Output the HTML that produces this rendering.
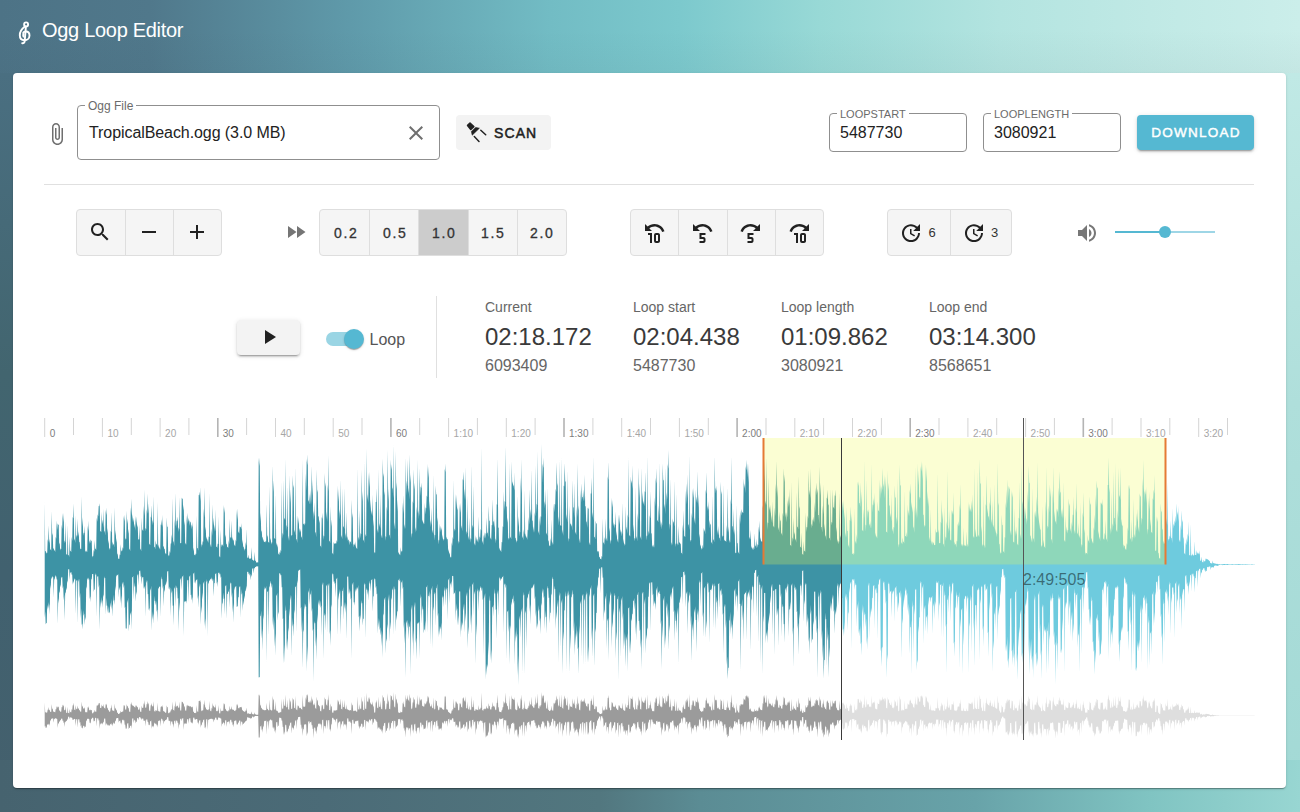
<!DOCTYPE html>
<html><head><meta charset="utf-8">
<style>
*{box-sizing:border-box;margin:0;padding:0}
html,body{width:1300px;height:812px;overflow:hidden}
body{position:relative;font-family:"Liberation Sans",sans-serif;background:#7cc9cd}
.bgt{position:absolute;left:0;top:0;width:1300px;height:90px;
 background:linear-gradient(180deg,rgba(40,60,70,0) 30px,rgba(40,60,70,0.06) 90px),
 linear-gradient(90deg,#4d7386 0,#50788b 150px,#5f9aaa 350px,#72bcc4 550px,#7cc9cd 680px,#98d9d6 820px,#b3e4e0 1000px,#c0e9e5 1150px,#cbeeea 1300px)}
.bgl{position:absolute;left:0;top:73px;width:40px;height:739px;background:linear-gradient(180deg,#4a6f81 0,#42656f 300px,#41616f 500px,#44606d 739px)}
.bgr{position:absolute;left:1260px;top:73px;width:40px;height:739px;background:linear-gradient(180deg,#c0e9e5 0,#afdfdb 330px,#a2d9d5 739px)}
.bgb{position:absolute;left:0;top:760px;width:1300px;height:52px;background:linear-gradient(90deg,#46636f 0,#4b6b77 325px,#52777f 600px,#5b8c94 700px,#68a3a9 975px,#80c4c2 1150px,#98d6d2 1300px)}
.abs{position:absolute}
.card{position:absolute;left:13px;top:73px;width:1273px;height:715px;background:#fff;border-radius:4px;
 box-shadow:0 2px 1px -1px rgba(0,0,0,.2),0 1px 1px 0 rgba(0,0,0,.14),0 1px 3px 0 rgba(0,0,0,.12)}
.title{position:absolute;left:42px;top:19px;font-size:20px;color:#fff;letter-spacing:-0.3px}
.field{position:absolute;border:1px solid #8f8f8f;border-radius:4px}
.flabel{position:absolute;background:#fff;color:#6b6b6b;font-size:12px;padding:0 3px;line-height:12px}
.ftext{position:absolute;color:#222;font-size:16px;line-height:16px}
.btn{position:absolute;background:#f3f3f3;border-radius:4px}
.grp{position:absolute;top:209px;height:47px;background:#f5f5f5;border:1px solid #dedede;border-radius:4px;overflow:hidden}
.grp .sep{position:absolute;top:0;bottom:0;width:1px;background:#dedede}
.spd{position:absolute;top:16px;font-size:14px;line-height:14px;color:#333;letter-spacing:1.6px;-webkit-text-stroke:0.3px #333}
.stat{position:absolute;color:#333}
.lab{font-size:14px;color:#666;line-height:14px}
.big{font-size:24px;color:#3a3a3a;line-height:24px}
.small{font-size:16px;color:#666;line-height:16px}
</style></head><body>
<div class="bgt"></div><div class="bgl"></div><div class="bgr"></div><div class="bgb"></div>
<!-- header -->
<svg class="abs" style="left:0;top:0" width="40" height="50" viewBox="0 0 40 50">
<g fill="none" stroke="#fff" stroke-width="1.9" stroke-linecap="round" stroke-linejoin="round">
<circle cx="26.1" cy="24.4" r="2"/>
<path d="M24.9 26.6 C21.3 29.3 19.8 32 19.8 35.2 C19.8 38.4 21.9 40.2 24.5 40.2 C27.4 40.2 29.5 38.1 29.5 35.4 C29.5 32.9 27.8 31.5 25.9 31.5 C24.2 31.5 23 32.4 23.3 33.6 C23.6 34.6 22.6 35.4 23.6 36.6"/>
<path d="M25.9 26.6 L24.7 41.2 C24.6 42.6 23.7 43.4 22.2 43.2"/>
</g></svg>
<div class="title">Ogg Loop Editor</div>

<div class="card"></div>

<!-- file row -->
<svg class="abs" style="left:45px;top:122px" width="24" height="24" viewBox="0 0 24 24"><path fill="#6f6f6f" d="M16.5 6v11.5c0 2.21-1.79 4-4 4s-4-1.79-4-4V5c0-1.38 1.12-2.5 2.5-2.5s2.5 1.12 2.5 2.5v10.5c0 .55-.45 1-1 1s-1-.45-1-1V6H10v9.5c0 1.38 1.12 2.5 2.5 2.5s2.5-1.12 2.5-2.5V5c0-2.21-1.79-4-4-4S7 2.79 7 5v12.5c0 3.04 2.46 5.5 5.5 5.5s5.5-2.46 5.5-5.5V6h-1.5z"/></svg>
<div class="field" style="left:77px;top:105px;width:363px;height:55px"></div>
<div class="flabel" style="left:85px;top:100px">Ogg File</div>
<div class="ftext" style="left:89px;top:124.5px;letter-spacing:-0.08px">TropicalBeach.ogg (3.0 MB)</div>
<svg class="abs" style="left:404px;top:121px" width="24" height="24" viewBox="0 0 24 24"><path fill="#6f6f6f" d="M19 6.41L17.59 5 12 10.59 6.41 5 5 6.41 10.59 12 5 17.59 6.41 19 12 13.41 17.59 19 19 17.59 13.41 12z"/></svg>

<div class="btn" style="left:456px;top:115px;width:95px;height:35px"></div>
<svg class="abs" style="left:462px;top:118px" width="30" height="28" viewBox="0 0 30 28">
<path d="M5.6 7.4 L8 5.2 L11.8 8.7 L8.8 11.4 Z" fill="#212121" stroke="#212121" stroke-width="1.6" stroke-linejoin="round"/>
<path d="M9.4 13.4 L13.6 9.4 L17.4 10.2 L10.2 17.2 Z" fill="#212121" stroke="#212121" stroke-width="0.6" stroke-linejoin="round"/>
<path d="M18.8 12.3 L23.7 16.8 M12.3 18.6 L17 23.5" stroke="#212121" stroke-width="1.5" stroke-linecap="round"/>
</svg>
<div class="abs" style="left:494px;top:126px;font-size:14px;line-height:14px;color:#212121;letter-spacing:1.1px;-webkit-text-stroke:0.5px #212121">SCAN</div>

<div class="field" style="left:829px;top:113px;width:138px;height:39px"></div>
<div class="flabel" style="left:837px;top:108px;font-size:11px;line-height:12px">LOOPSTART</div>
<div class="ftext" style="left:840px;top:125px">5487730</div>
<div class="field" style="left:983px;top:113px;width:138px;height:39px"></div>
<div class="flabel" style="left:991px;top:108px;font-size:11px;line-height:12px">LOOPLENGTH</div>
<div class="ftext" style="left:994px;top:125px">3080921</div>

<div class="abs" style="left:1137px;top:115px;width:117px;height:35px;background:#55b8d2;border-radius:4px;box-shadow:0 3px 1px -2px rgba(0,0,0,.2),0 2px 2px 0 rgba(0,0,0,.14),0 1px 5px 0 rgba(0,0,0,.12);color:#fff;font-size:13.5px;letter-spacing:1.25px;line-height:35px;text-align:center;padding-left:1px;-webkit-text-stroke:0.45px #fff">DOWNLOAD</div>

<div class="abs" style="left:44px;top:184px;width:1210px;height:1px;background:#e0e0e0"></div>

<!-- toolbar -->
<div class="grp" style="left:76px;width:146px">
 <div class="sep" style="left:48px"></div><div class="sep" style="left:96px"></div>
</div>
<svg class="abs" style="left:88px;top:220px" width="24" height="24" viewBox="0 0 24 24"><path fill="#212121" d="M15.5 14h-.79l-.28-.27C15.41 12.59 16 11.11 16 9.5 16 5.91 13.09 3 9.5 3S3 5.91 3 9.5 5.91 16 9.5 16c1.61 0 3.09-.59 4.23-1.57l.27.28v.79l5 4.99L20.49 19l-4.99-5zm-6 0C7.01 14 5 11.99 5 9.5S7.01 5 9.5 5 14 7.01 14 9.5 11.99 14 9.5 14z"/></svg>
<svg class="abs" style="left:137px;top:220px" width="24" height="24" viewBox="0 0 24 24"><path fill="#212121" d="M19 13H5v-2h14v2z"/></svg>
<svg class="abs" style="left:185px;top:220px" width="24" height="24" viewBox="0 0 24 24"><path fill="#212121" d="M19 13h-6v6h-2v-6H5v-2h6V5h2v6h6v2z"/></svg>

<svg class="abs" style="left:284px;top:220px" width="24" height="24" viewBox="0 0 24 24"><path fill="#757575" d="M4 18l8.5-6L4 6v12zm9-12v12l8.5-6L13 6z"/></svg>

<div class="grp" style="left:319px;width:248px">
 <div class="abs" style="left:99px;top:0;width:49px;height:45px;background:#cccccc"></div>
 <div class="sep" style="left:49px"></div><div class="sep" style="left:98px"></div><div class="sep" style="left:148px"></div><div class="sep" style="left:197px"></div>
 <div class="spd" style="left:14px">0.2</div>
 <div class="spd" style="left:63px">0.5</div>
 <div class="spd" style="left:112px">1.0</div>
 <div class="spd" style="left:161px">1.5</div>
 <div class="spd" style="left:210px">2.0</div>
</div>

<div class="grp" style="left:630px;width:194px">
 <div class="sep" style="left:47px"></div><div class="sep" style="left:96px"></div><div class="sep" style="left:144px"></div>
</div>
<svg class="abs" style="left:642px;top:220.5px" width="24" height="24" viewBox="0 0 24 24"><path fill="#212121" d="M12.5 3C17.15 3 21.08 6.03 22.47 10.22L20.1 11C19.05 7.81 16.04 5.5 12.5 5.5C10.54 5.5 8.77 6.22 7.38 7.38L10 10H3V3L5.6 5.6C7.45 4 9.85 3 12.5 3M10 12V22H8V14H6V12H10M18 14V20C18 21.11 17.11 22 16 22H14A2 2 0 0 1 12 20V14A2 2 0 0 1 14 12H16C17.11 12 18 12.89 18 14M14 14V20H16V14H14Z"/></svg>
<svg class="abs" style="left:690px;top:220.5px" width="24" height="24" viewBox="0 0 24 24"><path fill="#212121" d="M12.5 3C17.15 3 21.08 6.03 22.47 10.22L20.1 11C19.05 7.81 16.04 5.5 12.5 5.5C10.54 5.5 8.77 6.22 7.38 7.38L10 10H3V3L5.6 5.6C7.45 4 9.85 3 12.5 3M9.5 12H15.5V14H11.5V16H13.5C14.61 16 15.5 16.9 15.5 18V20C15.5 21.11 14.61 22 13.5 22H9.5V20H13.5V18H9.5V12Z"/></svg>
<svg class="abs" style="left:739px;top:220.5px" width="24" height="24" viewBox="0 0 24 24"><path fill="#212121" d="M11.5 3C14.15 3 16.55 4 18.4 5.6L21 3V10H14L16.62 7.38C15.23 6.22 13.46 5.5 11.5 5.5C7.96 5.5 4.95 7.81 3.9 11L1.53 10.22C2.92 6.03 6.85 3 11.5 3M8.5 12H14.5V14H10.5V16H12.5C13.61 16 14.5 16.9 14.5 18V20C14.5 21.11 13.61 22 12.5 22H8.5V20H12.5V18H8.5V12Z"/></svg>
<svg class="abs" style="left:787.5px;top:220.5px" width="24" height="24" viewBox="0 0 24 24"><path fill="#212121" d="M10 12V22H8V14H6V12H10M18 14V20C18 21.11 17.11 22 16 22H14A2 2 0 0 1 12 20V14A2 2 0 0 1 14 12H16C17.11 12 18 12.89 18 14M14 14V20H16V14H14M11.5 3C14.15 3 16.55 4 18.4 5.6L21 3V10H14L16.62 7.38C15.23 6.22 13.46 5.5 11.5 5.5C7.96 5.5 4.95 7.81 3.9 11L1.53 10.22C2.92 6.03 6.85 3 11.5 3Z"/></svg>


<div class="grp" style="left:887px;width:125px">
 <div class="sep" style="left:62px"></div>
</div>
<svg class="abs" style="left:899.2px;top:220.5px" width="24" height="24" viewBox="0 0 24 24"><path fill="#212121" d="M21 10.12h-6.78l2.74-2.82c-2.73-2.7-7.15-2.8-9.88-.1-2.73 2.71-2.73 7.08 0 9.79s7.15 2.71 9.88 0C18.32 15.65 19 14.08 19 12.1h2c0 1.98-.88 4.55-2.64 6.29-3.51 3.48-9.21 3.48-12.72 0-3.5-3.47-3.53-9.11-.02-12.58s9.14-3.47 12.65 0L21 3v7.12zM12.5 8v4.25l3.5 2.08-.72 1.21L11 13V8h1.5z"/></svg>
<div class="abs" style="left:928.5px;top:226px;font-size:13px;line-height:13px;color:#333">6</div>
<svg class="abs" style="left:962px;top:220.5px" width="24" height="24" viewBox="0 0 24 24"><path fill="#212121" d="M21 10.12h-6.78l2.74-2.82c-2.73-2.7-7.15-2.8-9.88-.1-2.73 2.71-2.73 7.08 0 9.79s7.15 2.71 9.88 0C18.32 15.65 19 14.08 19 12.1h2c0 1.98-.88 4.55-2.64 6.29-3.51 3.48-9.21 3.48-12.72 0-3.5-3.47-3.53-9.11-.02-12.58s9.14-3.47 12.65 0L21 3v7.12zM12.5 8v4.25l3.5 2.08-.72 1.21L11 13V8h1.5z"/></svg>
<div class="abs" style="left:991px;top:226px;font-size:13px;line-height:13px;color:#333">3</div>


<svg class="abs" style="left:1075px;top:220.5px" width="24" height="24" viewBox="0 0 24 24"><path fill="#777" d="M3 9v6h4l5 5V4L7 9H3zm13.5 3c0-1.77-1.02-3.29-2.5-4.03v8.05c1.48-.73 2.5-2.25 2.5-4.02zM14 3.23v2.06c2.89.86 5 3.54 5 6.71s-2.11 5.85-5 6.71v2.06c4.01-.91 7-4.49 7-8.77s-2.99-7.86-7-8.77z"/></svg>
<div class="abs" style="left:1115px;top:231px;width:100px;height:2px;background:#9ed6e6"></div>
<div class="abs" style="left:1115px;top:231px;width:50px;height:2px;background:#55b8d2"></div>
<div class="abs" style="left:1159px;top:226px;width:12px;height:12px;border-radius:50%;background:#55b8d2"></div>

<!-- play row -->
<div class="btn" style="left:237px;top:320px;width:63px;height:35px;box-shadow:0 3px 1px -2px rgba(0,0,0,.2),0 2px 2px 0 rgba(0,0,0,.14),0 1px 5px 0 rgba(0,0,0,.12)"></div>
<svg class="abs" style="left:257px;top:325px" width="24" height="24" viewBox="0 0 24 24"><path fill="#212121" d="M8 5v14l11-7z"/></svg>
<div class="abs" style="left:326px;top:332px;width:36px;height:14px;border-radius:7px;background:#9ad5e4"></div>
<div class="abs" style="left:344px;top:329px;width:20px;height:20px;border-radius:50%;background:#55b8d2;box-shadow:0 2px 1px -1px rgba(0,0,0,.2),0 1px 1px 0 rgba(0,0,0,.14),0 1px 3px 0 rgba(0,0,0,.12)"></div>
<div class="abs" style="left:369.5px;top:331.5px;font-size:16px;line-height:16px;color:#555">Loop</div>
<div class="abs" style="left:436px;top:296px;width:1px;height:82px;background:#e0e0e0"></div>

<div class="stat" style="left:485px;top:300px"><div class="lab">Current</div></div>
<div class="stat" style="left:485px;top:325px"><div class="big">02:18.172</div></div>
<div class="stat" style="left:485px;top:357.5px"><div class="small">6093409</div></div>
<div class="stat" style="left:633px;top:300px"><div class="lab">Loop start</div></div>
<div class="stat" style="left:633px;top:325px"><div class="big">02:04.438</div></div>
<div class="stat" style="left:633px;top:357.5px"><div class="small">5487730</div></div>
<div class="stat" style="left:781px;top:300px"><div class="lab">Loop length</div></div>
<div class="stat" style="left:781px;top:325px"><div class="big">01:09.862</div></div>
<div class="stat" style="left:781px;top:357.5px"><div class="small">3080921</div></div>
<div class="stat" style="left:929px;top:300px"><div class="lab">Loop end</div></div>
<div class="stat" style="left:929px;top:325px"><div class="big">03:14.300</div></div>
<div class="stat" style="left:929px;top:357.5px"><div class="small">8568651</div></div>

<svg class="abs" style="left:0;top:0" width="1300" height="812" viewBox="0 0 1300 812">
<defs><path id="wm" d="M44.7 564.5L44.7 501.5L45.2 551.1L45.7 551.1L46.2 553.7L46.7 552.3L47.2 552.9L47.7 539.0L48.2 542.0L48.7 525.2L49.2 543.2L49.7 538.8L50.2 550.2L50.7 549.1L51.2 550.7L51.7 511.1L52.2 535.5L52.7 533.0L53.2 549.1L53.7 548.0L54.2 551.2L54.7 549.4L55.2 552.2L55.7 536.7L56.2 538.8L56.7 520.3L57.2 530.3L57.7 523.2L58.2 525.0L58.7 524.3L59.2 544.4L59.7 542.4L60.2 550.6L60.7 548.4L61.2 549.3L61.7 524.4L62.2 528.9L62.7 513.0L63.2 522.1L63.7 512.7L64.2 543.6L64.7 540.2L65.2 542.5L65.7 521.3L66.2 555.1L66.7 554.1L67.2 554.8L67.7 524.5L68.2 555.1L68.7 555.1L69.2 557.0L69.7 536.4L70.2 551.4L70.7 550.5L71.2 552.2L71.7 536.7L72.2 540.9L72.7 517.0L73.2 518.3L73.7 503.5L74.2 540.6L74.7 538.4L75.2 542.9L75.7 515.2L76.2 537.9L76.7 535.2L77.2 535.7L77.7 518.5L78.2 536.1L78.7 531.2L79.2 542.5L79.7 541.6L80.2 549.4L80.7 548.4L81.2 549.3L81.7 496.3L82.2 526.3L82.7 517.8L83.2 535.8L83.7 532.7L84.2 532.9L84.7 525.7L85.2 552.6L85.7 550.4L86.2 552.2L86.7 550.3L87.2 552.3L87.7 525.6L88.2 531.0L88.7 520.4L89.2 544.1L89.7 540.2L90.2 543.2L90.7 539.2L91.2 541.2L91.7 540.2L92.2 557.5L92.7 556.1L93.2 556.2L93.7 549.7L94.2 551.7L94.7 540.1L95.2 549.5L95.7 548.3L96.2 550.3L96.7 517.4L97.2 521.7L97.7 514.3L98.2 516.4L98.7 506.0L99.2 506.2L99.7 503.3L100.2 531.5L100.7 530.9L101.2 532.3L101.7 511.7L102.2 524.0L102.7 519.5L103.2 527.9L103.7 508.8L104.2 531.9L104.7 530.5L105.2 535.6L105.7 509.8L106.2 515.0L106.7 507.6L107.2 533.1L107.7 528.1L108.2 543.7L108.7 540.1L109.2 549.9L109.7 548.1L110.2 548.7L110.7 530.4L111.2 532.6L111.7 512.0L112.2 545.9L112.7 541.6L113.2 545.0L113.7 543.5L114.2 547.5L114.7 507.3L115.2 535.5L115.7 529.9L116.2 542.8L116.7 538.0L117.2 554.8L117.7 553.2L118.2 559.0L118.7 558.6L119.2 559.2L119.7 554.3L120.2 555.2L120.7 544.1L121.2 551.7L121.7 550.6L122.2 550.8L122.7 547.1L123.2 548.7L123.7 515.7L124.2 521.1L124.7 514.4L125.2 540.1L125.7 538.3L126.2 539.1L126.7 510.5L127.2 523.7L127.7 518.7L128.2 533.7L128.7 529.1L129.2 550.0L129.7 548.4L130.2 551.4L130.7 507.1L131.2 514.9L131.7 498.5L132.2 521.9L132.7 514.6L133.2 522.2L133.7 517.5L134.2 527.9L134.7 523.4L135.2 530.8L135.7 515.6L136.2 525.1L136.7 516.2L137.2 527.6L137.7 524.9L138.2 539.7L138.7 539.3L139.2 539.5L139.7 524.4L140.2 549.9L140.7 548.6L141.2 551.5L141.7 517.5L142.2 531.1L142.7 529.3L143.2 531.2L143.7 505.8L144.2 516.0L144.7 489.6L145.2 531.4L145.7 527.8L146.2 529.6L146.7 508.9L147.2 513.8L147.7 493.6L148.2 513.4L148.7 503.1L149.2 545.1L149.7 543.5L150.2 545.2L150.7 516.6L151.2 517.9L151.7 505.0L152.2 525.3L152.7 519.7L153.2 523.3L153.7 496.2L154.2 546.9L154.7 546.7L155.2 549.3L155.7 540.1L156.2 544.7L156.7 543.5L157.2 546.1L157.7 501.7L158.2 547.7L158.7 544.3L159.2 549.6L159.7 546.9L160.2 550.1L160.7 524.3L161.2 525.4L161.7 519.3L162.2 526.9L162.7 514.8L163.2 546.8L163.7 546.1L164.2 549.3L164.7 548.6L165.2 554.6L165.7 552.8L166.2 554.2L166.7 517.2L167.2 527.3L167.7 526.2L168.2 556.6L168.7 555.1L169.2 555.7L169.7 550.8L170.2 552.9L170.7 543.4L171.2 543.6L171.7 534.3L172.2 538.8L172.7 497.4L173.2 541.6L173.7 541.5L174.2 546.1L174.7 519.0L175.2 526.8L175.7 492.7L176.2 528.3L176.7 520.7L177.2 520.8L177.7 516.5L178.2 532.0L178.7 527.3L179.2 529.6L179.7 496.5L180.2 543.4L180.7 543.0L181.2 543.1L181.7 497.4L182.2 499.3L182.7 498.0L183.2 510.6L183.7 504.8L184.2 525.3L184.7 520.8L185.2 544.7L185.7 542.8L186.2 544.8L186.7 515.3L187.2 523.9L187.7 512.8L188.2 521.5L188.7 517.8L189.2 525.9L189.7 520.0L190.2 522.8L190.7 521.2L191.2 529.3L191.7 524.3L192.2 527.1L192.7 522.1L193.2 550.9L193.7 547.6L194.2 555.5L194.7 554.4L195.2 555.6L195.7 553.6L196.2 553.9L196.7 515.2L197.2 548.0L197.7 547.9L198.2 550.7L198.7 495.1L199.2 495.2L199.7 491.5L200.2 501.1L200.7 486.7L201.2 547.4L201.7 544.0L202.2 545.6L202.7 541.2L203.2 541.8L203.7 508.2L204.2 517.5L204.7 487.3L205.2 530.2L205.7 526.6L206.2 539.3L206.7 536.5L207.2 541.9L207.7 538.5L208.2 543.3L208.7 536.3L209.2 537.2L209.7 492.8L210.2 547.4L210.7 543.8L211.2 547.6L211.7 528.5L212.2 535.7L212.7 504.1L213.2 525.2L213.7 517.4L214.2 531.7L214.7 524.7L215.2 531.5L215.7 509.3L216.2 547.1L216.7 546.4L217.2 547.9L217.7 543.5L218.2 544.3L218.7 516.0L219.2 557.5L219.7 555.9L220.2 557.4L220.7 529.6L221.2 547.6L221.7 544.3L222.2 545.7L222.7 544.0L223.2 546.8L223.7 504.8L224.2 513.0L224.7 506.7L225.2 537.2L225.7 534.5L226.2 544.4L226.7 543.4L227.2 547.2L227.7 547.0L228.2 547.9L228.7 539.9L229.2 544.2L229.7 518.5L230.2 538.6L230.7 537.0L231.2 537.7L231.7 520.3L232.2 540.7L232.7 537.0L233.2 540.9L233.7 539.2L234.2 546.2L234.7 544.2L235.2 546.6L235.7 539.6L236.2 541.4L236.7 509.7L237.2 520.0L237.7 507.9L238.2 533.2L238.7 531.3L239.2 533.8L239.7 526.3L240.2 527.3L240.7 526.4L241.2 529.2L241.7 523.1L242.2 544.3L242.7 539.4L243.2 547.0L243.7 546.4L244.2 551.0L244.7 548.5L245.2 549.0L245.7 541.9L246.2 545.8L246.7 528.7L247.2 558.4L247.7 557.2L248.2 558.3L248.7 554.6L249.2 559.1L249.7 558.4L250.2 559.1L250.7 558.2L251.2 558.3L251.7 547.0L252.2 560.0L252.7 559.4L253.2 561.1L253.7 560.3L254.2 560.3L254.7 551.8L255.2 561.0L255.7 560.5L256.2 562.5L256.7 562.4L257.2 562.6L257.7 562.3L258.2 562.5L258.7 457.5L259.2 466.0L259.7 457.5L260.2 521.2L260.7 512.7L261.2 531.9L261.7 530.2L262.2 537.8L262.7 537.0L263.2 541.9L263.7 538.7L264.2 542.0L264.7 541.9L265.2 542.6L265.7 541.1L266.2 541.5L266.7 503.5L267.2 537.0L267.7 535.1L268.2 542.5L268.7 542.0L269.2 542.7L269.7 485.2L270.2 540.5L270.7 538.1L271.2 544.4L271.7 542.2L272.2 542.5L272.7 465.3L273.2 491.8L273.7 480.1L274.2 538.8L274.7 538.0L275.2 539.2L275.7 494.0L276.2 545.5L276.7 542.6L277.2 547.5L277.7 543.8L278.2 554.8L278.7 553.2L279.2 555.3L279.7 551.4L280.2 553.4L280.7 549.6L281.2 551.6L281.7 481.6L282.2 538.7L282.7 532.5L283.2 534.9L283.7 479.5L284.2 520.1L284.7 517.7L285.2 520.1L285.7 458.7L286.2 531.1L286.7 524.7L287.2 527.4L287.7 485.7L288.2 540.8L288.7 535.4L289.2 540.9L289.7 474.4L290.2 503.2L290.7 488.8L291.2 536.4L291.7 534.9L292.2 535.0L292.7 475.2L293.2 488.0L293.7 484.8L294.2 532.3L294.7 529.8L295.2 535.8L295.7 465.9L296.2 539.4L296.7 539.0L297.2 543.1L297.7 515.3L298.2 524.0L298.7 516.9L299.2 533.1L299.7 528.1L300.2 532.1L300.7 528.7L301.2 537.5L301.7 536.3L302.2 540.2L302.7 459.4L303.2 524.2L303.7 523.4L304.2 525.4L304.7 523.3L305.2 523.7L305.7 473.0L306.2 490.7L306.7 458.9L307.2 465.3L307.7 454.2L308.2 501.3L308.7 499.9L309.2 504.6L309.7 493.7L310.2 504.8L310.7 489.7L311.2 504.5L311.7 465.4L312.2 495.2L312.7 479.4L313.2 519.9L313.7 510.6L314.2 516.5L314.7 501.9L315.2 532.7L315.7 532.1L316.2 537.3L316.7 469.3L317.2 492.5L317.7 489.4L318.2 516.7L318.7 516.1L319.2 522.9L319.7 519.5L320.2 546.5L320.7 545.5L321.2 547.7L321.7 517.1L322.2 518.7L322.7 512.8L323.2 540.0L323.7 535.2L324.2 536.5L324.7 473.0L325.2 487.0L325.7 482.3L326.2 519.7L326.7 511.6L327.2 522.1L327.7 484.5L328.2 490.9L328.7 455.2L329.2 541.6L329.7 540.6L330.2 543.3L330.7 506.3L331.2 526.5L331.7 519.5L332.2 554.1L332.7 552.7L333.2 554.8L333.7 541.8L334.2 544.0L334.7 543.3L335.2 543.9L335.7 542.8L336.2 543.8L336.7 539.9L337.2 541.9L337.7 485.2L338.2 501.4L338.7 488.7L339.2 519.5L339.7 509.4L340.2 516.1L340.7 479.1L341.2 537.7L341.7 535.1L342.2 539.4L342.7 487.8L343.2 527.2L343.7 526.0L344.2 529.1L344.7 487.3L345.2 538.7L345.7 532.8L346.2 537.9L346.7 511.8L347.2 541.5L347.7 536.0L348.2 540.3L348.7 539.6L349.2 545.2L349.7 540.8L350.2 541.9L350.7 541.3L351.2 544.3L351.7 499.4L352.2 518.0L352.7 513.1L353.2 547.5L353.7 544.1L354.2 545.2L354.7 543.0L355.2 547.2L355.7 540.9L356.2 549.1L356.7 547.5L357.2 549.3L357.7 467.3L358.2 540.7L358.7 536.6L359.2 539.9L359.7 510.1L360.2 538.5L360.7 533.1L361.2 534.3L361.7 469.5L362.2 501.3L362.7 491.8L363.2 540.7L363.7 539.6L364.2 543.1L364.7 460.9L365.2 537.4L365.7 534.1L366.2 536.4L366.7 448.5L367.2 500.8L367.7 494.0L368.2 503.1L368.7 472.4L369.2 487.6L369.7 471.6L370.2 511.3L370.7 499.6L371.2 515.3L371.7 510.5L372.2 516.4L372.7 494.6L373.2 526.4L373.7 519.4L374.2 553.5L374.7 552.0L375.2 552.7L375.7 502.0L376.2 502.1L376.7 488.0L377.2 532.9L377.7 528.8L378.2 532.9L378.7 468.9L379.2 527.2L379.7 522.9L380.2 529.0L380.7 493.5L381.2 538.4L381.7 534.4L382.2 538.6L382.7 458.6L383.2 476.9L383.7 472.9L384.2 495.3L384.7 491.0L385.2 540.7L385.7 536.0L386.2 537.0L386.7 506.2L387.2 511.0L387.7 450.0L388.2 501.0L388.7 488.4L389.2 535.4L389.7 534.5L390.2 539.0L390.7 459.5L391.2 469.9L391.7 463.9L392.2 489.2L392.7 487.2L393.2 498.4L393.7 444.4L394.2 529.7L394.7 522.3L395.2 529.9L395.7 451.1L396.2 489.1L396.7 482.1L397.2 511.3L397.7 498.9L398.2 553.6L398.7 551.7L399.2 555.3L399.7 553.5L400.2 555.4L400.7 547.0L401.2 552.6L401.7 550.6L402.2 551.4L402.7 502.1L403.2 512.9L403.7 494.7L404.2 528.9L404.7 524.0L405.2 529.1L405.7 457.1L406.2 495.2L406.7 480.5L407.2 486.6L407.7 459.6L408.2 493.0L408.7 487.4L409.2 499.8L409.7 454.2L410.2 482.5L410.7 474.0L411.2 538.0L411.7 533.4L412.2 533.5L412.7 501.0L413.2 503.5L413.7 469.1L414.2 489.6L414.7 483.0L415.2 532.8L415.7 527.0L416.2 531.6L416.7 506.4L417.2 513.3L417.7 459.4L418.2 519.3L418.7 510.1L419.2 516.2L419.7 468.1L420.2 495.9L420.7 486.4L421.2 488.1L421.7 482.6L422.2 521.9L422.7 519.4L423.2 524.5L423.7 522.0L424.2 524.2L424.7 502.6L425.2 514.6L425.7 507.2L426.2 508.5L426.7 495.6L427.2 497.1L427.7 463.7L428.2 477.7L428.7 466.2L429.2 510.9L429.7 500.8L430.2 527.3L430.7 519.9L431.2 525.1L431.7 507.7L432.2 533.4L432.7 529.6L433.2 534.2L433.7 474.2L434.2 540.4L434.7 534.7L435.2 535.3L435.7 485.5L436.2 494.7L436.7 493.9L437.2 522.1L437.7 517.3L438.2 544.4L438.7 539.7L439.2 540.5L439.7 523.2L440.2 532.3L440.7 525.6L441.2 530.4L441.7 526.9L442.2 539.5L442.7 534.2L443.2 541.1L443.7 538.9L444.2 539.4L444.7 468.8L445.2 472.0L445.7 463.4L446.2 539.8L446.7 536.5L447.2 539.6L447.7 538.7L448.2 552.0L448.7 549.1L449.2 554.3L449.7 552.2L450.2 558.0L450.7 556.5L451.2 557.4L451.7 542.1L452.2 546.0L452.7 536.7L453.2 539.2L453.7 479.3L454.2 531.7L454.7 528.4L455.2 530.6L455.7 493.4L456.2 507.8L456.7 494.5L457.2 510.2L457.7 507.8L458.2 544.1L458.7 540.8L459.2 542.5L459.7 503.7L460.2 512.8L460.7 502.5L461.2 528.8L461.7 525.2L462.2 531.6L462.7 479.1L463.2 480.4L463.7 471.4L464.2 499.9L464.7 488.3L465.2 500.4L465.7 466.4L466.2 534.8L466.7 530.9L467.2 533.2L467.7 495.4L468.2 539.9L468.7 535.7L469.2 540.5L469.7 517.4L470.2 542.7L470.7 537.9L471.2 539.6L471.7 464.6L472.2 528.8L472.7 524.7L473.2 527.8L473.7 485.2L474.2 545.4L474.7 542.8L475.2 545.8L475.7 535.1L476.2 541.3L476.7 536.5L477.2 542.5L477.7 538.4L478.2 543.1L478.7 516.1L479.2 540.8L479.7 536.2L480.2 538.0L480.7 528.7L481.2 530.5L481.7 447.3L482.2 543.1L482.7 540.5L483.2 545.1L483.7 534.8L484.2 538.5L484.7 532.1L485.2 538.8L485.7 533.0L486.2 533.7L486.7 517.8L487.2 533.2L487.7 532.2L488.2 537.0L488.7 505.5L489.2 521.2L489.7 520.2L490.2 539.4L490.7 537.2L491.2 540.1L491.7 525.0L492.2 525.3L492.7 498.7L493.2 521.7L493.7 521.1L494.2 527.8L494.7 518.7L495.2 543.4L495.7 538.3L496.2 540.7L496.7 504.2L497.2 504.7L497.7 457.7L498.2 527.7L498.7 527.5L499.2 550.3L499.7 547.5L500.2 550.5L500.7 550.5L501.2 552.3L501.7 541.7L502.2 542.5L502.7 526.3L503.2 527.1L503.7 491.3L504.2 510.8L504.7 501.1L505.2 501.9L505.7 446.2L506.2 507.2L506.7 505.7L507.2 522.4L507.7 517.8L508.2 540.1L508.7 537.8L509.2 538.8L509.7 462.0L510.2 538.2L510.7 536.5L511.2 539.6L511.7 461.1L512.2 484.4L512.7 481.3L513.2 485.6L513.7 485.4L514.2 490.5L514.7 472.3L515.2 538.3L515.7 537.5L516.2 542.7L516.7 540.2L517.2 541.1L517.7 495.2L518.2 526.0L518.7 516.5L519.2 536.6L519.7 530.9L520.2 532.4L520.7 477.1L521.2 493.2L521.7 459.0L522.2 538.3L522.7 536.1L523.2 540.3L523.7 529.2L524.2 534.6L524.7 489.7L525.2 537.0L525.7 533.2L526.2 538.5L526.7 535.9L527.2 540.1L527.7 529.4L528.2 530.4L528.7 516.7L529.2 524.8L529.7 489.1L530.2 519.1L530.7 509.1L531.2 515.9L531.7 469.0L532.2 521.1L532.7 520.3L533.2 532.7L533.7 526.2L534.2 532.7L534.7 511.9L535.2 516.4L535.7 465.4L536.2 513.8L536.7 503.8L537.2 505.0L537.7 451.0L538.2 533.4L538.7 530.7L539.2 535.4L539.7 516.6L540.2 526.0L540.7 516.3L541.2 516.7L541.7 444.1L542.2 482.8L542.7 463.6L543.2 467.9L543.7 457.8L544.2 508.4L544.7 501.1L545.2 505.2L545.7 489.1L546.2 534.5L546.7 532.5L547.2 535.9L547.7 487.1L548.2 541.5L548.7 540.0L549.2 546.4L549.7 545.2L550.2 546.0L550.7 538.1L551.2 542.0L551.7 518.8L552.2 545.3L552.7 541.7L553.2 544.7L553.7 503.2L554.2 512.3L554.7 503.8L555.2 504.7L555.7 488.4L556.2 492.1L556.7 462.3L557.2 485.9L557.7 483.0L558.2 525.7L558.7 516.2L559.2 522.6L559.7 459.4L560.2 526.1L560.7 525.0L561.2 526.1L561.7 457.1L562.2 533.9L562.7 529.5L563.2 536.1L563.7 485.6L564.2 486.4L564.7 463.0L565.2 482.1L565.7 481.0L566.2 519.8L566.7 514.1L567.2 522.7L567.7 469.5L568.2 542.1L568.7 537.9L569.2 539.3L569.7 505.5L570.2 523.7L570.7 523.6L571.2 526.5L571.7 524.1L572.2 530.8L572.7 479.4L573.2 507.5L573.7 507.3L574.2 518.0L574.7 482.5L575.2 533.9L575.7 531.6L576.2 535.3L576.7 506.7L577.2 517.2L577.7 463.5L578.2 510.6L578.7 505.2L579.2 543.6L579.7 538.3L580.2 543.2L580.7 489.7L581.2 502.2L581.7 483.2L582.2 497.2L582.7 496.8L583.2 501.3L583.7 489.3L584.2 501.3L584.7 474.6L585.2 506.4L585.7 506.1L586.2 522.5L586.7 521.1L587.2 528.0L587.7 507.6L588.2 509.3L588.7 507.2L589.2 545.5L589.7 541.9L590.2 545.5L590.7 493.4L591.2 493.6L591.7 477.5L592.2 518.1L592.7 512.1L593.2 520.8L593.7 456.2L594.2 537.0L594.7 536.8L595.2 539.2L595.7 520.4L596.2 524.0L596.7 522.8L597.2 552.5L597.7 550.7L598.2 551.6L598.7 551.3L599.2 557.0L599.7 556.9L600.2 559.0L600.7 558.7L601.2 559.7L601.7 555.7L602.2 556.9L602.7 518.0L603.2 543.6L603.7 542.1L604.2 544.7L604.7 537.1L605.2 540.3L605.7 518.2L606.2 541.5L606.7 537.6L607.2 541.6L607.7 476.3L608.2 479.9L608.7 461.6L609.2 531.6L609.7 527.5L610.2 544.3L610.7 540.3L611.2 540.4L611.7 497.4L612.2 507.5L612.7 499.8L613.2 526.3L613.7 521.9L614.2 528.8L614.7 524.1L615.2 524.9L615.7 511.4L616.2 535.9L616.7 531.1L617.2 542.4L617.7 538.4L618.2 542.9L618.7 514.3L619.2 524.2L619.7 514.3L620.2 532.8L620.7 528.9L621.2 536.4L621.7 530.7L622.2 534.3L622.7 502.2L623.2 543.6L623.7 538.8L624.2 545.9L624.7 543.2L625.2 544.9L625.7 505.8L626.2 529.9L626.7 526.4L627.2 533.9L627.7 514.2L628.2 517.8L628.7 457.3L629.2 536.6L629.7 534.8L630.2 536.8L630.7 476.2L631.2 483.2L631.7 480.0L632.2 488.7L632.7 465.0L633.2 531.8L633.7 524.2L634.2 541.2L634.7 537.7L635.2 538.8L635.7 486.0L636.2 538.8L636.7 535.9L637.2 541.4L637.7 512.9L638.2 521.0L638.7 467.0L639.2 497.5L639.7 483.2L640.2 538.8L640.7 536.0L641.2 540.2L641.7 467.1L642.2 502.9L642.7 492.0L643.2 504.8L643.7 501.1L644.2 506.3L644.7 491.2L645.2 491.9L645.7 471.6L646.2 540.5L646.7 535.7L647.2 535.8L647.7 455.0L648.2 535.5L648.7 530.4L649.2 534.1L649.7 514.9L650.2 518.4L650.7 490.4L651.2 533.7L651.7 533.0L652.2 547.5L652.7 544.9L653.2 547.5L653.7 544.3L654.2 547.7L654.7 496.9L655.2 506.4L655.7 477.7L656.2 483.5L656.7 468.0L657.2 520.5L657.7 520.2L658.2 522.4L658.7 505.2L659.2 516.9L659.7 461.4L660.2 527.6L660.7 519.7L661.2 529.5L661.7 521.8L662.2 525.7L662.7 463.5L663.2 480.7L663.7 479.6L664.2 508.3L664.7 503.7L665.2 514.0L665.7 467.2L666.2 506.1L666.7 492.2L667.2 499.5L667.7 464.0L668.2 468.8L668.7 449.9L669.2 529.7L669.7 523.2L670.2 525.8L670.7 478.1L671.2 545.7L671.7 542.1L672.2 545.0L672.7 518.2L673.2 522.8L673.7 521.1L674.2 526.8L674.7 479.7L675.2 546.9L675.7 543.6L676.2 543.7L676.7 493.0L677.2 545.8L677.7 542.9L678.2 545.2L678.7 525.8L679.2 543.0L679.7 542.1L680.2 544.3L680.7 543.1L681.2 553.1L681.7 552.7L682.2 554.6L682.7 524.6L683.2 531.2L683.7 510.1L684.2 536.9L684.7 535.8L685.2 537.3L685.7 490.6L686.2 504.4L686.7 483.3L687.2 498.3L687.7 474.3L688.2 525.3L688.7 524.1L689.2 530.0L689.7 454.3L690.2 542.0L690.7 539.9L691.2 540.3L691.7 512.8L692.2 518.3L692.7 488.5L693.2 498.0L693.7 487.6L694.2 523.4L694.7 517.6L695.2 525.2L695.7 489.4L696.2 502.8L696.7 496.4L697.2 503.4L697.7 471.1L698.2 507.6L698.7 494.0L699.2 537.7L699.7 533.6L700.2 546.4L700.7 544.3L701.2 549.9L701.7 547.7L702.2 548.9L702.7 544.4L703.2 548.2L703.7 527.5L704.2 531.7L704.7 528.9L705.2 534.4L705.7 489.4L706.2 493.7L706.7 472.0L707.2 511.1L707.7 505.5L708.2 509.9L708.7 501.1L709.2 528.8L709.7 520.0L710.2 525.1L710.7 523.5L711.2 542.4L711.7 542.2L712.2 544.6L712.7 494.7L713.2 540.6L713.7 539.1L714.2 542.6L714.7 455.6L715.2 493.4L715.7 487.3L716.2 490.9L716.7 485.6L717.2 534.9L717.7 529.3L718.2 535.4L718.7 525.8L719.2 537.9L719.7 537.5L720.2 541.5L720.7 481.6L721.2 494.5L721.7 491.1L722.2 537.4L722.7 535.4L723.2 535.9L723.7 483.9L724.2 541.3L724.7 539.6L725.2 541.3L725.7 540.7L726.2 542.2L726.7 525.0L727.2 532.1L727.7 487.0L728.2 532.5L728.7 526.6L729.2 543.3L729.7 539.4L730.2 542.7L730.7 498.9L731.2 504.4L731.7 456.3L732.2 526.3L732.7 526.2L733.2 533.1L733.7 508.6L734.2 535.1L734.7 528.8L735.2 553.6L735.7 552.5L736.2 553.3L736.7 504.1L737.2 543.6L737.7 542.8L738.2 553.6L738.7 551.7L739.2 554.2L739.7 514.2L740.2 524.0L740.7 510.8L741.2 515.8L741.7 509.0L742.2 512.4L742.7 512.3L743.2 513.3L743.7 478.2L744.2 488.2L744.7 483.3L745.2 493.3L745.7 465.9L746.2 470.5L746.7 459.8L747.2 477.6L747.7 463.0L748.2 482.2L748.7 463.6L749.2 539.5L749.7 536.8L750.2 539.4L750.7 529.7L751.2 548.6L751.7 546.0L752.2 550.1L752.7 547.2L753.2 550.2L753.7 546.7L754.2 549.5L754.7 532.9L755.2 545.8L755.7 545.5L756.2 548.3L756.7 538.8L757.2 547.7L757.7 543.9L758.2 545.2L758.7 526.2L759.2 532.8L759.7 520.5L760.2 540.9L760.7 537.3L761.2 542.1L761.7 541.1L762.2 542.0L762.7 505.1L763.2 510.5L763.7 463.0L764.2 481.7L764.7 459.0L765.2 505.0L765.7 500.6L766.2 505.2L766.7 456.5L767.2 529.7L767.7 522.3L768.2 523.2L768.7 476.8L769.2 510.4L769.7 506.2L770.2 513.7L770.7 504.4L771.2 522.5L771.7 514.7L772.2 523.7L772.7 500.9L773.2 527.4L773.7 525.4L774.2 527.8L774.7 507.2L775.2 516.3L775.7 483.5L776.2 493.5L776.7 460.8L777.2 497.4L777.7 485.4L778.2 530.4L778.7 526.9L779.2 532.5L779.7 511.4L780.2 521.6L780.7 519.7L781.2 534.8L781.7 532.6L782.2 536.0L782.7 512.6L783.2 516.8L783.7 468.0L784.2 482.1L784.7 474.3L785.2 517.5L785.7 512.0L786.2 522.2L786.7 512.0L787.2 517.4L787.7 499.9L788.2 507.2L788.7 495.7L789.2 505.8L789.7 488.5L790.2 545.2L790.7 544.9L791.2 546.5L791.7 481.3L792.2 542.3L792.7 537.2L793.2 539.7L793.7 517.4L794.2 534.7L794.7 531.9L795.2 540.5L795.7 538.5L796.2 542.7L796.7 492.0L797.2 526.9L797.7 526.4L798.2 529.3L798.7 475.3L799.2 509.0L799.7 506.1L800.2 547.6L800.7 546.6L801.2 548.2L801.7 532.3L802.2 554.7L802.7 553.8L803.2 555.1L803.7 541.1L804.2 551.4L804.7 550.4L805.2 552.0L805.7 512.3L806.2 532.0L806.7 526.7L807.2 527.6L807.7 515.3L808.2 518.7L808.7 469.6L809.2 495.2L809.7 489.8L810.2 498.7L810.7 467.9L811.2 528.6L811.7 523.4L812.2 526.4L812.7 518.9L813.2 522.0L813.7 516.6L814.2 522.9L814.7 501.9L815.2 512.8L815.7 487.8L816.2 495.6L816.7 482.6L817.2 493.2L817.7 488.5L818.2 515.1L818.7 515.1L819.2 524.3L819.7 466.1L820.2 495.3L820.7 482.6L821.2 527.1L821.7 527.1L822.2 532.4L822.7 505.3L823.2 514.4L823.7 484.1L824.2 530.5L824.7 523.4L825.2 536.7L825.7 535.1L826.2 540.3L826.7 497.5L827.2 498.9L827.7 489.5L828.2 505.5L828.7 504.0L829.2 537.9L829.7 537.8L830.2 540.8L830.7 488.1L831.2 525.4L831.7 521.8L832.2 522.8L832.7 489.0L833.2 508.1L833.7 506.7L834.2 508.9L834.7 495.2L835.2 496.1L835.7 489.5L836.2 531.9L836.7 527.1L837.2 542.8L837.7 538.9L838.2 544.2L838.7 540.9L839.2 541.8L839.7 492.3L840.2 537.9L840.7 535.0L841.2 540.0L841.7 486.0L842.2 511.1L842.7 501.1L843.2 511.6L843.7 499.3L844.2 519.2L844.7 512.0L845.2 537.7L845.7 532.2L846.2 537.8L846.7 506.8L847.2 530.9L847.7 530.7L848.2 547.0L848.7 544.5L849.2 548.2L849.7 519.7L850.2 520.9L850.7 506.3L851.2 522.0L851.7 513.6L852.2 554.1L852.7 553.6L853.2 554.9L853.7 552.7L854.2 554.0L854.7 507.7L855.2 543.8L855.7 540.5L856.2 544.1L856.7 534.1L857.2 539.6L857.7 481.5L858.2 485.9L858.7 481.3L859.2 503.3L859.7 502.8L860.2 507.1L860.7 481.9L861.2 502.8L861.7 491.0L862.2 530.4L862.7 530.3L863.2 531.5L863.7 508.7L864.2 519.0L864.7 460.0L865.2 531.6L865.7 524.4L866.2 525.6L866.7 478.9L867.2 519.2L867.7 509.9L868.2 512.6L868.7 509.1L869.2 525.8L869.7 523.4L870.2 528.5L870.7 520.7L871.2 528.7L871.7 463.6L872.2 512.7L872.7 504.2L873.2 505.4L873.7 498.1L874.2 504.6L874.7 492.4L875.2 536.8L875.7 532.5L876.2 538.1L876.7 535.5L877.2 538.7L877.7 501.1L878.2 510.6L878.7 510.4L879.2 512.0L879.7 478.9L880.2 498.9L880.7 484.0L881.2 493.9L881.7 486.1L882.2 490.3L882.7 467.8L883.2 486.9L883.7 483.4L884.2 498.7L884.7 474.8L885.2 487.8L885.7 475.9L886.2 532.2L886.7 531.6L887.2 533.1L887.7 470.2L888.2 490.5L888.7 482.6L889.2 505.7L889.7 505.2L890.2 517.4L890.7 513.0L891.2 521.7L891.7 494.0L892.2 531.5L892.7 528.3L893.2 534.6L893.7 526.8L894.2 527.8L894.7 485.3L895.2 498.2L895.7 496.8L896.2 524.4L896.7 516.8L897.2 521.7L897.7 477.5L898.2 547.8L898.7 544.2L899.2 544.5L899.7 464.2L900.2 485.7L900.7 484.9L901.2 544.1L901.7 541.9L902.2 544.5L902.7 537.2L903.2 541.8L903.7 541.8L904.2 543.4L904.7 489.9L905.2 536.0L905.7 535.9L906.2 537.6L906.7 532.1L907.2 537.2L907.7 504.3L908.2 516.1L908.7 509.8L909.2 516.4L909.7 489.8L910.2 494.2L910.7 483.1L911.2 507.7L911.7 501.9L912.2 512.4L912.7 506.8L913.2 528.3L913.7 526.3L914.2 533.1L914.7 505.5L915.2 515.9L915.7 466.0L916.2 518.9L916.7 507.7L917.2 518.3L917.7 463.3L918.2 485.2L918.7 469.9L919.2 500.3L919.7 496.4L920.2 498.1L920.7 466.0L921.2 471.6L921.7 461.0L922.2 479.6L922.7 462.6L923.2 515.1L923.7 514.4L924.2 527.4L924.7 525.1L925.2 526.0L925.7 463.7L926.2 481.4L926.7 466.7L927.2 504.3L927.7 491.2L928.2 506.8L928.7 497.3L929.2 541.4L929.7 536.8L930.2 541.5L930.7 508.8L931.2 544.8L931.7 540.7L932.2 545.4L932.7 541.0L933.2 543.8L933.7 541.7L934.2 545.3L934.7 545.0L935.2 545.0L935.7 528.3L936.2 533.1L936.7 531.9L937.2 531.9L937.7 472.2L938.2 533.0L938.7 529.3L939.2 543.5L939.7 542.9L940.2 543.0L940.7 521.4L941.2 523.6L941.7 499.4L942.2 519.8L942.7 510.9L943.2 544.6L943.7 543.4L944.2 547.3L944.7 506.4L945.2 540.9L945.7 536.6L946.2 537.9L946.7 521.2L947.2 526.6L947.7 470.1L948.2 533.2L948.7 526.9L949.2 531.1L949.7 509.5L950.2 540.7L950.7 539.4L951.2 540.7L951.7 509.2L952.2 514.8L952.7 510.3L953.2 515.2L953.7 491.9L954.2 545.4L954.7 541.5L955.2 544.5L955.7 543.7L956.2 547.5L956.7 540.4L957.2 541.6L957.7 523.5L958.2 526.6L958.7 521.0L959.2 526.0L959.7 503.8L960.2 510.2L960.7 483.6L961.2 546.2L961.7 543.6L962.2 546.8L962.7 544.0L963.2 545.7L963.7 527.2L964.2 546.4L964.7 544.5L965.2 546.4L965.7 545.1L966.2 546.5L966.7 531.0L967.2 547.5L967.7 543.4L968.2 546.8L968.7 501.6L969.2 512.0L969.7 503.4L970.2 512.0L970.7 508.1L971.2 512.5L971.7 500.4L972.2 509.9L972.7 493.9L973.2 538.2L973.7 536.1L974.2 537.7L974.7 466.7L975.2 535.6L975.7 528.8L976.2 537.0L976.7 536.6L977.2 536.6L977.7 470.3L978.2 537.0L978.7 534.4L979.2 537.2L979.7 458.8L980.2 483.8L980.7 483.2L981.2 531.9L981.7 525.7L982.2 546.8L982.7 544.5L983.2 544.8L983.7 494.0L984.2 548.2L984.7 544.5L985.2 548.0L985.7 503.9L986.2 506.1L986.7 474.3L987.2 513.9L987.7 507.9L988.2 516.7L988.7 516.0L989.2 521.0L989.7 501.8L990.2 505.9L990.7 486.0L991.2 524.2L991.7 518.7L992.2 525.4L992.7 500.6L993.2 527.4L993.7 524.7L994.2 529.2L994.7 483.4L995.2 532.5L995.7 528.9L996.2 537.2L996.7 532.5L997.2 534.6L997.7 462.3L998.2 505.7L998.7 502.6L999.2 544.4L999.7 543.4L1000.2 554.1L1000.7 552.3L1001.2 553.2L1001.7 514.6L1002.2 525.2L1002.7 524.8L1003.2 551.7L1003.7 551.2L1004.2 553.2L1004.7 537.0L1005.2 537.7L1005.7 502.1L1006.2 508.6L1006.7 489.3L1007.2 504.1L1007.7 479.1L1008.2 498.2L1008.7 485.6L1009.2 489.7L1009.7 486.4L1010.2 535.8L1010.7 530.1L1011.2 535.8L1011.7 489.9L1012.2 497.8L1012.7 491.8L1013.2 542.8L1013.7 541.6L1014.2 542.7L1014.7 507.5L1015.2 536.4L1015.7 529.8L1016.2 534.7L1016.7 526.0L1017.2 545.6L1017.7 543.6L1018.2 545.4L1018.7 517.4L1019.2 518.7L1019.7 481.1L1020.2 539.3L1020.7 533.7L1021.2 538.7L1021.7 463.1L1022.2 504.5L1022.7 500.9L1023.2 525.9L1023.7 518.1L1024.2 518.4L1024.7 505.6L1025.2 516.6L1025.7 507.3L1026.2 524.8L1026.7 517.8L1027.2 521.0L1027.7 490.4L1028.2 503.1L1028.7 465.5L1029.2 483.2L1029.7 482.6L1030.2 536.5L1030.7 535.0L1031.2 542.5L1031.7 537.4L1032.2 542.7L1032.7 486.6L1033.2 538.8L1033.7 538.3L1034.2 542.7L1034.7 511.5L1035.2 517.7L1035.7 510.3L1036.2 519.1L1036.7 496.3L1037.2 508.5L1037.7 462.1L1038.2 521.0L1038.7 512.0L1039.2 528.9L1039.7 521.3L1040.2 529.5L1040.7 529.4L1041.2 547.5L1041.7 545.4L1042.2 545.4L1042.7 505.6L1043.2 544.1L1043.7 539.7L1044.2 547.4L1044.7 546.2L1045.2 548.5L1045.7 501.0L1046.2 512.9L1046.7 466.8L1047.2 529.1L1047.7 525.5L1048.2 527.2L1048.7 505.3L1049.2 512.6L1049.7 483.9L1050.2 497.2L1050.7 487.7L1051.2 539.4L1051.7 539.3L1052.2 543.7L1052.7 490.0L1053.2 504.6L1053.7 466.1L1054.2 520.1L1054.7 510.8L1055.2 521.6L1055.7 521.2L1056.2 524.7L1056.7 508.0L1057.2 512.3L1057.7 508.6L1058.2 517.5L1058.7 487.2L1059.2 496.3L1059.7 470.9L1060.2 493.0L1060.7 491.4L1061.2 517.5L1061.7 509.5L1062.2 518.8L1062.7 508.1L1063.2 519.2L1063.7 480.9L1064.2 541.9L1064.7 539.8L1065.2 542.0L1065.7 515.2L1066.2 532.5L1066.7 526.5L1067.2 533.8L1067.7 529.7L1068.2 530.3L1068.7 498.2L1069.2 506.2L1069.7 503.0L1070.2 531.7L1070.7 528.0L1071.2 533.9L1071.7 521.8L1072.2 527.1L1072.7 514.5L1073.2 515.2L1073.7 496.6L1074.2 534.3L1074.7 529.4L1075.2 533.8L1075.7 507.5L1076.2 512.7L1076.7 482.7L1077.2 534.6L1077.7 532.2L1078.2 535.9L1078.7 522.8L1079.2 538.2L1079.7 535.0L1080.2 539.6L1080.7 501.9L1081.2 547.8L1081.7 544.0L1082.2 545.5L1082.7 512.2L1083.2 517.8L1083.7 491.8L1084.2 533.0L1084.7 528.8L1085.2 554.8L1085.7 552.4L1086.2 552.9L1086.7 552.9L1087.2 554.4L1087.7 534.6L1088.2 540.5L1088.7 540.4L1089.2 543.2L1089.7 496.1L1090.2 505.1L1090.7 503.3L1091.2 539.4L1091.7 537.7L1092.2 543.8L1092.7 540.7L1093.2 543.7L1093.7 526.9L1094.2 530.8L1094.7 514.5L1095.2 523.2L1095.7 494.5L1096.2 508.0L1096.7 480.3L1097.2 488.8L1097.7 487.1L1098.2 534.7L1098.7 531.1L1099.2 539.7L1099.7 536.3L1100.2 541.2L1100.7 502.0L1101.2 504.8L1101.7 502.3L1102.2 505.7L1102.7 498.6L1103.2 540.0L1103.7 538.2L1104.2 540.1L1104.7 532.4L1105.2 535.8L1105.7 519.5L1106.2 540.0L1106.7 538.2L1107.2 542.3L1107.7 485.0L1108.2 485.1L1108.7 457.4L1109.2 492.6L1109.7 487.4L1110.2 534.7L1110.7 527.5L1111.2 532.7L1111.7 491.3L1112.2 530.4L1112.7 523.3L1113.2 526.4L1113.7 471.5L1114.2 517.9L1114.7 517.8L1115.2 525.4L1115.7 462.6L1116.2 532.2L1116.7 529.4L1117.2 532.2L1117.7 510.1L1118.2 518.4L1118.7 467.4L1119.2 496.9L1119.7 495.1L1120.2 499.9L1120.7 467.3L1121.2 525.6L1121.7 518.7L1122.2 526.3L1122.7 524.9L1123.2 548.2L1123.7 544.2L1124.2 546.1L1124.7 545.4L1125.2 550.2L1125.7 548.2L1126.2 550.0L1126.7 543.1L1127.2 544.8L1127.7 527.1L1128.2 531.2L1128.7 484.8L1129.2 489.5L1129.7 484.6L1130.2 539.5L1130.7 537.4L1131.2 542.5L1131.7 519.1L1132.2 542.1L1132.7 536.8L1133.2 537.7L1133.7 498.5L1134.2 538.7L1134.7 533.8L1135.2 537.7L1135.7 524.3L1136.2 531.2L1136.7 513.1L1137.2 521.7L1137.7 508.4L1138.2 531.9L1138.7 526.3L1139.2 533.1L1139.7 493.2L1140.2 497.0L1140.7 494.9L1141.2 525.3L1141.7 517.8L1142.2 519.3L1142.7 478.4L1143.2 491.4L1143.7 459.6L1144.2 502.9L1144.7 490.7L1145.2 494.7L1145.7 489.0L1146.2 503.1L1146.7 486.2L1147.2 534.8L1147.7 529.1L1148.2 529.8L1148.7 497.5L1149.2 510.3L1149.7 491.3L1150.2 526.3L1150.7 519.0L1151.2 532.5L1151.7 531.9L1152.2 533.4L1152.7 498.0L1153.2 500.2L1153.7 489.6L1154.2 493.8L1154.7 475.1L1155.2 551.2L1155.7 550.4L1156.2 550.4L1156.7 516.0L1157.2 522.0L1157.7 516.8L1158.2 553.5L1158.7 552.5L1159.2 559.1L1159.7 557.8L1160.2 558.8L1160.7 503.0L1161.2 511.9L1161.7 511.0L1162.2 530.1L1162.7 528.4L1163.2 544.5L1163.7 540.4L1164.2 544.2L1164.7 542.4L1165.2 545.0L1165.7 504.8L1166.2 524.5L1166.7 518.3L1167.2 526.0L1167.7 481.5L1168.2 541.1L1168.7 539.0L1169.2 539.3L1169.7 535.4L1170.2 537.0L1170.7 520.0L1171.2 538.2L1171.7 537.8L1172.2 543.0L1172.7 507.8L1173.2 528.7L1173.7 523.6L1174.2 526.3L1174.7 520.3L1175.2 523.3L1175.7 515.5L1176.2 522.1L1176.7 503.3L1177.2 515.1L1177.7 511.4L1178.2 521.5L1178.7 505.6L1179.2 542.5L1179.7 539.6L1180.2 542.0L1180.7 524.8L1181.2 530.4L1181.7 510.3L1182.2 522.4L1182.7 520.1L1183.2 538.9L1183.7 536.7L1184.2 553.9L1184.7 552.9L1185.2 554.7L1185.7 542.2L1186.2 545.2L1186.7 538.1L1187.2 542.5L1187.7 533.6L1188.2 536.7L1188.7 521.1L1189.2 555.6L1189.7 555.1L1190.2 555.6L1190.7 523.7L1191.2 556.4L1191.7 555.0L1192.2 555.3L1192.7 553.3L1193.2 556.2L1193.7 554.8L1194.2 555.2L1194.7 540.9L1195.2 555.1L1195.7 555.0L1196.2 555.3L1196.7 550.1L1197.2 554.3L1197.7 552.0L1198.2 554.6L1198.7 552.6L1199.2 554.6L1199.7 550.2L1200.2 561.1L1200.7 560.4L1201.2 560.5L1201.7 556.6L1202.2 562.2L1202.7 562.0L1203.2 562.5L1203.7 559.5L1204.2 561.5L1204.7 561.2L1205.2 561.3L1205.7 558.3L1206.2 559.6L1206.7 558.5L1207.2 559.5L1207.7 559.1L1208.2 560.4L1208.7 559.6L1209.2 561.0L1209.7 560.7L1210.2 563.1L1210.7 562.9L1211.2 563.4L1211.7 563.3L1212.2 563.5L1212.7 560.4L1213.2 563.2L1213.7 563.1L1214.2 563.4L1214.7 563.3L1215.2 563.7L1215.7 563.6L1216.2 563.9L1216.7 563.8L1217.2 563.9L1217.7 563.7L1218.2 564.2L1218.7 564.2L1219.2 564.2L1219.7 564.1L1220.2 564.2L1220.7 564.2L1221.2 564.3L1221.7 564.2L1222.2 564.3L1222.7 564.3L1223.2 564.3L1223.7 564.0L1224.2 564.1L1224.7 564.0L1225.2 564.1L1225.7 564.1L1226.2 564.2L1226.7 564.0L1227.2 564.1L1227.7 564.1L1228.2 564.2L1228.7 564.1L1229.2 564.2L1229.7 564.2L1230.2 564.2L1230.7 564.2L1231.2 564.3L1231.7 564.2L1232.2 564.3L1232.7 564.2L1233.2 564.3L1233.7 564.3L1234.2 564.3L1234.7 564.3L1235.2 564.3L1235.7 564.0L1236.2 564.3L1236.7 564.3L1237.2 564.3L1237.7 564.0L1238.2 564.1L1238.7 564.0L1239.2 564.2L1239.7 564.1L1240.2 564.2L1240.7 564.1L1241.2 564.3L1241.7 564.3L1242.2 564.3L1242.7 564.1L1243.2 564.3L1243.7 564.3L1244.2 564.3L1244.7 564.3L1245.2 564.3L1245.7 564.2L1246.2 564.3L1246.7 564.3L1247.2 564.3L1247.7 564.3L1248.2 564.4L1248.7 564.3L1249.2 564.4L1249.7 564.3L1250.2 564.4L1250.7 564.3L1251.2 564.3L1251.7 564.3L1252.2 564.3L1252.7 564.3L1253.2 564.4L1253.7 564.3L1254.2 564.3L1254.7 564.3L1254.7 564.7L1254.2 564.6L1253.7 564.7L1253.2 564.6L1252.7 564.7L1252.2 564.7L1251.7 564.7L1251.2 564.7L1250.7 564.7L1250.2 564.6L1249.7 564.8L1249.2 564.8L1248.7 564.8L1248.2 564.7L1247.7 564.7L1247.2 564.7L1246.7 564.8L1246.2 564.8L1245.7 564.9L1245.2 564.8L1244.7 564.8L1244.2 564.7L1243.7 564.7L1243.2 564.7L1242.7 564.8L1242.2 564.7L1241.7 564.7L1241.2 564.7L1240.7 564.8L1240.2 564.8L1239.7 564.9L1239.2 564.8L1238.7 564.9L1238.2 564.8L1237.7 564.8L1237.2 564.8L1236.7 565.0L1236.2 564.7L1235.7 564.8L1235.2 564.7L1234.7 564.7L1234.2 564.7L1233.7 564.7L1233.2 564.7L1232.7 565.0L1232.2 565.0L1231.7 565.1L1231.2 564.8L1230.7 564.8L1230.2 564.7L1229.7 564.7L1229.2 564.7L1228.7 564.8L1228.2 564.8L1227.7 565.0L1227.2 564.9L1226.7 565.0L1226.2 564.7L1225.7 564.8L1225.2 564.8L1224.7 565.0L1224.2 564.9L1223.7 565.1L1223.2 565.1L1222.7 565.2L1222.2 564.9L1221.7 564.9L1221.2 564.8L1220.7 564.8L1220.2 564.7L1219.7 564.9L1219.2 564.8L1218.7 565.6L1218.2 565.4L1217.7 566.0L1217.2 565.7L1216.7 565.9L1216.2 565.3L1215.7 565.4L1215.2 565.4L1214.7 565.8L1214.2 565.7L1213.7 568.3L1213.2 566.7L1212.7 567.2L1212.2 567.2L1211.7 567.6L1211.2 567.2L1210.7 570.1L1210.2 566.2L1209.7 566.6L1209.2 566.5L1208.7 567.4L1208.2 566.6L1207.7 567.1L1207.2 566.9L1206.7 571.1L1206.2 571.0L1205.7 572.1L1205.2 570.2L1204.7 570.4L1204.2 567.7L1203.7 568.5L1203.2 568.2L1202.7 570.1L1202.2 569.9L1201.7 573.5L1201.2 572.1L1200.7 578.2L1200.2 568.6L1199.7 569.2L1199.2 568.6L1198.7 571.4L1198.2 570.1L1197.7 587.2L1197.2 570.2L1196.7 571.2L1196.2 570.5L1195.7 578.3L1195.2 577.9L1194.7 592.7L1194.2 576.3L1193.7 576.4L1193.2 573.3L1192.7 574.7L1192.2 573.0L1191.7 591.7L1191.2 573.4L1190.7 575.6L1190.2 574.8L1189.7 585.2L1189.2 581.2L1188.7 595.0L1188.2 585.6L1187.7 586.5L1187.2 581.9L1186.7 584.9L1186.2 574.8L1185.7 576.7L1185.2 574.8L1184.7 612.6L1184.2 589.2L1183.7 589.3L1183.2 589.3L1182.7 595.8L1182.2 590.0L1181.7 629.4L1181.2 598.2L1180.7 599.9L1180.2 595.7L1179.7 613.2L1179.2 583.0L1178.7 587.1L1178.2 583.3L1177.7 601.7L1177.2 598.5L1176.7 613.2L1176.2 581.0L1175.7 584.1L1175.2 582.9L1174.7 639.1L1174.2 591.9L1173.7 595.4L1173.2 587.2L1172.7 588.0L1172.2 586.6L1171.7 603.1L1171.2 597.6L1170.7 634.4L1170.2 582.6L1169.7 585.3L1169.2 581.2L1168.7 615.5L1168.2 595.3L1167.7 602.0L1167.2 590.9L1166.7 594.4L1166.2 589.0L1165.7 592.9L1165.2 591.2L1164.7 643.9L1164.2 602.5L1163.7 604.5L1163.2 598.5L1162.7 665.6L1162.2 633.1L1161.7 638.5L1161.2 613.4L1160.7 617.4L1160.2 588.5L1159.7 590.0L1159.2 574.7L1158.7 576.6L1158.2 575.6L1157.7 592.7L1157.2 581.3L1156.7 582.3L1156.2 581.6L1155.7 595.4L1155.2 592.0L1154.7 623.6L1154.2 611.9L1153.7 626.5L1153.2 591.1L1152.7 594.9L1152.2 593.5L1151.7 655.4L1151.2 630.7L1150.7 633.7L1150.2 632.2L1149.7 665.9L1149.2 619.4L1148.7 623.7L1148.2 615.4L1147.7 670.1L1147.2 603.3L1146.7 603.7L1146.2 596.3L1145.7 615.1L1145.2 598.0L1144.7 600.9L1144.2 594.8L1143.7 598.2L1143.2 597.6L1142.7 610.6L1142.2 607.6L1141.7 664.3L1141.2 604.6L1140.7 613.8L1140.2 604.1L1139.7 647.8L1139.2 639.3L1138.7 651.8L1138.2 642.2L1137.7 648.1L1137.2 640.4L1136.7 671.4L1136.2 667.0L1135.7 671.1L1135.2 593.7L1134.7 597.3L1134.2 591.8L1133.7 656.6L1133.2 594.5L1132.7 594.7L1132.2 590.5L1131.7 672.4L1131.2 619.3L1130.7 625.6L1130.2 605.4L1129.7 612.1L1129.2 606.4L1128.7 651.1L1128.2 630.7L1127.7 632.1L1127.2 584.1L1126.7 584.7L1126.2 582.1L1125.7 583.8L1125.2 578.8L1124.7 578.8L1124.2 576.5L1123.7 599.3L1123.2 595.9L1122.7 630.8L1122.2 626.2L1121.7 632.9L1121.2 627.1L1120.7 640.4L1120.2 639.7L1119.7 662.0L1119.2 640.4L1118.7 645.5L1118.2 586.5L1117.7 588.0L1117.2 585.1L1116.7 589.2L1116.2 586.4L1115.7 588.6L1115.2 586.5L1114.7 600.1L1114.2 598.9L1113.7 616.9L1113.2 614.4L1112.7 644.4L1112.2 626.6L1111.7 635.5L1111.2 631.1L1110.7 649.0L1110.2 611.3L1109.7 620.7L1109.2 615.1L1108.7 659.7L1108.2 583.5L1107.7 587.6L1107.2 586.1L1106.7 609.0L1106.2 581.3L1105.7 584.5L1105.2 580.6L1104.7 582.6L1104.2 582.2L1103.7 594.9L1103.2 585.7L1102.7 590.3L1102.2 589.5L1101.7 647.1L1101.2 639.3L1100.7 654.8L1100.2 653.3L1099.7 656.2L1099.2 631.3L1098.7 642.0L1098.2 620.2L1097.7 620.5L1097.2 613.7L1096.7 619.4L1096.2 617.8L1095.7 663.2L1095.2 651.4L1094.7 674.8L1094.2 649.7L1093.7 652.0L1093.2 641.1L1092.7 642.4L1092.2 600.0L1091.7 601.5L1091.2 596.3L1090.7 626.0L1090.2 615.8L1089.7 625.2L1089.2 608.5L1088.7 610.1L1088.2 586.7L1087.7 589.3L1087.2 572.0L1086.7 572.6L1086.2 571.9L1085.7 582.3L1085.2 580.2L1084.7 588.8L1084.2 586.8L1083.7 613.8L1083.2 586.4L1082.7 588.0L1082.2 586.5L1081.7 655.7L1081.2 594.3L1080.7 600.2L1080.2 598.7L1079.7 673.3L1079.2 623.7L1078.7 636.0L1078.2 633.6L1077.7 647.5L1077.2 593.1L1076.7 595.3L1076.2 594.7L1075.7 610.3L1075.2 592.5L1074.7 593.7L1074.2 588.3L1073.7 633.3L1073.2 623.6L1072.7 641.7L1072.2 611.1L1071.7 620.6L1071.2 611.5L1070.7 636.9L1070.2 600.4L1069.7 608.8L1069.2 600.5L1068.7 626.5L1068.2 584.2L1067.7 586.5L1067.2 584.3L1066.7 605.1L1066.2 601.7L1065.7 609.0L1065.2 601.7L1064.7 673.5L1064.2 587.3L1063.7 590.1L1063.2 587.9L1062.7 630.7L1062.2 618.9L1061.7 653.7L1061.2 648.7L1060.7 653.6L1060.2 597.1L1059.7 600.0L1059.2 596.6L1058.7 599.4L1058.2 594.0L1057.7 670.0L1057.2 642.7L1056.7 645.9L1056.2 634.2L1055.7 684.5L1055.2 642.0L1054.7 645.8L1054.2 631.0L1053.7 637.4L1053.2 597.8L1052.7 598.4L1052.2 592.6L1051.7 601.9L1051.2 597.6L1050.7 601.7L1050.2 594.7L1049.7 640.1L1049.2 634.0L1048.7 669.8L1048.2 621.4L1047.7 631.6L1047.2 630.5L1046.7 674.3L1046.2 627.1L1045.7 633.3L1045.2 628.9L1044.7 631.3L1044.2 625.8L1043.7 646.0L1043.2 604.8L1042.7 607.7L1042.2 603.8L1041.7 679.4L1041.2 649.8L1040.7 656.0L1040.2 623.3L1039.7 633.4L1039.2 590.2L1038.7 595.2L1038.2 593.0L1037.7 665.6L1037.2 658.1L1036.7 666.9L1036.2 651.9L1035.7 655.2L1035.2 595.9L1034.7 600.8L1034.2 593.9L1033.7 678.6L1033.2 649.5L1032.7 670.4L1032.2 655.4L1031.7 660.6L1031.2 638.5L1030.7 656.7L1030.2 640.9L1029.7 674.7L1029.2 637.8L1028.7 654.6L1028.2 590.5L1027.7 592.3L1027.2 587.3L1026.7 605.4L1026.2 597.8L1025.7 606.5L1025.2 603.3L1024.7 659.4L1024.2 613.0L1023.7 616.9L1023.2 609.4L1022.7 663.2L1022.2 652.6L1021.7 657.2L1021.2 609.0L1020.7 614.7L1020.2 609.7L1019.7 633.3L1019.2 626.7L1018.7 647.7L1018.2 632.1L1017.7 679.9L1017.2 653.5L1016.7 662.2L1016.2 589.3L1015.7 592.2L1015.2 591.9L1014.7 667.8L1014.2 653.3L1013.7 658.7L1013.2 641.7L1012.7 665.3L1012.2 649.4L1011.7 651.6L1011.2 597.4L1010.7 598.7L1010.2 598.6L1009.7 658.5L1009.2 641.4L1008.7 668.9L1008.2 658.0L1007.7 661.9L1007.2 636.5L1006.7 652.1L1006.2 643.7L1005.7 651.5L1005.2 576.6L1004.7 578.6L1004.2 574.5L1003.7 576.1L1003.2 568.8L1002.7 569.2L1002.2 569.0L1001.7 577.4L1001.2 577.0L1000.7 595.7L1000.2 590.3L999.7 609.2L999.2 605.5L998.7 615.7L998.2 609.1L997.7 640.3L997.2 585.8L996.7 587.5L996.2 585.5L995.7 629.7L995.2 606.6L994.7 615.1L994.2 612.5L993.7 649.0L993.2 640.9L992.7 672.2L992.2 593.1L991.7 599.1L991.2 582.8L990.7 585.3L990.2 582.8L989.7 610.8L989.2 602.0L988.7 657.1L988.2 631.6L987.7 633.3L987.2 585.8L986.7 590.1L986.2 588.4L985.7 591.2L985.2 583.5L984.7 585.4L984.2 583.4L983.7 646.9L983.2 625.6L982.7 630.6L982.2 586.4L981.7 587.3L981.2 585.2L980.7 603.8L980.2 599.3L979.7 661.2L979.2 589.4L978.7 589.7L978.2 587.3L977.7 590.8L977.2 589.4L976.7 631.8L976.2 605.1L975.7 605.5L975.2 604.6L974.7 667.1L974.2 617.5L973.7 629.5L973.2 583.4L972.7 587.0L972.2 585.4L971.7 653.0L971.2 596.5L970.7 601.5L970.2 594.2L969.7 626.8L969.2 622.6L968.7 673.8L968.2 597.2L967.7 598.9L967.2 594.9L966.7 612.4L966.2 596.4L965.7 596.5L965.2 595.5L964.7 599.5L964.2 598.6L963.7 645.4L963.2 629.5L962.7 674.4L962.2 607.7L961.7 610.4L961.2 608.4L960.7 627.5L960.2 618.7L959.7 669.3L959.2 592.1L958.7 597.1L958.2 596.7L957.7 609.2L957.2 594.7L956.7 595.9L956.2 591.1L955.7 608.8L955.2 606.8L954.7 657.0L954.2 641.4L953.7 643.8L953.2 582.7L952.7 584.6L952.2 581.9L951.7 594.4L951.2 590.4L950.7 621.8L950.2 586.2L949.7 586.9L949.2 583.6L948.7 613.2L948.2 594.6L947.7 600.1L947.2 599.6L946.7 674.1L946.2 623.4L945.7 627.2L945.2 594.5L944.7 595.9L944.2 590.3L943.7 638.7L943.2 582.3L942.7 586.2L942.2 585.5L941.7 637.8L941.2 584.0L940.7 585.1L940.2 584.6L939.7 606.0L939.2 602.4L938.7 621.6L938.2 580.5L937.7 583.5L937.2 582.3L936.7 583.3L936.2 580.5L935.7 605.1L935.2 601.6L934.7 619.3L934.2 600.1L933.7 606.7L933.2 603.3L932.7 634.2L932.2 595.5L931.7 597.8L931.2 597.3L930.7 602.5L930.2 597.2L929.7 597.8L929.2 596.8L928.7 605.6L928.2 597.9L927.7 634.7L927.2 614.4L926.7 617.7L926.2 616.1L925.7 632.0L925.2 604.7L924.7 609.5L924.2 605.3L923.7 644.7L923.2 583.8L922.7 588.5L922.2 585.9L921.7 613.4L921.2 581.6L920.7 583.8L920.2 580.5L919.7 617.7L919.2 617.0L918.7 632.4L918.2 626.0L917.7 663.0L917.2 659.7L916.7 670.5L916.2 589.3L915.7 590.0L915.2 588.4L914.7 614.7L914.2 608.5L913.7 653.7L913.2 604.7L912.7 607.4L912.2 600.0L911.7 675.3L911.2 619.9L910.7 627.5L910.2 627.1L909.7 654.5L909.2 606.3L908.7 615.9L908.2 603.3L907.7 611.0L907.2 592.7L906.7 596.1L906.2 589.2L905.7 591.2L905.2 586.9L904.7 601.1L904.2 594.1L903.7 607.9L903.2 599.8L902.7 623.7L902.2 618.7L901.7 658.9L901.2 592.3L900.7 598.7L900.2 590.3L899.7 593.2L899.2 592.2L898.7 608.6L898.2 602.1L897.7 612.7L897.2 593.0L896.7 597.4L896.2 585.7L895.7 587.8L895.2 587.7L894.7 622.3L894.2 588.0L893.7 592.6L893.2 590.2L892.7 594.6L892.2 590.5L891.7 617.6L891.2 590.3L890.7 591.5L890.2 591.5L889.7 594.0L889.2 583.4L888.7 584.2L888.2 582.0L887.7 659.6L887.2 654.4L886.7 678.6L886.2 600.4L885.7 604.1L885.2 589.7L884.7 590.3L884.2 581.4L883.7 583.3L883.2 580.7L882.7 648.0L882.2 646.6L881.7 666.7L881.2 647.3L880.7 651.4L880.2 578.1L879.7 580.6L879.2 578.4L878.7 585.0L878.2 583.9L877.7 640.1L877.2 592.6L876.7 593.5L876.2 587.4L875.7 590.4L875.2 587.6L874.7 629.3L874.2 584.7L873.7 586.2L873.2 585.1L872.7 598.3L872.2 597.7L871.7 612.5L871.2 608.0L870.7 617.9L870.2 609.0L869.7 637.9L869.2 582.6L868.7 586.4L868.2 582.2L867.7 650.0L867.2 636.8L866.7 644.6L866.2 618.2L865.7 627.2L865.2 613.6L864.7 615.3L864.2 611.2L863.7 632.1L863.2 605.8L862.7 613.6L862.2 603.9L861.7 655.8L861.2 642.1L860.7 644.6L860.2 625.0L859.7 636.7L859.2 628.4L858.7 633.7L858.2 600.5L857.7 609.1L857.2 603.6L856.7 627.5L856.2 584.6L855.7 585.5L855.2 582.7L854.7 590.0L854.2 578.5L853.7 581.2L853.2 578.7L852.7 579.6L852.2 579.5L851.7 650.2L851.2 581.0L850.7 584.3L850.2 581.6L849.7 593.0L849.2 587.8L848.7 614.1L848.2 611.7L847.7 630.9L847.2 596.4L846.7 600.9L846.2 593.6L845.7 598.2L845.2 592.9L844.7 634.4L844.2 621.7L843.7 636.5L843.2 628.6L842.7 630.2L842.2 597.7L841.7 599.5L841.2 583.2L840.7 584.4L840.2 582.4L839.7 588.7L839.2 583.9L838.7 606.1L838.2 583.8L837.7 586.8L837.2 582.8L836.7 613.0L836.2 605.8L835.7 615.0L835.2 610.7L834.7 634.1L834.2 609.3L833.7 612.0L833.2 595.0L832.7 599.7L832.2 594.2L831.7 611.8L831.2 602.4L830.7 609.2L830.2 600.4L829.7 657.7L829.2 647.3L828.7 677.8L828.2 633.7L827.7 640.5L827.2 626.7L826.7 666.9L826.2 619.1L825.7 619.4L825.2 612.4L824.7 660.2L824.2 659.7L823.7 678.7L823.2 644.3L822.7 658.4L822.2 630.1L821.7 639.6L821.2 591.2L820.7 594.0L820.2 589.4L819.7 633.6L819.2 594.9L818.7 597.6L818.2 591.7L817.7 678.7L817.2 627.4L816.7 633.8L816.2 615.1L815.7 621.3L815.2 591.4L814.7 592.0L814.2 590.9L813.7 625.1L813.2 620.9L812.7 639.9L812.2 638.8L811.7 643.5L811.2 609.8L810.7 614.6L810.2 604.7L809.7 654.5L809.2 636.9L808.7 642.1L808.2 617.3L807.7 622.8L807.2 613.4L806.7 627.4L806.2 583.5L805.7 585.0L805.2 582.5L804.7 604.6L804.2 600.1L803.7 622.4L803.2 570.3L802.7 571.1L802.2 570.6L801.7 596.8L801.2 585.2L800.7 586.3L800.2 583.6L799.7 619.2L799.2 613.2L798.7 655.6L798.2 622.7L797.7 628.9L797.2 611.1L796.7 612.2L796.2 588.3L795.7 590.5L795.2 586.7L794.7 588.5L794.2 584.1L793.7 668.0L793.2 626.8L792.7 634.9L792.2 582.9L791.7 585.9L791.2 583.7L790.7 609.7L790.2 601.7L789.7 610.0L789.2 608.9L788.7 637.0L788.2 583.5L787.7 587.6L787.2 583.1L786.7 593.4L786.2 586.7L785.7 590.2L785.2 587.4L784.7 643.0L784.2 623.9L783.7 624.3L783.2 606.3L782.7 607.0L782.2 603.5L781.7 636.9L781.2 593.1L780.7 597.4L780.2 585.0L779.7 585.1L779.2 583.9L778.7 647.1L778.2 607.3L777.7 615.2L777.2 608.1L776.7 616.5L776.2 588.8L775.7 589.5L775.2 588.8L774.7 656.0L774.2 589.9L773.7 590.8L773.2 590.7L772.7 636.1L772.2 583.5L771.7 587.9L771.2 584.1L770.7 603.3L770.2 595.7L769.7 618.4L769.2 612.5L768.7 624.4L768.2 619.1L767.7 643.4L767.2 629.1L766.7 636.7L766.2 631.2L765.7 643.4L765.2 593.1L764.7 593.1L764.2 592.7L763.7 622.5L763.2 615.4L762.7 674.4L762.2 584.7L761.7 589.7L761.2 586.3L760.7 663.9L760.2 584.7L759.7 585.0L759.2 581.3L758.7 643.5L758.2 574.4L757.7 576.7L757.2 576.7L756.7 617.5L756.2 569.8L755.7 570.2L755.2 570.1L754.7 573.1L754.2 573.0L753.7 614.1L753.2 586.7L752.7 587.3L752.2 585.1L751.7 600.8L751.2 598.4L750.7 650.9L750.2 591.9L749.7 598.1L749.2 589.3L748.7 594.1L748.2 591.4L747.7 598.0L747.2 592.4L746.7 640.7L746.2 590.3L745.7 593.2L745.2 592.6L744.7 594.8L744.2 593.5L743.7 640.9L743.2 610.0L742.7 621.0L742.2 599.0L741.7 606.6L741.2 605.3L740.7 671.3L740.2 603.8L739.7 604.1L739.2 579.0L738.7 581.6L738.2 581.0L737.7 612.2L737.2 594.9L736.7 596.9L736.2 593.3L735.7 607.3L735.2 588.1L734.7 591.8L734.2 589.0L733.7 621.9L733.2 613.9L732.7 640.1L732.2 623.8L731.7 628.7L731.2 620.0L730.7 634.6L730.2 611.8L729.7 621.0L729.2 619.8L728.7 668.1L728.2 667.4L727.7 679.3L727.2 656.3L726.7 665.2L726.2 619.8L725.7 628.6L725.2 604.1L724.7 607.6L724.2 603.6L723.7 653.4L723.2 612.8L722.7 615.1L722.2 593.3L721.7 595.8L721.2 588.2L720.7 591.8L720.2 589.4L719.7 608.2L719.2 582.7L718.7 584.1L718.2 583.7L717.7 620.1L717.2 600.2L716.7 603.0L716.2 596.4L715.7 630.1L715.2 585.4L714.7 586.7L714.2 582.8L713.7 628.4L713.2 583.7L712.7 586.2L712.2 583.0L711.7 590.9L711.2 588.6L710.7 590.1L710.2 590.1L709.7 643.7L709.2 591.4L708.7 592.8L708.2 582.5L707.7 584.6L707.2 581.5L706.7 628.5L706.2 620.8L705.7 638.0L705.2 585.6L704.7 588.8L704.2 586.7L703.7 637.4L703.2 612.3L702.7 617.3L702.2 571.8L701.7 573.5L701.2 573.1L700.7 607.1L700.2 581.5L699.7 582.9L699.2 579.7L698.7 623.0L698.2 610.3L697.7 615.2L697.2 608.6L696.7 652.0L696.2 619.7L695.7 620.3L695.2 606.3L694.7 612.9L694.2 608.5L693.7 641.0L693.2 619.9L692.7 630.7L692.2 623.4L691.7 662.0L691.2 615.3L690.7 625.4L690.2 593.3L689.7 596.4L689.2 591.4L688.7 603.4L688.2 600.1L687.7 634.1L687.2 591.1L686.7 594.3L686.2 591.4L685.7 607.6L685.2 574.2L684.7 575.8L684.2 571.2L683.7 572.1L683.2 572.1L682.7 604.7L682.2 576.4L681.7 577.2L681.2 577.1L680.7 600.3L680.2 596.0L679.7 603.1L679.2 602.2L678.7 664.2L678.2 606.7L677.7 614.7L677.2 607.5L676.7 633.7L676.2 620.3L675.7 621.3L675.2 610.4L674.7 641.2L674.2 610.0L673.7 612.4L673.2 585.7L672.7 589.5L672.2 586.4L671.7 600.1L671.2 591.8L670.7 597.5L670.2 593.0L669.7 631.2L669.2 624.9L668.7 650.4L668.2 609.1L667.7 618.3L667.2 603.1L666.7 608.5L666.2 601.4L665.7 645.3L665.2 634.4L664.7 649.0L664.2 595.5L663.7 600.9L663.2 597.8L662.7 637.9L662.2 625.0L661.7 669.6L661.2 620.0L660.7 624.4L660.2 594.1L659.7 594.1L659.2 590.3L658.7 593.4L658.2 591.4L657.7 598.1L657.2 586.1L656.7 590.7L656.2 587.5L655.7 610.0L655.2 603.4L654.7 603.5L654.2 600.6L653.7 606.9L653.2 593.4L652.7 595.4L652.2 582.2L651.7 582.6L651.2 582.2L650.7 631.8L650.2 582.3L649.7 583.7L649.2 582.1L648.7 596.9L648.2 596.5L647.7 629.6L647.2 627.6L646.7 639.6L646.2 634.6L645.7 653.8L645.2 596.5L644.7 604.3L644.2 598.8L643.7 654.0L643.2 591.6L642.7 594.1L642.2 591.6L641.7 669.6L641.2 639.0L640.7 647.9L640.2 629.3L639.7 631.2L639.2 620.6L638.7 621.3L638.2 591.5L637.7 595.0L637.2 594.8L636.7 641.1L636.2 621.1L635.7 634.9L635.2 602.2L634.7 609.8L634.2 597.9L633.7 601.3L633.2 600.6L632.7 614.4L632.2 613.6L631.7 621.6L631.2 618.8L630.7 653.9L630.2 639.9L629.7 653.8L629.2 606.9L628.7 608.4L628.2 607.4L627.7 671.7L627.2 633.0L626.7 640.7L626.2 636.3L625.7 666.7L625.2 633.6L624.7 646.4L624.2 631.7L623.7 650.1L623.2 612.7L622.7 620.2L622.2 596.0L621.7 601.1L621.2 597.5L620.7 658.6L620.2 603.5L619.7 613.1L619.2 607.8L618.7 680.5L618.2 595.6L617.7 599.2L617.2 598.9L616.7 640.0L616.2 631.8L615.7 658.4L615.2 595.3L614.7 596.0L614.2 592.4L613.7 616.1L613.2 608.8L612.7 627.8L612.2 621.9L611.7 647.9L611.2 593.3L610.7 595.9L610.2 591.2L609.7 605.3L609.2 600.5L608.7 660.3L608.2 617.7L607.7 621.3L607.2 618.2L606.7 648.4L606.2 592.7L605.7 599.7L605.2 595.4L604.7 613.7L604.2 609.5L603.7 621.7L603.2 577.6L602.7 577.8L602.2 567.2L601.7 567.5L601.2 567.0L600.7 594.1L600.2 568.3L599.7 569.1L599.2 568.3L598.7 578.0L598.2 576.9L597.7 588.4L597.2 584.5L596.7 613.1L596.2 612.8L595.7 632.4L595.2 628.3L594.7 667.3L594.2 593.0L593.7 596.4L593.2 593.7L592.7 657.9L592.2 628.1L591.7 640.1L591.2 584.8L590.7 589.7L590.2 587.2L589.7 597.2L589.2 594.0L588.7 662.7L588.2 646.3L587.7 662.7L587.2 593.0L586.7 595.1L586.2 591.1L585.7 664.7L585.2 594.2L584.7 600.9L584.2 598.6L583.7 665.9L583.2 593.8L582.7 596.3L582.2 594.1L581.7 658.1L581.2 599.0L580.7 604.3L580.2 600.7L579.7 634.4L579.2 625.4L578.7 674.6L578.2 646.9L577.7 649.5L577.2 630.0L576.7 637.5L576.2 625.1L575.7 646.1L575.2 632.6L574.7 655.6L574.2 621.0L573.7 632.0L573.2 593.7L572.7 595.0L572.2 589.4L571.7 597.8L571.2 596.4L570.7 649.8L570.2 633.6L569.7 673.4L569.2 594.1L568.7 595.9L568.2 590.2L567.7 597.1L567.2 591.0L566.7 671.6L566.2 595.7L565.7 596.8L565.2 591.0L564.7 610.6L564.2 610.3L563.7 640.0L563.2 631.8L562.7 673.7L562.2 598.3L561.7 603.5L561.2 599.5L560.7 648.3L560.2 592.8L559.7 596.4L559.2 591.5L558.7 663.1L558.2 599.6L557.7 607.7L557.2 599.6L556.7 619.2L556.2 612.1L555.7 629.6L555.2 589.1L554.7 589.2L554.2 585.8L553.7 619.9L553.2 578.9L552.7 579.0L552.2 576.5L551.7 595.4L551.2 593.4L550.7 612.9L550.2 612.5L549.7 623.6L549.2 597.5L548.7 598.0L548.2 587.9L547.7 588.5L547.2 585.6L546.7 634.1L546.2 616.5L545.7 617.4L545.2 609.9L544.7 629.6L544.2 595.9L543.7 598.2L543.2 588.7L542.7 593.5L542.2 587.9L541.7 606.1L541.2 603.0L540.7 634.4L540.2 617.7L539.7 621.7L539.2 609.0L538.7 611.3L538.2 604.9L537.7 627.7L537.2 623.1L536.7 629.4L536.2 609.5L535.7 617.1L535.2 596.0L534.7 599.5L534.2 583.3L533.7 586.4L533.2 583.7L532.7 588.7L532.2 586.7L531.7 588.7L531.2 587.3L530.7 625.1L530.2 604.2L529.7 611.9L529.2 590.0L528.7 594.5L528.2 594.0L527.7 599.0L527.2 596.8L526.7 648.8L526.2 606.0L525.7 613.6L525.2 610.8L524.7 674.8L524.2 594.6L523.7 595.7L523.2 591.7L522.7 673.7L522.2 607.0L521.7 612.4L521.2 608.5L520.7 638.1L520.2 612.9L519.7 620.2L519.2 615.6L518.7 684.9L518.2 655.6L517.7 675.4L517.2 633.6L516.7 637.9L516.2 626.9L515.7 642.6L515.2 630.7L514.7 665.1L514.2 600.4L513.7 603.9L513.2 595.1L512.7 599.5L512.2 598.7L511.7 605.4L511.2 601.5L510.7 629.3L510.2 625.3L509.7 664.6L509.2 624.7L508.7 632.3L508.2 609.9L507.7 611.9L507.2 611.1L506.7 660.2L506.2 584.6L505.7 588.5L505.2 583.4L504.7 585.0L504.2 583.0L503.7 633.8L503.2 575.6L502.7 577.2L502.2 576.7L501.7 579.6L501.2 578.1L500.7 581.3L500.2 578.2L499.7 578.4L499.2 576.4L498.7 616.4L498.2 590.0L497.7 594.4L497.2 589.8L496.7 639.2L496.2 608.9L495.7 610.0L495.2 593.3L494.7 593.8L494.2 588.2L493.7 616.8L493.2 605.1L492.7 607.7L492.2 606.5L491.7 664.0L491.2 649.5L490.7 660.5L490.2 600.4L489.7 600.8L489.2 595.3L488.7 655.5L488.2 641.4L487.7 667.5L487.2 664.3L486.7 675.3L486.2 663.6L485.7 679.8L485.2 592.8L484.7 598.3L484.2 593.5L483.7 655.8L483.2 598.1L482.7 600.3L482.2 587.3L481.7 591.5L481.2 587.2L480.7 588.2L480.2 585.8L479.7 592.5L479.2 589.8L478.7 611.4L478.2 589.6L477.7 591.7L477.2 588.1L476.7 635.7L476.2 623.5L475.7 664.6L475.2 588.7L474.7 594.4L474.2 591.0L473.7 615.8L473.2 581.9L472.7 584.7L472.2 584.3L471.7 634.6L471.2 614.1L470.7 625.8L470.2 585.4L469.7 590.6L469.2 585.7L468.7 634.7L468.2 626.6L467.7 648.6L467.2 591.9L466.7 596.8L466.2 591.9L465.7 622.0L465.2 613.1L464.7 633.1L464.2 602.9L463.7 610.8L463.2 603.4L462.7 625.7L462.2 622.2L461.7 631.4L461.2 620.8L460.7 638.1L460.2 591.6L459.7 591.6L459.2 591.2L458.7 626.0L458.2 615.2L457.7 625.4L457.2 608.1L456.7 611.3L456.2 603.3L455.7 620.9L455.2 589.9L454.7 593.4L454.2 593.1L453.7 594.5L453.2 575.9L452.7 575.9L452.2 575.7L451.7 588.3L451.2 580.9L450.7 584.9L450.2 582.4L449.7 603.6L449.2 577.4L448.7 580.5L448.2 578.8L447.7 620.2L447.2 587.4L446.7 590.3L446.2 586.9L445.7 606.1L445.2 588.0L444.7 591.6L444.2 586.6L443.7 607.2L443.2 596.2L442.7 598.1L442.2 595.1L441.7 640.8L441.2 622.7L440.7 629.6L440.2 626.5L439.7 635.2L439.2 625.7L438.7 637.6L438.2 612.4L437.7 616.8L437.2 583.8L436.7 588.5L436.2 587.9L435.7 626.8L435.2 592.5L434.7 594.6L434.2 591.5L433.7 611.0L433.2 606.5L432.7 648.7L432.2 585.6L431.7 590.6L431.2 587.4L430.7 646.2L430.2 593.1L429.7 597.8L429.2 591.0L428.7 596.3L428.2 595.9L427.7 633.6L427.2 584.9L426.7 587.5L426.2 586.7L425.7 632.5L425.2 620.6L424.7 629.8L424.2 629.4L423.7 633.4L423.2 609.2L422.7 609.6L422.2 605.3L421.7 624.2L421.2 596.3L420.7 598.8L420.2 593.7L419.7 658.5L419.2 621.2L418.7 623.7L418.2 621.9L417.7 624.2L417.2 622.6L416.7 660.1L416.2 637.6L415.7 643.2L415.2 601.9L414.7 608.0L414.2 601.7L413.7 656.8L413.2 629.7L412.7 643.5L412.2 604.8L411.7 610.3L411.2 604.6L410.7 674.8L410.2 620.5L409.7 627.3L409.2 626.2L408.7 639.4L408.2 622.2L407.7 628.4L407.2 619.7L406.7 623.4L406.2 620.2L405.7 677.8L405.2 630.6L404.7 643.8L404.2 621.8L403.7 628.9L403.2 586.8L402.7 589.2L402.2 580.1L401.7 583.0L401.2 581.4L400.7 607.2L400.2 579.9L399.7 581.4L399.2 578.2L398.7 580.6L398.2 579.8L397.7 611.8L397.2 610.9L396.7 620.4L396.2 614.7L395.7 632.1L395.2 589.3L394.7 589.5L394.2 586.1L393.7 635.5L393.2 585.9L392.7 589.7L392.2 589.4L391.7 599.9L391.2 597.8L390.7 629.8L390.2 621.9L389.7 642.2L389.2 594.0L388.7 601.2L388.2 594.3L387.7 628.9L387.2 624.1L386.7 641.8L386.2 638.4L385.7 653.8L385.2 596.6L384.7 600.2L384.2 597.4L383.7 615.8L383.2 613.5L382.7 658.0L382.2 631.7L381.7 646.2L381.2 630.1L380.7 635.4L380.2 627.3L379.7 630.3L379.2 619.0L378.7 627.8L378.2 617.7L377.7 634.3L377.2 593.4L376.7 594.4L376.2 585.8L375.7 588.3L375.2 579.1L374.7 579.5L374.2 577.7L373.7 596.8L373.2 596.1L372.7 611.9L372.2 578.8L371.7 580.3L371.2 579.6L370.7 591.4L370.2 583.4L369.7 583.5L369.2 580.6L368.7 600.9L368.2 589.7L367.7 595.0L367.2 589.6L366.7 590.1L366.2 587.8L365.7 639.2L365.2 584.1L364.7 584.7L364.2 582.6L363.7 618.8L363.2 618.7L362.7 625.7L362.2 602.9L361.7 603.5L361.2 600.1L360.7 619.8L360.2 614.7L359.7 631.5L359.2 615.5L358.7 617.5L358.2 585.1L357.7 589.5L357.2 587.0L356.7 591.0L356.2 587.1L355.7 592.3L355.2 588.0L354.7 605.8L354.2 601.9L353.7 602.6L353.2 581.6L352.7 585.3L352.2 582.5L351.7 659.2L351.2 597.6L350.7 599.7L350.2 590.4L349.7 594.1L349.2 588.3L348.7 595.0L348.2 576.5L347.7 576.8L347.2 576.3L346.7 639.9L346.2 603.4L345.7 613.0L345.2 602.1L344.7 609.0L344.2 601.9L343.7 620.3L343.2 586.9L342.7 591.2L342.2 590.7L341.7 606.9L341.2 605.4L340.7 635.0L340.2 590.2L339.7 594.4L339.2 589.1L338.7 600.2L338.2 594.7L337.7 636.3L337.2 577.6L336.7 578.9L336.2 578.5L335.7 597.4L335.2 582.7L334.7 584.0L334.2 580.9L333.7 582.0L333.2 573.9L332.7 574.6L332.2 572.7L331.7 607.5L331.2 604.6L330.7 646.0L330.2 629.9L329.7 634.3L329.2 582.9L328.7 586.3L328.2 583.1L327.7 634.2L327.2 583.7L326.7 586.6L326.2 584.4L325.7 631.2L325.2 613.9L324.7 615.9L324.2 612.6L323.7 659.6L323.2 582.3L322.7 585.6L322.2 582.0L321.7 635.9L321.2 605.6L320.7 608.0L320.2 600.5L319.7 606.5L319.2 599.2L318.7 605.2L318.2 599.8L317.7 622.3L317.2 614.6L316.7 660.0L316.2 636.2L315.7 646.7L315.2 623.1L314.7 623.5L314.2 620.9L313.7 681.8L313.2 628.4L312.7 631.3L312.2 608.1L311.7 612.1L311.2 590.0L310.7 594.9L310.2 593.7L309.7 604.8L309.2 587.4L308.7 593.0L308.2 590.7L307.7 662.2L307.2 646.3L306.7 671.5L306.2 606.7L305.7 606.8L305.2 603.8L304.7 609.9L304.2 602.7L303.7 632.3L303.2 629.8L302.7 668.7L302.2 619.4L301.7 632.7L301.2 606.8L300.7 608.7L300.2 569.2L299.7 570.3L299.2 569.4L298.7 570.7L298.2 570.7L297.7 583.8L297.2 580.3L296.7 632.7L296.2 585.2L295.7 587.3L295.2 586.5L294.7 613.6L294.2 609.8L293.7 637.1L293.2 623.4L292.7 626.7L292.2 617.8L291.7 656.7L291.2 595.3L290.7 600.5L290.2 594.6L289.7 616.5L289.2 608.6L288.7 632.1L288.2 627.4L287.7 650.7L287.2 638.3L286.7 649.3L286.2 609.9L285.7 610.9L285.2 605.1L284.7 663.2L284.2 644.6L283.7 663.9L283.2 618.2L282.7 619.1L282.2 587.1L281.7 587.4L281.2 574.7L280.7 575.4L280.2 573.5L279.7 573.5L279.2 572.9L278.7 614.2L278.2 611.7L277.7 620.7L277.2 592.9L276.7 595.5L276.2 595.4L275.7 656.0L275.2 633.8L274.7 647.1L274.2 619.5L273.7 630.2L273.2 616.3L272.7 625.6L272.2 583.7L271.7 588.2L271.2 583.4L270.7 583.5L270.2 580.4L269.7 587.8L269.2 586.1L268.7 636.1L268.2 590.3L267.7 592.0L267.2 591.4L266.7 662.9L266.2 585.8L265.7 589.3L265.2 587.6L264.7 590.0L264.2 586.2L263.7 619.8L263.2 615.1L262.7 650.9L262.2 628.4L261.7 639.0L261.2 610.8L260.7 616.6L260.2 615.6L259.7 677.5L259.2 676.9L258.7 677.5L258.2 566.3L257.7 566.4L257.2 566.2L256.7 566.4L256.2 566.3L255.7 567.1L255.2 567.0L254.7 568.3L254.2 568.2L253.7 573.6L253.2 568.1L252.7 568.8L252.2 568.3L251.7 576.9L251.2 574.5L250.7 580.2L250.2 573.8L249.7 575.7L249.2 573.0L248.7 574.6L248.2 571.8L247.7 571.9L247.2 571.5L246.7 589.8L246.2 585.8L245.7 591.5L245.2 590.2L244.7 599.5L244.2 595.6L243.7 605.6L243.2 600.6L242.7 611.1L242.2 593.0L241.7 594.7L241.2 588.9L240.7 618.0L240.2 586.3L239.7 587.5L239.2 585.8L238.7 597.6L238.2 597.0L237.7 606.9L237.2 606.0L236.7 607.2L236.2 585.7L235.7 587.4L235.2 585.8L234.7 590.4L234.2 586.6L233.7 622.7L233.2 604.0L232.7 612.6L232.2 592.2L231.7 597.7L231.2 582.9L230.7 583.7L230.2 582.1L229.7 608.1L229.2 588.2L228.7 592.3L228.2 591.3L227.7 594.2L227.2 593.9L226.7 619.2L226.2 585.0L225.7 586.6L225.2 584.9L224.7 614.4L224.2 598.5L223.7 599.0L223.2 592.5L222.7 604.4L222.2 602.3L221.7 619.1L221.2 576.5L220.7 577.9L220.2 573.6L219.7 574.7L219.2 572.4L218.7 572.9L218.2 572.4L217.7 587.2L217.2 581.4L216.7 583.9L216.2 573.0L215.7 574.0L215.2 573.4L214.7 583.3L214.2 582.9L213.7 596.4L213.2 579.0L212.7 581.4L212.2 578.4L211.7 579.8L211.2 577.2L210.7 579.8L210.2 578.7L209.7 581.3L209.2 579.9L208.7 584.2L208.2 582.2L207.7 636.2L207.2 580.5L206.7 582.3L206.2 579.1L205.7 630.3L205.2 618.2L204.7 626.2L204.2 580.5L203.7 584.0L203.2 581.7L202.7 599.2L202.2 592.7L201.7 613.3L201.2 606.3L200.7 624.8L200.2 583.8L199.7 587.7L199.2 583.1L198.7 608.0L198.2 595.2L197.7 599.2L197.2 579.0L196.7 580.0L196.2 579.4L195.7 584.1L195.2 580.2L194.7 583.5L194.2 572.3L193.7 573.7L193.2 573.3L192.7 603.9L192.2 596.9L191.7 600.5L191.2 594.4L190.7 595.3L190.2 575.1L189.7 577.0L189.2 575.6L188.7 602.5L188.2 580.1L187.7 580.4L187.2 579.6L186.7 603.8L186.2 600.8L185.7 601.5L185.2 601.3L184.7 602.3L184.2 600.5L183.7 636.1L183.2 575.0L182.7 577.1L182.2 575.8L181.7 590.4L181.2 577.2L180.7 579.9L180.2 577.7L179.7 610.9L179.2 602.3L178.7 631.3L178.2 598.0L177.7 598.7L177.2 587.8L176.7 587.9L176.2 585.6L175.7 606.8L175.2 585.1L174.7 588.9L174.2 587.2L173.7 625.7L173.2 605.6L172.7 605.7L172.2 590.6L171.7 593.6L171.2 588.3L170.7 616.5L170.2 587.5L169.7 589.9L169.2 586.4L168.7 589.5L168.2 570.8L167.7 571.6L167.2 571.2L166.7 584.4L166.2 581.0L165.7 585.5L165.2 584.2L164.7 591.9L164.2 589.6L163.7 606.4L163.2 585.6L162.7 589.0L162.2 579.0L161.7 579.2L161.2 576.3L160.7 617.4L160.2 586.6L159.7 587.0L159.2 586.2L158.7 589.1L158.2 587.7L157.7 622.3L157.2 609.6L156.7 612.1L156.2 600.8L155.7 605.5L155.2 600.7L154.7 601.3L154.2 595.7L153.7 624.0L153.2 613.2L152.7 619.9L152.2 611.3L151.7 630.9L151.2 585.8L150.7 590.7L150.2 588.4L149.7 611.4L149.2 607.9L148.7 610.3L148.2 593.9L147.7 594.2L147.2 580.3L146.7 583.0L146.2 579.7L145.7 617.6L145.2 584.5L144.7 589.2L144.2 586.1L143.7 588.9L143.2 576.7L142.7 577.5L142.2 577.0L141.7 584.6L141.2 575.9L140.7 577.1L140.2 570.6L139.7 571.1L139.2 570.4L138.7 585.7L138.2 574.0L137.7 575.7L137.2 573.6L136.7 595.1L136.2 591.4L135.7 601.7L135.2 586.3L134.7 586.7L134.2 582.3L133.7 600.0L133.2 575.8L132.7 577.6L132.2 576.9L131.7 630.2L131.2 610.8L130.7 614.9L130.2 612.3L129.7 624.9L129.2 624.6L128.7 631.6L128.2 597.6L127.7 603.1L127.2 599.6L126.7 629.1L126.2 628.2L125.7 628.5L125.2 606.4L124.7 608.3L124.2 584.8L123.7 588.3L123.2 581.4L122.7 584.7L122.2 581.5L121.7 608.9L121.2 595.5L120.7 603.2L120.2 585.7L119.7 590.3L119.2 586.8L118.7 597.7L118.2 573.9L117.7 575.5L117.2 574.6L116.7 576.7L116.2 574.4L115.7 591.0L115.2 586.0L114.7 605.0L114.2 599.8L113.7 600.9L113.2 594.7L112.7 617.0L112.2 604.1L111.7 609.8L111.2 599.1L110.7 607.5L110.2 602.2L109.7 613.4L109.2 611.9L108.7 613.0L108.2 606.1L107.7 613.1L107.2 605.4L106.7 605.8L106.2 597.7L105.7 615.1L105.2 577.8L104.7 578.5L104.2 576.3L103.7 597.0L103.2 594.6L102.7 608.0L102.2 599.7L101.7 604.1L101.2 596.9L100.7 608.3L100.2 599.6L99.7 630.0L99.2 584.8L98.7 587.8L98.2 576.2L97.7 576.6L97.2 576.4L96.7 617.3L96.2 574.4L95.7 575.0L95.2 573.0L94.7 590.0L94.2 589.2L93.7 591.9L93.2 573.8L92.7 574.1L92.2 574.0L91.7 579.7L91.2 578.7L90.7 602.3L90.2 596.2L89.7 599.2L89.2 579.3L88.7 579.7L88.2 577.5L87.7 579.8L87.2 577.4L86.7 589.0L86.2 586.4L85.7 620.2L85.2 617.0L84.7 624.9L84.2 613.5L83.7 615.7L83.2 610.1L82.7 629.5L82.2 623.4L81.7 625.0L81.2 608.4L80.7 618.6L80.2 592.8L79.7 598.4L79.2 578.8L78.7 581.9L78.2 578.8L77.7 623.9L77.2 580.3L76.7 580.6L76.2 580.6L75.7 614.5L75.2 578.9L74.7 579.7L74.2 578.1L73.7 583.7L73.2 580.9L72.7 585.1L72.2 574.4L71.7 574.8L71.2 571.8L70.7 572.9L70.2 571.9L69.7 579.9L69.2 569.2L68.7 569.6L68.2 568.8L67.7 582.7L67.2 580.6L66.7 590.4L66.2 587.8L65.7 593.8L65.2 592.1L64.7 620.4L64.2 594.6L63.7 600.6L63.2 586.1L62.7 588.7L62.2 576.8L61.7 578.0L61.2 576.6L60.7 587.3L60.2 584.4L59.7 593.2L59.2 591.3L58.7 603.5L58.2 598.5L57.7 624.3L57.2 579.5L56.7 579.5L56.2 576.2L55.7 576.7L55.2 574.8L54.7 580.1L54.2 578.2L53.7 597.8L53.2 576.9L52.7 577.5L52.2 575.8L51.7 579.6L51.2 577.1L50.7 589.1L50.2 584.7L49.7 614.4L49.2 604.1L48.7 608.8L48.2 601.9L47.7 609.7L47.2 604.8L46.7 623.2L46.2 622.9L45.7 624.4L45.2 611.3L44.7 617.8Z"/><path id="wn" d="M44.7 715.4L44.7 702.3L45.2 712.2L45.7 712.2L46.2 712.7L46.7 712.4L47.2 712.6L47.7 709.6L48.2 710.2L48.7 706.9L49.2 710.5L49.7 709.6L50.2 711.9L50.7 711.7L51.2 712.1L51.7 704.1L52.2 708.9L52.7 708.4L53.2 711.7L53.7 711.5L54.2 712.2L54.7 711.8L55.2 712.4L55.7 709.1L56.2 709.6L56.7 705.9L57.2 707.9L57.7 706.5L58.2 706.8L58.7 706.7L59.2 710.7L59.7 710.3L60.2 712.0L60.7 711.6L61.2 711.8L61.7 706.7L62.2 707.6L62.7 704.5L63.2 706.2L63.7 704.4L64.2 710.6L64.7 709.9L65.2 710.3L65.7 706.1L66.2 713.0L66.7 712.8L67.2 713.0L67.7 706.7L68.2 713.0L68.7 713.0L69.2 713.5L69.7 709.1L70.2 712.2L70.7 712.0L71.2 712.4L71.7 709.1L72.2 710.0L72.7 705.3L73.2 705.5L73.7 702.7L74.2 709.9L74.7 709.5L75.2 710.4L75.7 704.9L76.2 709.4L76.7 708.8L77.2 708.9L77.7 705.6L78.2 709.0L78.7 708.0L79.2 710.3L79.7 710.1L80.2 711.8L80.7 711.6L81.2 711.8L81.7 701.4L82.2 707.1L82.7 705.4L83.2 709.0L83.7 708.3L84.2 708.4L84.7 707.0L85.2 712.5L85.7 712.0L86.2 712.4L86.7 712.0L87.2 712.4L87.7 706.9L88.2 708.0L88.7 705.9L89.2 710.7L89.7 709.8L90.2 710.5L90.7 709.6L91.2 710.1L91.7 709.9L92.2 713.6L92.7 713.3L93.2 713.3L93.7 711.8L94.2 712.3L94.7 709.8L95.2 711.8L95.7 711.5L96.2 712.0L96.7 705.3L97.2 706.2L97.7 704.7L98.2 705.2L98.7 703.2L99.2 703.2L99.7 702.7L100.2 708.1L100.7 708.0L101.2 708.2L101.7 704.2L102.2 706.6L102.7 705.7L103.2 707.4L103.7 703.7L104.2 708.2L104.7 707.9L105.2 708.9L105.7 703.9L106.2 704.9L106.7 703.5L107.2 708.4L107.7 707.4L108.2 710.6L108.7 709.8L109.2 711.9L109.7 711.5L110.2 711.6L110.7 707.9L111.2 708.3L111.7 704.3L112.2 711.0L112.7 710.1L113.2 710.9L113.7 710.5L114.2 711.4L114.7 703.4L115.2 708.9L115.7 707.8L116.2 710.4L116.7 709.4L117.2 713.0L117.7 712.6L118.2 714.0L118.7 713.9L119.2 714.0L119.7 712.9L120.2 713.1L120.7 710.7L121.2 712.3L121.7 712.0L122.2 712.1L122.7 711.3L123.2 711.6L123.7 705.0L124.2 706.1L124.7 704.8L125.2 709.8L125.7 709.5L126.2 709.6L126.7 704.0L127.2 706.5L127.7 705.6L128.2 708.5L128.7 707.6L129.2 711.9L129.7 711.6L130.2 712.2L130.7 703.4L131.2 704.9L131.7 701.8L132.2 706.2L132.7 704.8L133.2 706.3L133.7 705.4L134.2 707.4L134.7 706.5L135.2 708.0L135.7 705.0L136.2 706.8L136.7 705.1L137.2 707.3L137.7 706.8L138.2 709.7L138.7 709.7L139.2 709.7L139.7 706.7L140.2 711.9L140.7 711.6L141.2 712.2L141.7 705.4L142.2 708.0L142.7 707.7L143.2 708.0L143.7 703.1L144.2 705.1L144.7 700.1L145.2 708.1L145.7 707.4L146.2 707.7L146.7 703.7L147.2 704.6L147.7 700.9L148.2 704.6L148.7 702.6L149.2 710.9L149.7 710.5L150.2 710.9L150.7 705.2L151.2 705.4L151.7 703.0L152.2 706.9L152.7 705.8L153.2 706.5L153.7 701.3L154.2 711.3L154.7 711.2L155.2 711.8L155.7 709.8L156.2 710.8L156.7 710.5L157.2 711.1L157.7 702.4L158.2 711.4L158.7 710.7L159.2 711.8L159.7 711.2L160.2 711.9L160.7 706.7L161.2 706.9L161.7 705.7L162.2 707.2L162.7 704.8L163.2 711.2L163.7 711.1L164.2 711.8L164.7 711.6L165.2 712.9L165.7 712.5L166.2 712.8L166.7 705.3L167.2 707.3L167.7 707.0L168.2 713.4L168.7 713.1L169.2 713.2L169.7 712.1L170.2 712.5L170.7 710.5L171.2 710.6L171.7 708.7L172.2 709.6L172.7 701.6L173.2 710.1L173.7 710.1L174.2 711.1L174.7 705.6L175.2 707.2L175.7 700.7L176.2 707.5L176.7 706.0L177.2 706.0L177.7 705.2L178.2 708.2L178.7 707.3L179.2 707.7L179.7 701.4L180.2 710.5L180.7 710.4L181.2 710.5L181.7 701.6L182.2 701.9L182.7 701.7L183.2 704.0L183.7 702.9L184.2 706.9L184.7 706.0L185.2 710.8L185.7 710.4L186.2 710.8L186.7 704.9L187.2 706.6L187.7 704.5L188.2 706.1L188.7 705.4L189.2 707.0L189.7 705.8L190.2 706.4L190.7 706.1L191.2 707.7L191.7 706.7L192.2 707.2L192.7 706.2L193.2 712.1L193.7 711.4L194.2 713.1L194.7 712.9L195.2 713.2L195.7 712.7L196.2 712.8L196.7 704.9L197.2 711.5L197.7 711.5L198.2 712.1L198.7 701.1L199.2 701.1L199.7 700.5L200.2 702.3L200.7 699.6L201.2 711.4L201.7 710.6L202.2 711.0L202.7 710.0L203.2 710.2L203.7 703.6L204.2 705.4L204.7 699.7L205.2 707.8L205.7 707.1L206.2 709.7L206.7 709.1L207.2 710.2L207.7 709.5L208.2 710.5L208.7 709.1L209.2 709.2L209.7 700.7L210.2 711.4L210.7 710.6L211.2 711.4L211.7 707.5L212.2 708.9L212.7 702.8L213.2 706.8L213.7 705.3L214.2 708.1L214.7 706.8L215.2 708.1L215.7 703.8L216.2 711.3L216.7 711.1L217.2 711.5L217.7 710.5L218.2 710.7L218.7 705.1L219.2 713.6L219.7 713.2L220.2 713.6L220.7 707.7L221.2 711.4L221.7 710.7L222.2 711.0L222.7 710.6L223.2 711.2L223.7 702.9L224.2 704.5L224.7 703.3L225.2 709.2L225.7 708.7L226.2 710.7L226.7 710.5L227.2 711.3L227.7 711.3L228.2 711.5L228.7 709.8L229.2 710.7L229.7 705.5L230.2 709.5L230.7 709.2L231.2 709.3L231.7 705.9L232.2 710.0L232.7 709.2L233.2 710.0L233.7 709.6L234.2 711.1L234.7 710.7L235.2 711.2L235.7 709.7L236.2 710.1L236.7 703.9L237.2 705.8L237.7 703.5L238.2 708.4L238.7 708.0L239.2 708.6L239.7 707.1L240.2 707.3L240.7 707.1L241.2 707.6L241.7 706.4L242.2 710.7L242.7 709.7L243.2 711.3L243.7 711.1L244.2 712.1L244.7 711.6L245.2 711.7L245.7 710.2L246.2 711.0L246.7 707.5L247.2 713.8L247.7 713.5L248.2 713.8L248.7 712.9L249.2 714.0L249.7 713.8L250.2 714.0L250.7 713.7L251.2 713.8L251.7 711.3L252.2 714.2L252.7 714.0L253.2 714.5L253.7 714.3L254.2 714.3L254.7 712.3L255.2 714.4L255.7 714.3L256.2 714.8L256.7 714.8L257.2 714.8L257.7 714.8L258.2 714.8L258.7 694.3L259.2 695.9L259.7 694.3L260.2 706.1L260.7 704.4L261.2 708.2L261.7 707.8L262.2 709.4L262.7 709.2L263.2 710.2L263.7 709.6L264.2 710.2L264.7 710.2L265.2 710.3L265.7 710.0L266.2 710.1L266.7 702.7L267.2 709.2L267.7 708.8L268.2 710.3L268.7 710.2L269.2 710.4L269.7 699.3L270.2 709.9L270.7 709.4L271.2 710.7L271.7 710.3L272.2 710.3L272.7 695.7L273.2 700.5L273.7 698.4L274.2 709.6L274.7 709.4L275.2 709.7L275.7 700.9L276.2 710.9L276.7 710.3L277.2 711.4L277.7 710.6L278.2 713.0L278.7 712.6L279.2 713.1L279.7 712.2L280.2 712.6L280.7 711.8L281.2 712.3L281.7 698.7L282.2 709.6L282.7 708.3L283.2 708.8L283.7 698.3L284.2 705.9L284.7 705.4L285.2 705.9L285.7 694.6L286.2 708.0L286.7 706.8L287.2 707.3L287.7 699.4L288.2 710.0L288.7 708.9L289.2 710.0L289.7 697.4L290.2 702.6L290.7 700.0L291.2 709.1L291.7 708.8L292.2 708.8L292.7 697.5L293.2 699.8L293.7 699.2L294.2 708.2L294.7 707.8L295.2 708.9L295.7 695.8L296.2 709.7L296.7 709.6L297.2 710.5L297.7 704.9L298.2 706.6L298.7 705.2L299.2 708.4L299.7 707.4L300.2 708.2L300.7 707.5L301.2 709.3L301.7 709.1L302.2 709.9L302.7 694.7L303.2 706.7L303.7 706.5L304.2 706.9L304.7 706.5L305.2 706.6L305.7 697.1L306.2 700.3L306.7 694.6L307.2 695.7L307.7 693.8L308.2 702.3L308.7 702.0L309.2 702.9L309.7 700.9L310.2 703.0L310.7 700.1L311.2 702.9L311.7 695.7L312.2 701.2L312.7 698.3L313.2 705.8L313.7 704.0L314.2 705.2L314.7 702.4L315.2 708.3L315.7 708.2L316.2 709.3L316.7 696.4L317.2 700.7L317.7 700.1L318.2 705.2L318.7 705.1L319.2 706.4L319.7 705.7L320.2 711.2L320.7 710.9L321.2 711.4L321.7 705.3L322.2 705.6L322.7 704.5L323.2 709.8L323.7 708.8L324.2 709.1L324.7 697.1L325.2 699.6L325.7 698.8L326.2 705.8L326.7 704.2L327.2 706.3L327.7 699.2L328.2 700.4L328.7 693.9L329.2 710.1L329.7 709.9L330.2 710.5L330.7 703.2L331.2 707.1L331.7 705.7L332.2 712.8L332.7 712.5L333.2 713.0L333.7 710.2L334.2 710.6L334.7 710.5L335.2 710.6L335.7 710.4L336.2 710.6L336.7 709.8L337.2 710.2L337.7 699.3L338.2 702.3L338.7 700.0L339.2 705.7L339.7 703.8L340.2 705.1L340.7 698.2L341.2 709.3L341.7 708.8L342.2 709.7L342.7 699.8L343.2 707.3L343.7 707.0L344.2 707.6L344.7 699.7L345.2 709.6L345.7 708.4L346.2 709.4L346.7 704.3L347.2 710.1L347.7 709.0L348.2 709.9L348.7 709.7L349.2 710.9L349.7 710.0L350.2 710.2L350.7 710.1L351.2 710.7L351.7 701.9L352.2 705.4L352.7 704.5L353.2 711.4L353.7 710.7L354.2 710.9L354.7 710.4L355.2 711.3L355.7 710.0L356.2 711.7L356.7 711.4L357.2 711.8L357.7 696.1L358.2 710.0L358.7 709.1L359.2 709.8L359.7 703.9L360.2 709.5L360.7 708.4L361.2 708.7L361.7 696.5L362.2 702.3L362.7 700.5L363.2 710.0L363.7 709.7L364.2 710.5L364.7 695.0L365.2 709.3L365.7 708.6L366.2 709.1L366.7 692.8L367.2 702.2L367.7 700.9L368.2 702.6L368.7 697.0L369.2 699.8L369.7 696.8L370.2 704.2L370.7 702.0L371.2 704.9L371.7 704.0L372.2 705.1L372.7 701.1L373.2 707.1L373.7 705.7L374.2 712.7L374.7 712.4L375.2 712.5L375.7 702.4L376.2 702.4L376.7 699.8L377.2 708.4L377.7 707.6L378.2 708.4L378.7 696.4L379.2 707.2L379.7 706.4L380.2 707.6L380.7 700.8L381.2 709.5L381.7 708.7L382.2 709.5L382.7 694.5L383.2 697.8L383.7 697.1L384.2 701.2L384.7 700.4L385.2 710.0L385.7 709.0L386.2 709.2L386.7 703.2L387.2 704.1L387.7 693.0L388.2 702.2L388.7 699.9L389.2 708.9L389.7 708.7L390.2 709.6L390.7 694.7L391.2 696.5L391.7 695.5L392.2 700.1L392.7 699.7L393.2 701.8L393.7 692.0L394.2 707.7L394.7 706.3L395.2 707.8L395.7 693.2L396.2 700.0L396.7 698.7L397.2 704.2L397.7 701.8L398.2 712.7L398.7 712.3L399.2 713.1L399.7 712.7L400.2 713.1L400.7 711.3L401.2 712.5L401.7 712.0L402.2 712.2L402.7 702.4L403.2 704.5L403.7 701.1L404.2 707.6L404.7 706.6L405.2 707.6L405.7 694.3L406.2 701.2L406.7 698.5L407.2 699.6L407.7 694.7L408.2 700.7L408.7 699.7L409.2 702.0L409.7 693.8L410.2 698.8L410.7 697.3L411.2 709.4L411.7 708.5L412.2 708.5L412.7 702.2L413.2 702.7L413.7 696.4L414.2 700.1L414.7 698.9L415.2 708.3L415.7 707.2L416.2 708.1L416.7 703.3L417.2 704.6L417.7 694.7L418.2 705.7L418.7 703.9L419.2 705.1L419.7 696.2L420.2 701.3L420.7 699.5L421.2 699.8L421.7 698.8L422.2 706.2L422.7 705.7L423.2 706.7L423.7 706.2L424.2 706.7L424.7 702.5L425.2 704.8L425.7 703.4L426.2 703.6L426.7 701.2L427.2 701.5L427.7 695.4L428.2 698.0L428.7 695.9L429.2 704.1L429.7 702.2L430.2 707.3L430.7 705.8L431.2 706.8L431.7 703.5L432.2 708.5L432.7 707.7L433.2 708.6L433.7 697.3L434.2 709.9L434.7 708.7L435.2 708.9L435.7 699.4L436.2 701.1L436.7 700.9L437.2 706.2L437.7 705.3L438.2 710.7L438.7 709.8L439.2 709.9L439.7 706.5L440.2 708.3L440.7 706.9L441.2 707.9L441.7 707.2L442.2 709.7L442.7 708.6L443.2 710.0L443.7 709.6L444.2 709.7L444.7 696.3L445.2 696.9L445.7 695.4L446.2 709.8L446.7 709.1L447.2 709.7L447.7 709.5L448.2 712.3L448.7 711.7L449.2 712.9L449.7 712.4L450.2 713.7L450.7 713.4L451.2 713.6L451.7 710.2L452.2 711.0L452.7 709.1L453.2 709.6L453.7 698.2L454.2 708.1L454.7 707.5L455.2 707.9L455.7 700.8L456.2 703.5L456.7 701.0L457.2 704.0L457.7 703.5L458.2 710.7L458.7 710.0L459.2 710.3L459.7 702.7L460.2 704.5L460.7 702.5L461.2 707.6L461.7 706.8L462.2 708.1L462.7 698.2L463.2 698.4L463.7 696.8L464.2 702.0L464.7 699.9L465.2 702.1L465.7 695.9L466.2 708.8L466.7 708.0L467.2 708.4L467.7 701.2L468.2 709.8L468.7 708.9L469.2 709.9L469.7 705.3L470.2 710.4L470.7 709.4L471.2 709.7L471.7 695.6L472.2 707.6L472.7 706.8L473.2 707.4L473.7 699.3L474.2 710.9L474.7 710.4L475.2 711.0L475.7 708.8L476.2 710.1L476.7 709.1L477.2 710.3L477.7 709.5L478.2 710.5L478.7 705.1L479.2 710.0L479.7 709.0L480.2 709.4L480.7 707.5L481.2 707.9L481.7 692.5L482.2 710.5L482.7 709.9L483.2 710.9L483.7 708.8L484.2 709.5L484.7 708.2L485.2 709.6L485.7 708.4L486.2 708.5L486.7 705.4L487.2 708.4L487.7 708.2L488.2 709.2L488.7 703.1L489.2 706.1L489.7 705.9L490.2 709.7L490.7 709.2L491.2 709.8L491.7 706.8L492.2 706.9L492.7 701.8L493.2 706.2L493.7 706.0L494.2 707.4L494.7 705.6L495.2 710.5L495.7 709.5L496.2 710.0L496.7 702.8L497.2 702.9L497.7 694.4L498.2 707.3L498.7 707.3L499.2 712.0L499.7 711.4L500.2 712.0L500.7 712.0L501.2 712.4L501.7 710.2L502.2 710.3L502.7 707.1L503.2 707.2L503.7 700.4L504.2 704.1L504.7 702.3L505.2 702.4L505.7 692.4L506.2 703.4L506.7 703.1L507.2 706.3L507.7 705.4L508.2 709.8L508.7 709.4L509.2 709.6L509.7 695.1L510.2 709.4L510.7 709.1L511.2 709.7L511.7 695.0L512.2 699.2L512.7 698.6L513.2 699.4L513.7 699.4L514.2 700.3L514.7 697.0L515.2 709.5L515.7 709.3L516.2 710.4L516.7 709.8L517.2 710.0L517.7 701.2L518.2 707.0L518.7 705.2L519.2 709.1L519.7 708.0L520.2 708.3L520.7 697.9L521.2 700.8L521.7 694.6L522.2 709.5L522.7 709.0L523.2 709.9L523.7 707.6L524.2 708.7L524.7 700.1L525.2 709.2L525.7 708.4L526.2 709.5L526.7 709.0L527.2 709.8L527.7 707.7L528.2 707.9L528.7 705.2L529.2 706.8L529.7 700.0L530.2 705.7L530.7 703.8L531.2 705.1L531.7 696.4L532.2 706.0L532.7 705.9L533.2 708.3L533.7 707.0L534.2 708.3L534.7 704.3L535.2 705.1L535.7 695.7L536.2 704.7L536.7 702.7L537.2 703.0L537.7 693.2L538.2 708.5L538.7 707.9L539.2 708.9L539.7 705.2L540.2 707.0L540.7 705.1L541.2 705.2L541.7 692.0L542.2 698.9L542.7 695.4L543.2 696.2L543.7 694.4L544.2 703.6L544.7 702.3L545.2 703.0L545.7 700.0L546.2 708.7L546.7 708.3L547.2 709.0L547.7 699.7L548.2 710.1L548.7 709.8L549.2 711.1L549.7 710.9L550.2 711.1L550.7 709.4L551.2 710.2L551.7 705.6L552.2 710.9L552.7 710.2L553.2 710.8L553.7 702.6L554.2 704.4L554.7 702.8L555.2 702.9L555.7 699.9L556.2 700.6L556.7 695.2L557.2 699.4L557.7 698.9L558.2 707.0L558.7 705.1L559.2 706.3L559.7 694.7L560.2 707.0L560.7 706.8L561.2 707.0L561.7 694.3L562.2 708.6L562.7 707.7L563.2 709.0L563.7 699.4L564.2 699.5L564.7 695.3L565.2 698.8L565.7 698.5L566.2 705.8L566.7 704.7L567.2 706.4L567.7 696.5L568.2 710.2L568.7 709.4L569.2 709.7L569.7 703.1L570.2 706.6L570.7 706.5L571.2 707.1L571.7 706.6L572.2 707.9L572.7 698.3L573.2 703.5L573.7 703.4L574.2 705.4L574.7 698.8L575.2 708.6L575.7 708.1L576.2 708.9L576.7 703.3L577.2 705.3L577.7 695.4L578.2 704.0L578.7 703.0L579.2 710.5L579.7 709.5L580.2 710.5L580.7 700.1L581.2 702.5L581.7 699.0L582.2 701.5L582.7 701.5L583.2 702.3L583.7 700.1L584.2 702.3L584.7 697.4L585.2 703.2L585.7 703.2L586.2 706.3L586.7 706.0L587.2 707.4L587.7 703.5L588.2 703.8L588.7 703.4L589.2 711.0L589.7 710.2L590.2 710.9L590.7 700.8L591.2 700.9L591.7 697.9L592.2 705.5L592.7 704.3L593.2 706.0L593.7 694.1L594.2 709.2L594.7 709.1L595.2 709.6L595.7 705.9L596.2 706.6L596.7 706.4L597.2 712.5L597.7 712.1L598.2 712.3L598.7 712.2L599.2 713.5L599.7 713.4L600.2 713.9L600.7 713.9L601.2 714.1L601.7 713.2L602.2 713.4L602.7 705.5L603.2 710.6L603.7 710.2L604.2 710.8L604.7 709.2L605.2 709.9L605.7 705.5L606.2 710.1L606.7 709.3L607.2 710.1L607.7 697.7L608.2 698.3L608.7 695.1L609.2 708.1L609.7 707.3L610.2 710.7L610.7 709.9L611.2 709.9L611.7 701.6L612.2 703.5L612.7 702.0L613.2 707.1L613.7 706.2L614.2 707.6L614.7 706.6L615.2 706.8L615.7 704.2L616.2 709.0L616.7 708.0L617.2 710.3L617.7 709.5L618.2 710.4L618.7 704.7L619.2 706.7L619.7 704.7L620.2 708.3L620.7 707.6L621.2 709.1L621.7 707.9L622.2 708.6L622.7 702.4L623.2 710.6L623.7 709.6L624.2 711.0L624.7 710.5L625.2 710.8L625.7 703.1L626.2 707.8L626.7 707.1L627.2 708.6L627.7 704.7L628.2 705.4L628.7 694.3L629.2 709.1L629.7 708.7L630.2 709.2L630.7 697.7L631.2 698.9L631.7 698.4L632.2 700.0L632.7 695.7L633.2 708.2L633.7 706.6L634.2 710.1L634.7 709.3L635.2 709.6L635.7 699.5L636.2 709.6L636.7 709.0L637.2 710.1L637.7 704.5L638.2 706.0L638.7 696.0L639.2 701.6L639.7 699.0L640.2 709.6L640.7 709.0L641.2 709.8L641.7 696.0L642.2 702.6L642.7 700.6L643.2 702.9L643.7 702.2L644.2 703.2L644.7 700.4L645.2 700.5L645.7 696.8L646.2 709.9L646.7 708.9L647.2 709.0L647.7 693.9L648.2 708.9L648.7 707.9L649.2 708.6L649.7 704.8L650.2 705.5L650.7 700.3L651.2 708.5L651.7 708.4L652.2 711.4L652.7 710.8L653.2 711.4L653.7 710.7L654.2 711.4L654.7 701.5L655.2 703.2L655.7 698.0L656.2 699.0L656.7 696.2L657.2 705.9L657.7 705.9L658.2 706.3L658.7 703.0L659.2 705.2L659.7 695.0L660.2 707.3L660.7 705.8L661.2 707.7L661.7 706.2L662.2 706.9L662.7 695.4L663.2 698.5L663.7 698.3L664.2 703.6L664.7 702.7L665.2 704.7L665.7 696.1L666.2 703.2L666.7 700.6L667.2 701.9L667.7 695.5L668.2 696.4L668.7 693.0L669.2 707.7L669.7 706.5L670.2 707.0L670.7 698.0L671.2 711.0L671.7 710.3L672.2 710.8L672.7 705.5L673.2 706.4L673.7 706.0L674.2 707.2L674.7 698.3L675.2 711.3L675.7 710.6L676.2 710.6L676.7 700.8L677.2 711.0L677.7 710.4L678.2 710.9L678.7 707.0L679.2 710.4L679.7 710.2L680.2 710.7L680.7 710.5L681.2 712.6L681.7 712.5L682.2 712.9L682.7 706.7L683.2 708.0L683.7 703.9L684.2 709.2L684.7 708.9L685.2 709.3L685.7 700.3L686.2 702.9L686.7 699.0L687.2 701.7L687.7 697.3L688.2 706.9L688.7 706.6L689.2 707.8L689.7 693.8L690.2 710.2L690.7 709.8L691.2 709.9L691.7 704.4L692.2 705.5L692.7 699.9L693.2 701.7L693.7 699.8L694.2 706.5L694.7 705.4L695.2 706.8L695.7 700.1L696.2 702.6L696.7 701.4L697.2 702.7L697.7 696.8L698.2 703.5L698.7 700.9L699.2 709.3L699.7 708.5L700.2 711.1L700.7 710.7L701.2 711.9L701.7 711.4L702.2 711.7L702.7 710.7L703.2 711.5L703.7 707.3L704.2 708.1L704.7 707.6L705.2 708.7L705.7 700.1L706.2 700.9L706.7 696.9L707.2 704.1L707.7 703.1L708.2 703.9L708.7 702.2L709.2 707.6L709.7 705.8L710.2 706.8L710.7 706.5L711.2 710.3L711.7 710.3L712.2 710.8L712.7 701.1L713.2 709.9L713.7 709.6L714.2 710.3L714.7 694.0L715.2 700.8L715.7 699.7L716.2 700.4L716.7 699.4L717.2 708.8L717.7 707.7L718.2 708.9L718.7 707.0L719.2 709.4L719.7 709.3L720.2 710.1L720.7 698.7L721.2 701.0L721.7 700.4L722.2 709.3L722.7 708.9L723.2 709.0L723.7 699.1L724.2 710.1L724.7 709.7L725.2 710.1L725.7 710.0L726.2 710.3L726.7 706.8L727.2 708.2L727.7 699.7L728.2 708.3L728.7 707.1L729.2 710.5L729.7 709.7L730.2 710.4L730.7 701.8L731.2 702.9L731.7 694.1L732.2 707.1L732.7 707.0L733.2 708.4L733.7 703.7L734.2 708.8L734.7 707.6L735.2 712.7L735.7 712.5L736.2 712.6L736.7 702.8L737.2 710.6L737.7 710.4L738.2 712.7L738.7 712.3L739.2 712.8L739.7 704.7L740.2 706.6L740.7 704.1L741.2 705.0L741.7 703.7L742.2 704.4L742.7 704.4L743.2 704.6L743.7 698.0L744.2 699.9L744.7 699.0L745.2 700.8L745.7 695.8L746.2 696.7L746.7 694.7L747.2 697.9L747.7 695.3L748.2 698.8L748.7 695.4L749.2 709.7L749.7 709.2L750.2 709.7L750.7 707.7L751.2 711.6L751.7 711.1L752.2 711.9L752.7 711.3L753.2 712.0L753.7 711.2L754.2 711.8L754.7 708.4L755.2 711.0L755.7 711.0L756.2 711.5L756.7 709.6L757.2 711.4L757.7 710.6L758.2 710.9L758.7 707.0L759.2 708.4L759.7 705.9L760.2 710.0L760.7 709.3L761.2 710.2L761.7 710.0L762.2 710.2L762.7 703.0L763.2 704.0L763.7 695.3L764.2 698.7L764.7 694.6L765.2 703.0L765.7 702.2L766.2 703.0L766.7 694.2L767.2 707.7L767.7 706.3L768.2 706.5L768.7 697.8L769.2 704.0L769.7 703.2L770.2 704.6L770.7 702.9L771.2 706.3L771.7 704.8L772.2 706.6L772.7 702.2L773.2 707.3L773.7 706.9L774.2 707.4L774.7 703.4L775.2 705.1L775.7 699.0L776.2 700.8L776.7 694.9L777.2 701.6L777.7 699.3L778.2 707.9L778.7 707.2L779.2 708.3L779.7 704.2L780.2 706.1L780.7 705.8L781.2 708.8L781.7 708.3L782.2 709.0L782.7 704.4L783.2 705.2L783.7 696.2L784.2 698.8L784.7 697.3L785.2 705.4L785.7 704.3L786.2 706.3L786.7 704.3L787.2 705.3L787.7 702.0L788.2 703.4L788.7 701.3L789.2 703.1L789.7 699.9L790.2 710.9L790.7 710.8L791.2 711.2L791.7 698.6L792.2 710.3L792.7 709.2L793.2 709.8L793.7 705.3L794.2 708.7L794.7 708.2L795.2 709.9L795.7 709.5L796.2 710.4L796.7 700.6L797.2 707.2L797.7 707.1L798.2 707.7L798.7 697.5L799.2 703.7L799.7 703.2L800.2 711.4L800.7 711.2L801.2 711.5L801.7 708.3L802.2 712.9L802.7 712.7L803.2 713.0L803.7 710.0L804.2 712.2L804.7 712.0L805.2 712.3L805.7 704.4L806.2 708.2L806.7 707.1L807.2 707.3L807.7 704.9L808.2 705.6L808.7 696.5L809.2 701.2L809.7 700.2L810.2 701.8L810.7 696.2L811.2 707.5L811.7 706.5L812.2 707.1L812.7 705.6L813.2 706.2L813.7 705.2L814.2 706.4L814.7 702.4L815.2 704.5L815.7 699.8L816.2 701.2L816.7 698.8L817.2 700.8L817.7 699.9L818.2 704.9L818.7 704.9L819.2 706.7L819.7 695.9L820.2 701.2L820.7 698.8L821.2 707.2L821.7 707.2L822.2 708.3L822.7 703.0L823.2 704.8L823.7 699.1L824.2 707.9L824.7 706.5L825.2 709.1L825.7 708.8L826.2 709.9L826.7 701.6L827.2 701.8L827.7 700.1L828.2 703.1L828.7 702.8L829.2 709.4L829.7 709.4L830.2 710.0L830.7 699.8L831.2 706.9L831.7 706.2L832.2 706.4L832.7 700.0L833.2 703.6L833.7 703.3L834.2 703.7L834.7 701.1L835.2 701.3L835.7 700.1L836.2 708.2L836.7 707.2L837.2 710.4L837.7 709.6L838.2 710.7L838.7 710.0L839.2 710.2L839.7 700.6L840.2 709.4L840.7 708.8L841.2 709.8L841.7 699.5L842.2 704.1L842.7 702.2L843.2 704.2L843.7 701.9L844.2 705.7L844.7 704.3L845.2 709.3L845.7 708.2L846.2 709.4L846.7 703.3L847.2 708.0L847.7 707.9L848.2 711.3L848.7 710.8L849.2 711.5L849.7 705.8L850.2 706.0L850.7 703.2L851.2 706.2L851.7 704.6L852.2 712.8L852.7 712.7L853.2 713.0L853.7 712.5L854.2 712.8L854.7 703.5L855.2 710.6L855.7 709.9L856.2 710.7L856.7 708.6L857.2 709.7L857.7 698.7L858.2 699.5L858.7 698.6L859.2 702.7L859.7 702.6L860.2 703.4L860.7 698.7L861.2 702.6L861.7 700.4L862.2 707.9L862.7 707.8L863.2 708.1L863.7 703.7L864.2 705.6L864.7 694.8L865.2 708.1L865.7 706.7L866.2 706.9L866.7 698.2L867.2 705.7L867.7 703.9L868.2 704.4L868.7 703.8L869.2 707.0L869.7 706.5L870.2 707.5L870.7 706.0L871.2 707.5L871.7 695.4L872.2 704.4L872.7 702.8L873.2 703.1L873.7 701.7L874.2 702.9L874.7 700.6L875.2 709.2L875.7 708.3L876.2 709.4L876.7 708.9L877.2 709.5L877.7 702.2L878.2 704.0L878.7 704.0L879.2 704.3L879.7 698.2L880.2 701.8L880.7 699.1L881.2 700.9L881.7 699.5L882.2 700.2L882.7 696.2L883.2 699.6L883.7 699.0L884.2 701.8L884.7 697.4L885.2 699.8L885.7 697.6L886.2 708.2L886.7 708.1L887.2 708.4L887.7 696.6L888.2 700.3L888.7 698.8L889.2 703.1L889.7 703.0L890.2 705.3L890.7 704.5L891.2 706.2L891.7 700.9L892.2 708.1L892.7 707.5L893.2 708.7L893.7 707.2L894.2 707.4L894.7 699.3L895.2 701.7L895.7 701.4L896.2 706.7L896.7 705.2L897.2 706.2L897.7 697.9L898.2 711.4L898.7 710.7L899.2 710.7L899.7 695.5L900.2 699.4L900.7 699.3L901.2 710.7L901.7 710.2L902.2 710.7L902.7 709.2L903.2 710.2L903.7 710.2L904.2 710.5L904.7 700.2L905.2 709.0L905.7 709.0L906.2 709.3L906.7 708.2L907.2 709.2L907.7 702.9L908.2 705.1L908.7 703.9L909.2 705.1L909.7 700.2L910.2 701.0L910.7 698.9L911.2 703.5L911.7 702.4L912.2 704.4L912.7 703.3L913.2 707.4L913.7 707.1L914.2 708.4L914.7 703.1L915.2 705.0L915.7 695.8L916.2 705.6L916.7 703.5L917.2 705.5L917.7 695.4L918.2 699.3L918.7 696.5L919.2 702.1L919.7 701.4L920.2 701.7L920.7 695.8L921.2 696.8L921.7 695.0L922.2 698.3L922.7 695.2L923.2 704.9L923.7 704.8L924.2 707.3L924.7 706.8L925.2 707.0L925.7 695.4L926.2 698.6L926.7 696.0L927.2 702.8L927.7 700.4L928.2 703.3L928.7 701.5L929.2 710.1L929.7 709.2L930.2 710.1L930.7 703.7L931.2 710.8L931.7 710.0L932.2 710.9L932.7 710.0L933.2 710.6L933.7 710.2L934.2 710.9L934.7 710.8L935.2 710.9L935.7 707.4L936.2 708.4L936.7 708.2L937.2 708.2L937.7 697.0L938.2 708.4L938.7 707.7L939.2 710.5L939.7 710.4L940.2 710.4L940.7 706.1L941.2 706.5L941.7 701.9L942.2 705.8L942.7 704.1L943.2 710.8L943.7 710.5L944.2 711.3L944.7 703.2L945.2 710.0L945.7 709.1L946.2 709.4L946.7 706.1L947.2 707.1L947.7 696.6L948.2 708.4L948.7 707.2L949.2 708.0L949.7 703.8L950.2 710.0L950.7 709.7L951.2 709.9L951.7 703.8L952.2 704.8L952.7 704.0L953.2 704.9L953.7 700.5L954.2 710.9L954.7 710.1L955.2 710.7L955.7 710.6L956.2 711.4L956.7 709.9L957.2 710.1L957.7 706.5L958.2 707.1L958.7 706.0L959.2 707.0L959.7 702.8L960.2 704.0L960.7 699.0L961.2 711.1L961.7 710.5L962.2 711.2L962.7 710.6L963.2 711.0L963.7 707.2L964.2 711.2L964.7 710.7L965.2 711.2L965.7 710.9L966.2 711.2L966.7 708.0L967.2 711.4L967.7 710.5L968.2 711.2L968.7 702.3L969.2 704.3L969.7 702.7L970.2 704.3L970.7 703.6L971.2 704.4L971.7 702.1L972.2 703.9L972.7 700.9L973.2 709.4L973.7 709.0L974.2 709.3L974.7 696.0L975.2 708.9L975.7 707.6L976.2 709.2L976.7 709.1L977.2 709.1L977.7 696.6L978.2 709.2L978.7 708.7L979.2 709.2L979.7 694.6L980.2 699.1L980.7 699.0L981.2 708.2L981.7 706.9L982.2 711.2L982.7 710.7L983.2 710.8L983.7 700.9L984.2 711.5L984.7 710.7L985.2 711.5L985.7 702.8L986.2 703.2L986.7 697.3L987.2 704.7L987.7 703.5L988.2 705.2L988.7 705.1L989.2 706.0L989.7 702.4L990.2 703.1L990.7 699.5L991.2 706.7L991.7 705.6L992.2 706.9L992.7 702.2L993.2 707.3L993.7 706.7L994.2 707.6L994.7 699.0L995.2 708.3L995.7 707.6L996.2 709.2L996.7 708.3L997.2 708.7L997.7 695.2L998.2 703.1L998.7 702.5L999.2 710.7L999.7 710.5L1000.2 712.8L1000.7 712.4L1001.2 712.6L1001.7 704.8L1002.2 706.9L1002.7 706.8L1003.2 712.3L1003.7 712.2L1004.2 712.6L1004.7 709.2L1005.2 709.3L1005.7 702.4L1006.2 703.7L1006.7 700.1L1007.2 702.8L1007.7 698.2L1008.2 701.7L1008.7 699.4L1009.2 700.1L1009.7 699.5L1010.2 709.0L1010.7 707.8L1011.2 709.0L1011.7 700.2L1012.2 701.6L1012.7 700.5L1013.2 710.4L1013.7 710.1L1014.2 710.4L1014.7 703.4L1015.2 709.1L1015.7 707.8L1016.2 708.7L1016.7 707.0L1017.2 711.0L1017.7 710.6L1018.2 710.9L1018.7 705.3L1019.2 705.6L1019.7 698.6L1020.2 709.7L1020.7 708.5L1021.2 709.5L1021.7 695.3L1022.2 702.9L1022.7 702.2L1023.2 707.0L1023.7 705.5L1024.2 705.5L1024.7 703.1L1025.2 705.2L1025.7 703.4L1026.2 706.8L1026.7 705.4L1027.2 706.0L1027.7 700.3L1028.2 702.6L1028.7 695.8L1029.2 698.9L1029.7 698.8L1030.2 709.1L1030.7 708.8L1031.2 710.3L1031.7 709.3L1032.2 710.4L1032.7 699.6L1033.2 709.6L1033.7 709.5L1034.2 710.4L1034.7 704.2L1035.2 705.4L1035.7 704.0L1036.2 705.7L1036.7 701.4L1037.2 703.6L1037.7 695.1L1038.2 706.0L1038.7 704.3L1039.2 707.6L1039.7 706.1L1040.2 707.7L1040.7 707.7L1041.2 711.4L1041.7 710.9L1042.2 710.9L1042.7 703.1L1043.2 710.7L1043.7 709.7L1044.2 711.3L1044.7 711.1L1045.2 711.6L1045.7 702.2L1046.2 704.5L1046.7 696.0L1047.2 707.6L1047.7 706.9L1048.2 707.3L1048.7 703.0L1049.2 704.4L1049.7 699.1L1050.2 701.5L1050.7 699.8L1051.2 709.7L1051.7 709.7L1052.2 710.6L1052.7 700.2L1053.2 702.9L1053.7 695.9L1054.2 705.8L1054.7 704.1L1055.2 706.2L1055.7 706.1L1056.2 706.8L1056.7 703.5L1057.2 704.4L1057.7 703.7L1058.2 705.4L1058.7 699.7L1059.2 701.3L1059.7 696.7L1060.2 700.8L1060.7 700.5L1061.2 705.4L1061.7 703.8L1062.2 705.6L1062.7 703.6L1063.2 705.7L1063.7 698.5L1064.2 710.2L1064.7 709.8L1065.2 710.2L1065.7 704.9L1066.2 708.3L1066.7 707.1L1067.2 708.6L1067.7 707.7L1068.2 707.9L1068.7 701.7L1069.2 703.2L1069.7 702.6L1070.2 708.1L1070.7 707.4L1071.2 708.6L1071.7 706.2L1072.2 707.2L1072.7 704.8L1073.2 704.9L1073.7 701.4L1074.2 708.7L1074.7 707.7L1075.2 708.6L1075.7 703.4L1076.2 704.4L1076.7 698.9L1077.2 708.7L1077.7 708.2L1078.2 709.0L1078.7 706.4L1079.2 709.5L1079.7 708.8L1080.2 709.7L1080.7 702.4L1081.2 711.5L1081.7 710.6L1082.2 711.0L1082.7 704.3L1083.2 705.4L1083.7 700.5L1084.2 708.4L1084.7 707.6L1085.2 713.0L1085.7 712.4L1086.2 712.6L1086.7 712.5L1087.2 712.9L1087.7 708.7L1088.2 709.9L1088.7 709.9L1089.2 710.5L1089.7 701.3L1090.2 703.0L1090.7 702.7L1091.2 709.7L1091.7 709.3L1092.2 710.6L1092.7 710.0L1093.2 710.6L1093.7 707.2L1094.2 708.0L1094.7 704.8L1095.2 706.5L1095.7 701.0L1096.2 703.5L1096.7 698.4L1097.2 700.0L1097.7 699.7L1098.2 708.7L1098.7 708.0L1099.2 709.8L1099.7 709.1L1100.2 710.0L1100.7 702.4L1101.2 702.9L1101.7 702.5L1102.2 703.1L1102.7 701.8L1103.2 709.8L1103.7 709.4L1104.2 709.8L1104.7 708.3L1105.2 708.9L1105.7 705.7L1106.2 709.8L1106.7 709.4L1107.2 710.3L1107.7 699.3L1108.2 699.3L1108.7 694.3L1109.2 700.7L1109.7 699.7L1110.2 708.7L1110.7 707.3L1111.2 708.3L1111.7 700.4L1112.2 707.9L1112.7 706.5L1113.2 707.1L1113.7 696.8L1114.2 705.4L1114.7 705.4L1115.2 706.9L1115.7 695.3L1116.2 708.2L1116.7 707.7L1117.2 708.2L1117.7 703.9L1118.2 705.5L1118.7 696.1L1119.2 701.5L1119.7 701.1L1120.2 702.0L1120.7 696.1L1121.2 706.9L1121.7 705.6L1122.2 707.1L1122.7 706.8L1123.2 711.5L1123.7 710.7L1124.2 711.1L1124.7 710.9L1125.2 712.0L1125.7 711.5L1126.2 711.9L1126.7 710.5L1127.2 710.8L1127.7 707.2L1128.2 708.0L1128.7 699.2L1129.2 700.1L1129.7 699.2L1130.2 709.7L1130.7 709.3L1131.2 710.3L1131.7 705.7L1132.2 710.2L1132.7 709.2L1133.2 709.3L1133.7 701.8L1134.2 709.5L1134.7 708.5L1135.2 709.3L1135.7 706.7L1136.2 708.0L1136.7 704.5L1137.2 706.2L1137.7 703.6L1138.2 708.2L1138.7 707.1L1139.2 708.4L1139.7 700.8L1140.2 701.5L1140.7 701.1L1141.2 706.9L1141.7 705.4L1142.2 705.7L1142.7 698.1L1143.2 700.5L1143.7 694.7L1144.2 702.6L1144.7 700.3L1145.2 701.1L1145.7 700.0L1146.2 702.6L1146.7 699.5L1147.2 708.8L1147.7 707.6L1148.2 707.8L1148.7 701.6L1149.2 704.0L1149.7 700.4L1150.2 707.1L1150.7 705.6L1151.2 708.3L1151.7 708.2L1152.2 708.5L1152.7 701.7L1153.2 702.1L1153.7 700.1L1154.2 700.9L1154.7 697.5L1155.2 712.2L1155.7 712.0L1156.2 712.0L1156.7 705.1L1157.2 706.2L1157.7 705.2L1158.2 712.7L1158.7 712.5L1159.2 714.0L1159.7 713.7L1160.2 713.9L1160.7 702.6L1161.2 704.3L1161.7 704.1L1162.2 707.8L1162.7 707.5L1163.2 710.7L1163.7 709.9L1164.2 710.7L1164.7 710.3L1165.2 710.8L1165.7 702.9L1166.2 706.7L1166.7 705.5L1167.2 707.0L1167.7 698.6L1168.2 710.0L1168.7 709.6L1169.2 709.7L1169.7 708.9L1170.2 709.2L1170.7 705.8L1171.2 709.4L1171.7 709.4L1172.2 710.4L1172.7 703.5L1173.2 707.5L1173.7 706.5L1174.2 707.1L1174.7 705.9L1175.2 706.5L1175.7 705.0L1176.2 706.2L1176.7 702.7L1177.2 704.9L1177.7 704.2L1178.2 706.1L1178.7 703.1L1179.2 710.3L1179.7 709.7L1180.2 710.2L1180.7 706.8L1181.2 707.9L1181.7 704.0L1182.2 706.3L1182.7 705.9L1183.2 709.6L1183.7 709.1L1184.2 712.8L1184.7 712.6L1185.2 713.0L1185.7 710.3L1186.2 710.9L1186.7 709.4L1187.2 710.3L1187.7 708.5L1188.2 709.1L1188.7 706.1L1189.2 713.1L1189.7 713.0L1190.2 713.1L1190.7 706.6L1191.2 713.3L1191.7 713.0L1192.2 713.1L1192.7 712.6L1193.2 713.3L1193.7 713.0L1194.2 713.1L1194.7 710.0L1195.2 713.0L1195.7 713.0L1196.2 713.1L1196.7 711.9L1197.2 712.9L1197.7 712.3L1198.2 712.9L1198.7 712.5L1199.2 712.9L1199.7 712.0L1200.2 714.5L1200.7 714.3L1201.2 714.3L1201.7 713.4L1202.2 714.7L1202.7 714.7L1203.2 714.8L1203.7 714.1L1204.2 714.6L1204.7 714.5L1205.2 714.5L1205.7 713.8L1206.2 714.1L1206.7 713.8L1207.2 714.1L1207.7 714.0L1208.2 714.3L1208.7 714.1L1209.2 714.4L1209.7 714.4L1210.2 715.0L1210.7 714.9L1211.2 715.1L1211.7 715.0L1212.2 715.1L1212.7 714.3L1213.2 715.0L1213.7 715.0L1214.2 715.1L1214.7 715.0L1215.2 715.1L1215.7 715.1L1216.2 715.2L1216.7 715.2L1217.2 715.2L1217.7 715.2L1218.2 715.2L1218.7 715.2L1219.2 715.2L1219.7 715.3L1220.2 715.2L1220.7 715.2L1221.2 715.3L1221.7 715.3L1222.2 715.3L1222.7 715.3L1223.2 715.3L1223.7 715.2L1224.2 715.3L1224.7 715.2L1225.2 715.3L1225.7 715.3L1226.2 715.2L1226.7 715.2L1227.2 715.3L1227.7 715.3L1228.2 715.2L1228.7 715.3L1229.2 715.2L1229.7 715.2L1230.2 715.2L1230.7 715.2L1231.2 715.3L1231.7 715.2L1232.2 715.3L1232.7 715.2L1233.2 715.3L1233.7 715.3L1234.2 715.3L1234.7 715.3L1235.2 715.3L1235.7 715.2L1236.2 715.3L1236.7 715.3L1237.2 715.3L1237.7 715.2L1238.2 715.3L1238.7 715.2L1239.2 715.2L1239.7 715.3L1240.2 715.2L1240.7 715.2L1241.2 715.3L1241.7 715.3L1242.2 715.3L1242.7 715.3L1243.2 715.3L1243.7 715.3L1244.2 715.3L1244.7 715.3L1245.2 715.3L1245.7 715.2L1246.2 715.3L1246.7 715.3L1247.2 715.3L1247.7 715.3L1248.2 715.3L1248.7 715.3L1249.2 715.3L1249.7 715.3L1250.2 715.3L1250.7 715.3L1251.2 715.3L1251.7 715.3L1252.2 715.3L1252.7 715.3L1253.2 715.3L1253.7 715.3L1254.2 715.3L1254.7 715.3L1254.7 715.5L1254.2 715.5L1253.7 715.5L1253.2 715.5L1252.7 715.5L1252.2 715.5L1251.7 715.5L1251.2 715.5L1250.7 715.5L1250.2 715.5L1249.7 715.5L1249.2 715.6L1248.7 715.6L1248.2 715.5L1247.7 715.5L1247.2 715.5L1246.7 715.6L1246.2 715.6L1245.7 715.5L1245.2 715.5L1244.7 715.5L1244.2 715.5L1243.7 715.5L1243.2 715.5L1242.7 715.5L1242.2 715.5L1241.7 715.5L1241.2 715.5L1240.7 715.5L1240.2 715.6L1239.7 715.5L1239.2 715.5L1238.7 715.5L1238.2 715.6L1237.7 715.6L1237.2 715.6L1236.7 715.6L1236.2 715.5L1235.7 715.6L1235.2 715.5L1234.7 715.5L1234.2 715.5L1233.7 715.5L1233.2 715.5L1232.7 715.6L1232.2 715.6L1231.7 715.6L1231.2 715.6L1230.7 715.5L1230.2 715.5L1229.7 715.5L1229.2 715.5L1228.7 715.6L1228.2 715.6L1227.7 715.6L1227.2 715.6L1226.7 715.6L1226.2 715.5L1225.7 715.6L1225.2 715.6L1224.7 715.6L1224.2 715.5L1223.7 715.6L1223.2 715.6L1222.7 715.6L1222.2 715.5L1221.7 715.6L1221.2 715.6L1220.7 715.6L1220.2 715.5L1219.7 715.5L1219.2 715.6L1218.7 715.7L1218.2 715.7L1217.7 715.8L1217.2 715.8L1216.7 715.8L1216.2 715.7L1215.7 715.7L1215.2 715.7L1214.7 715.8L1214.2 715.8L1213.7 716.4L1213.2 716.1L1212.7 716.2L1212.2 716.2L1211.7 716.3L1211.2 716.2L1210.7 716.9L1210.2 715.9L1209.7 716.0L1209.2 716.0L1208.7 716.2L1208.2 716.0L1207.7 716.1L1207.2 716.1L1206.7 717.1L1206.2 717.1L1205.7 717.4L1205.2 716.9L1204.7 717.0L1204.2 716.3L1203.7 716.5L1203.2 716.4L1202.7 716.9L1202.2 716.8L1201.7 717.7L1201.2 717.4L1200.7 718.7L1200.2 716.5L1199.7 716.7L1199.2 716.5L1198.7 717.2L1198.2 716.9L1197.7 720.6L1197.2 716.9L1196.7 717.1L1196.2 717.0L1195.7 718.7L1195.2 718.7L1194.7 721.7L1194.2 718.3L1193.7 718.3L1193.2 717.6L1192.7 717.9L1192.2 717.5L1191.7 721.5L1191.2 717.6L1190.7 718.1L1190.2 718.0L1189.7 720.2L1189.2 719.4L1188.7 722.2L1188.2 720.3L1187.7 720.5L1187.2 719.5L1186.7 720.1L1186.2 718.0L1185.7 718.4L1185.2 718.0L1184.7 725.7L1184.2 721.0L1183.7 721.0L1183.2 721.0L1182.7 722.4L1182.2 721.2L1181.7 728.8L1181.2 722.8L1180.7 723.2L1180.2 722.3L1179.7 725.8L1179.2 719.7L1178.7 720.6L1178.2 719.8L1177.7 723.5L1177.2 722.9L1176.7 725.8L1176.2 719.3L1175.7 720.0L1175.2 719.7L1174.7 730.6L1174.2 721.6L1173.7 722.3L1173.2 720.6L1172.7 720.8L1172.2 720.5L1171.7 723.8L1171.2 722.7L1170.7 729.8L1170.2 719.7L1169.7 720.2L1169.2 719.4L1168.7 726.2L1168.2 722.3L1167.7 723.6L1167.2 721.4L1166.7 722.1L1166.2 721.0L1165.7 721.8L1165.2 721.4L1164.7 731.5L1164.2 723.7L1163.7 724.1L1163.2 722.9L1162.7 735.4L1162.2 729.5L1161.7 730.5L1161.2 725.8L1160.7 726.6L1160.2 720.9L1159.7 721.2L1159.2 717.9L1158.7 718.4L1158.2 718.1L1157.7 721.8L1157.2 719.4L1156.7 719.6L1156.2 719.4L1155.7 722.3L1155.2 721.6L1154.7 727.7L1154.2 725.5L1153.7 728.3L1153.2 721.4L1152.7 722.2L1152.2 721.9L1151.7 733.6L1151.2 729.1L1150.7 729.6L1150.2 729.3L1149.7 735.5L1149.2 726.9L1148.7 727.8L1148.2 726.2L1147.7 736.2L1147.2 723.9L1146.7 723.9L1146.2 722.5L1145.7 726.1L1145.2 722.8L1144.7 723.4L1144.2 722.2L1143.7 722.9L1143.2 722.7L1142.7 725.3L1142.2 724.7L1141.7 735.2L1141.2 724.1L1140.7 725.9L1140.2 724.0L1139.7 732.2L1139.2 730.7L1138.7 732.9L1138.2 731.2L1137.7 732.3L1137.2 730.9L1136.7 736.4L1136.2 735.7L1135.7 736.4L1135.2 721.9L1134.7 722.7L1134.2 721.6L1133.7 733.8L1133.2 722.1L1132.7 722.1L1132.2 721.3L1131.7 736.6L1131.2 726.9L1130.7 728.1L1130.2 724.3L1129.7 725.6L1129.2 724.5L1128.7 732.8L1128.2 729.1L1127.7 729.3L1127.2 720.0L1126.7 720.1L1126.2 719.5L1125.7 719.9L1125.2 718.8L1124.7 718.9L1124.2 718.4L1123.7 723.1L1123.2 722.4L1122.7 729.1L1122.2 728.2L1121.7 729.5L1121.2 728.4L1120.7 730.9L1120.2 730.7L1119.7 734.8L1119.2 730.9L1118.7 731.8L1118.2 720.5L1117.7 720.8L1117.2 720.2L1116.7 721.0L1116.2 720.5L1115.7 720.9L1115.2 720.5L1114.7 723.2L1114.2 723.0L1113.7 726.5L1113.2 726.0L1112.7 731.6L1112.2 728.3L1111.7 730.0L1111.2 729.1L1110.7 732.4L1110.2 725.4L1109.7 727.2L1109.2 726.1L1108.7 734.4L1108.2 719.8L1107.7 720.7L1107.2 720.4L1106.7 725.0L1106.2 719.4L1105.7 720.1L1105.2 719.2L1104.7 719.7L1104.2 719.6L1103.7 722.2L1103.2 720.3L1102.7 721.3L1102.2 721.1L1101.7 732.1L1101.2 730.7L1100.7 733.5L1100.2 733.2L1099.7 733.7L1099.2 729.2L1098.7 731.2L1098.2 727.1L1097.7 727.2L1097.2 725.9L1096.7 726.9L1096.2 726.7L1095.7 735.0L1095.2 732.9L1094.7 737.0L1094.2 732.6L1093.7 733.0L1093.2 731.0L1092.7 731.2L1092.2 723.2L1091.7 723.5L1091.2 722.5L1090.7 728.2L1090.2 726.3L1089.7 728.0L1089.2 724.9L1088.7 725.2L1088.2 720.5L1087.7 721.1L1087.2 717.3L1086.7 717.5L1086.2 717.3L1085.7 719.6L1085.2 719.1L1084.7 720.9L1084.2 720.5L1083.7 725.9L1083.2 720.5L1082.7 720.8L1082.2 720.5L1081.7 733.6L1081.2 722.1L1080.7 723.2L1080.2 723.0L1079.7 736.8L1079.2 727.8L1078.7 730.0L1078.2 729.6L1077.7 732.2L1077.2 721.8L1076.7 722.3L1076.2 722.1L1075.7 725.2L1075.2 721.7L1074.7 721.9L1074.2 720.8L1073.7 729.5L1073.2 727.8L1072.7 731.1L1072.2 725.4L1071.7 727.2L1071.2 725.4L1070.7 730.2L1070.2 723.3L1069.7 724.9L1069.2 723.3L1068.7 728.3L1068.2 720.0L1067.7 720.5L1067.2 720.0L1066.7 724.2L1066.2 723.5L1065.7 725.0L1065.2 723.5L1064.7 736.8L1064.2 720.6L1063.7 721.2L1063.2 720.8L1062.7 729.1L1062.2 726.9L1061.7 733.3L1061.2 732.4L1060.7 733.3L1060.2 722.6L1059.7 723.2L1059.2 722.5L1058.7 723.1L1058.2 722.0L1057.7 736.2L1057.2 731.3L1056.7 731.9L1056.2 729.7L1055.7 738.7L1055.2 731.2L1054.7 731.8L1054.2 729.1L1053.7 730.3L1053.2 722.8L1052.7 722.9L1052.2 721.7L1051.7 723.6L1051.2 722.7L1050.7 723.5L1050.2 722.2L1049.7 730.8L1049.2 729.7L1048.7 736.2L1048.2 727.3L1047.7 729.2L1047.2 729.0L1046.7 737.0L1046.2 728.4L1045.7 729.6L1045.2 728.7L1044.7 729.2L1044.2 728.2L1043.7 731.9L1043.2 724.1L1042.7 724.7L1042.2 723.9L1041.7 737.9L1041.2 732.6L1040.7 733.7L1040.2 727.7L1039.7 729.6L1039.2 721.2L1038.7 722.2L1038.2 721.8L1037.7 735.4L1037.2 734.1L1036.7 735.7L1036.2 732.9L1035.7 733.6L1035.2 722.4L1034.7 723.4L1034.2 722.0L1033.7 737.7L1033.2 732.5L1032.7 736.3L1032.2 733.6L1031.7 734.5L1031.2 730.5L1030.7 733.8L1030.2 730.9L1029.7 737.0L1029.2 730.4L1028.7 733.4L1028.2 721.3L1027.7 721.7L1027.2 720.6L1026.7 724.3L1026.2 722.8L1025.7 724.5L1025.2 723.8L1024.7 734.3L1024.2 725.7L1023.7 726.5L1023.2 725.0L1022.7 735.0L1022.2 733.1L1021.7 733.9L1021.2 725.0L1020.7 726.0L1020.2 725.1L1019.7 729.5L1019.2 728.3L1018.7 732.2L1018.2 729.3L1017.7 737.9L1017.2 733.2L1016.7 734.8L1016.2 721.0L1015.7 721.6L1015.2 721.6L1014.7 735.8L1014.2 733.2L1013.7 734.2L1013.2 731.1L1012.7 735.4L1012.2 732.5L1011.7 732.9L1011.2 722.7L1010.7 722.9L1010.2 722.9L1009.7 734.1L1009.2 731.0L1008.7 736.0L1008.2 734.0L1007.7 734.8L1007.2 730.1L1006.7 733.0L1006.2 731.5L1005.7 732.9L1005.2 718.4L1004.7 718.8L1004.2 717.9L1003.7 718.3L1003.2 716.6L1002.7 716.7L1002.2 716.6L1001.7 718.5L1001.2 718.5L1000.7 722.4L1000.2 721.2L999.7 725.0L999.2 724.3L998.7 726.2L998.2 725.0L997.7 730.8L997.2 720.3L996.7 720.7L996.2 720.3L995.7 728.9L995.2 724.5L994.7 726.1L994.2 725.6L993.7 732.4L993.2 730.9L992.7 736.6L992.2 721.8L991.7 723.0L991.2 719.7L990.7 720.2L990.2 719.7L989.7 725.3L989.2 723.6L988.7 733.9L988.2 729.2L987.7 729.6L987.2 720.3L986.7 721.2L986.2 720.9L985.7 721.4L985.2 719.8L984.7 720.2L984.2 719.8L983.7 732.1L983.2 728.1L982.7 729.1L982.2 720.5L981.7 720.6L981.2 720.2L980.7 723.9L980.2 723.1L979.7 734.6L979.2 721.1L978.7 721.1L978.2 720.6L977.7 721.4L977.2 721.1L976.7 729.3L976.2 724.2L975.7 724.3L975.2 724.1L974.7 735.7L974.2 726.6L973.7 728.8L973.2 719.8L972.7 720.6L972.2 720.2L971.7 733.1L971.2 722.5L970.7 723.5L970.2 722.0L969.7 728.3L969.2 727.6L968.7 736.9L968.2 722.6L967.7 723.0L967.2 722.2L966.7 725.6L966.2 722.5L965.7 722.5L965.2 722.3L964.7 723.1L964.2 722.9L963.7 731.8L963.2 728.9L962.7 737.0L962.2 724.7L961.7 725.2L961.2 724.8L960.7 728.5L960.2 726.8L959.7 736.1L959.2 721.6L958.7 722.6L958.2 722.5L957.7 725.0L957.2 722.1L956.7 722.4L956.2 721.4L955.7 724.9L955.2 724.5L954.7 733.9L954.2 731.0L953.7 731.5L953.2 719.7L952.7 720.1L952.2 719.5L951.7 722.1L951.2 721.3L950.7 727.4L950.2 720.4L949.7 720.6L949.2 719.9L948.7 725.8L948.2 722.1L947.7 723.2L947.2 723.1L946.7 736.9L946.2 727.7L945.7 728.4L945.2 722.1L944.7 722.4L944.2 721.3L943.7 730.6L943.2 719.6L942.7 720.4L942.2 720.3L941.7 730.4L941.2 719.9L940.7 720.2L940.2 720.1L939.7 724.4L939.2 723.7L938.7 727.4L938.2 719.2L937.7 719.8L937.2 719.6L936.7 719.8L936.2 719.2L935.7 724.2L935.2 723.5L934.7 726.9L934.2 723.2L933.7 724.5L933.2 723.8L932.7 729.7L932.2 722.3L931.7 722.8L931.2 722.7L930.7 723.7L930.2 722.7L929.7 722.8L929.2 722.6L928.7 724.3L928.2 722.8L927.7 729.8L927.2 726.0L926.7 726.6L926.2 726.3L925.7 729.3L925.2 724.1L924.7 725.0L924.2 724.3L923.7 731.7L923.2 719.9L922.7 720.9L922.2 720.4L921.7 725.8L921.2 719.4L920.7 719.9L920.2 719.2L919.7 726.6L919.2 726.5L918.7 729.4L918.2 728.2L917.7 734.9L917.2 734.4L916.7 736.3L916.2 721.1L915.7 721.2L915.2 720.9L914.7 726.1L914.2 724.9L913.7 733.3L913.2 724.1L912.7 724.6L912.2 723.2L911.7 737.1L911.2 727.1L910.7 728.5L910.2 728.4L909.7 733.4L909.2 724.4L908.7 726.3L908.2 723.9L907.7 725.3L907.2 721.7L906.7 722.4L906.2 721.0L905.7 721.4L905.2 720.6L904.7 723.4L904.2 722.0L903.7 724.7L903.2 723.2L902.7 727.8L902.2 726.8L901.7 734.2L901.2 721.7L900.7 722.9L900.2 721.3L899.7 721.8L899.2 721.6L898.7 724.9L898.2 723.6L897.7 725.7L897.2 721.8L896.7 722.7L896.2 720.3L895.7 720.7L895.2 720.7L894.7 727.5L894.2 720.8L893.7 721.7L893.2 721.2L892.7 722.1L892.2 721.3L891.7 726.6L891.2 721.3L890.7 721.5L890.2 721.5L889.7 722.0L889.2 719.8L888.7 720.0L888.2 719.5L887.7 734.3L887.2 733.4L886.7 737.7L886.2 723.3L885.7 724.0L885.2 721.1L884.7 721.3L884.2 719.4L883.7 719.8L883.2 719.2L882.7 732.2L882.2 732.0L881.7 735.6L881.2 732.1L880.7 732.9L880.2 718.7L879.7 719.2L879.2 718.7L878.7 720.2L878.2 719.9L877.7 730.8L877.2 721.7L876.7 721.9L876.2 720.7L875.7 721.3L875.2 720.7L874.7 728.8L874.2 720.1L873.7 720.4L873.2 720.2L872.7 722.9L872.2 722.7L871.7 725.6L871.2 724.8L870.7 726.7L870.2 725.0L869.7 730.4L869.2 719.6L868.7 720.5L868.2 719.6L867.7 732.6L867.2 730.2L866.7 731.6L866.2 726.7L865.7 728.4L865.2 725.9L864.7 726.2L864.2 725.4L863.7 729.3L863.2 724.3L862.7 725.9L862.2 724.0L861.7 733.7L861.2 731.2L860.7 731.6L860.2 728.0L859.7 730.2L859.2 728.6L858.7 729.6L858.2 723.3L857.7 725.0L857.2 723.9L856.7 728.5L856.2 720.1L855.7 720.3L855.2 719.7L854.7 721.2L854.2 718.8L853.7 719.4L853.2 718.8L852.7 719.0L852.2 719.0L851.7 732.6L851.2 719.3L850.7 720.0L850.2 719.4L849.7 721.8L849.2 720.7L848.7 725.9L848.2 725.5L847.7 729.1L847.2 722.5L846.7 723.4L846.2 721.9L845.7 722.9L845.2 721.8L844.7 729.8L844.2 727.4L843.7 730.2L843.2 728.7L842.7 729.0L842.2 722.7L841.7 723.1L841.2 719.8L840.7 720.0L840.2 719.6L839.7 720.9L839.2 719.9L838.7 724.4L838.2 719.9L837.7 720.5L837.2 719.7L836.7 725.7L836.2 724.3L835.7 726.1L835.2 725.3L834.7 729.7L834.2 725.0L833.7 725.5L833.2 722.2L832.7 723.1L832.2 722.1L831.7 725.5L831.2 723.7L830.7 725.0L830.2 723.3L829.7 734.0L829.2 732.1L828.7 737.6L828.2 729.6L827.7 730.9L827.2 728.3L826.7 735.6L826.2 726.9L825.7 726.9L825.2 725.6L824.7 734.4L824.2 734.4L823.7 737.7L823.2 731.6L822.7 734.1L822.2 729.0L821.7 730.7L821.2 721.4L820.7 722.0L820.2 721.1L819.7 729.6L819.2 722.2L818.7 722.7L818.2 721.5L817.7 737.7L817.2 728.5L816.7 729.6L816.2 726.1L815.7 727.3L815.2 721.5L814.7 721.6L814.2 721.4L813.7 728.0L813.2 727.2L812.7 730.8L812.2 730.6L811.7 731.4L811.2 725.1L810.7 726.0L810.2 724.1L809.7 733.4L809.2 730.2L808.7 731.2L808.2 726.6L807.7 727.6L807.2 725.8L806.7 728.4L806.2 719.8L805.7 720.2L805.2 719.6L804.7 724.1L804.2 723.2L803.7 727.5L803.2 716.9L802.7 717.1L802.2 717.0L801.7 722.6L801.2 720.2L800.7 720.4L800.2 719.9L799.7 726.9L799.2 725.8L798.7 733.6L798.2 727.6L797.7 728.7L797.2 725.4L796.7 725.6L796.2 720.8L795.7 721.3L795.2 720.5L794.7 720.9L794.2 720.0L793.7 735.8L793.2 728.3L792.7 729.8L792.2 719.7L791.7 720.4L791.2 719.9L790.7 725.1L790.2 723.5L789.7 725.2L789.2 724.9L788.7 730.2L788.2 719.9L787.7 720.7L787.2 719.8L786.7 721.9L786.2 720.5L785.7 721.2L785.2 720.7L784.7 731.3L784.2 727.8L783.7 727.9L783.2 724.4L782.7 724.6L782.2 723.9L781.7 730.2L781.2 721.8L780.7 722.7L780.2 720.2L779.7 720.2L779.2 719.9L778.7 732.1L778.2 724.6L777.7 726.1L777.2 724.8L776.7 726.4L776.2 720.9L775.7 721.1L775.2 720.9L774.7 733.7L774.2 721.2L773.7 721.4L773.2 721.3L772.7 730.1L772.2 719.8L771.7 720.8L771.2 720.0L770.7 723.9L770.2 722.3L769.7 726.8L769.2 725.6L768.7 727.9L768.2 726.9L767.7 731.4L767.2 728.8L766.7 730.2L766.2 729.2L765.7 731.4L765.2 721.8L764.7 721.8L764.2 721.7L763.7 727.5L763.2 726.2L762.7 737.0L762.2 720.1L761.7 721.1L761.2 720.4L760.7 735.1L760.2 720.1L759.7 720.2L759.2 719.4L758.7 731.4L758.2 717.9L757.7 718.4L757.2 718.4L756.7 726.6L756.2 716.8L755.7 716.9L755.2 716.9L754.7 717.6L754.2 717.6L753.7 725.9L753.2 720.5L752.7 720.6L752.2 720.2L751.7 723.4L751.2 722.9L750.7 732.8L750.2 721.6L749.7 722.8L749.2 721.0L748.7 722.0L748.2 721.5L747.7 722.8L747.2 721.7L746.7 730.9L746.2 721.3L745.7 721.9L745.2 721.7L744.7 722.2L744.2 721.9L743.7 731.0L743.2 725.1L742.7 727.3L742.2 723.0L741.7 724.5L741.2 724.2L740.7 736.4L740.2 723.9L739.7 724.0L739.2 718.9L738.7 719.4L738.2 719.3L737.7 725.6L737.2 722.2L736.7 722.6L736.2 721.9L735.7 724.6L735.2 720.8L734.7 721.6L734.2 721.0L733.7 727.4L733.2 725.9L732.7 730.8L732.2 727.8L731.7 728.7L731.2 727.1L730.7 729.8L730.2 725.5L729.7 727.2L729.2 727.0L728.7 735.9L728.2 735.7L727.7 737.8L727.2 733.7L726.7 735.3L726.2 727.0L725.7 728.7L725.2 724.0L724.7 724.7L724.2 723.9L723.7 733.2L723.2 725.7L722.7 726.1L722.2 721.9L721.7 722.4L721.2 720.8L720.7 721.6L720.2 721.1L719.7 724.8L719.2 719.7L718.7 720.0L718.2 719.9L717.7 727.1L717.2 723.2L716.7 723.8L716.2 722.5L715.7 729.0L715.2 720.2L714.7 720.5L714.2 719.7L713.7 728.7L713.2 719.9L712.7 720.4L712.2 719.7L711.7 721.4L711.2 720.9L710.7 721.2L710.2 721.2L709.7 731.5L709.2 721.5L708.7 721.8L708.2 719.6L707.7 720.1L707.2 719.4L706.7 728.7L706.2 727.2L705.7 730.4L705.2 720.3L704.7 720.9L704.2 720.5L703.7 730.3L703.2 725.6L702.7 726.5L702.2 717.3L701.7 717.7L701.2 717.6L700.7 724.6L700.2 719.4L699.7 719.7L699.2 719.0L698.7 727.6L698.2 725.2L697.7 726.2L697.2 724.9L696.7 733.0L696.2 727.0L695.7 727.1L695.2 724.4L694.7 725.7L694.2 724.9L693.7 731.0L693.2 727.1L692.7 729.1L692.2 727.7L691.7 734.8L691.2 726.2L690.7 728.1L690.2 721.9L689.7 722.5L689.2 721.5L688.7 723.9L688.2 723.2L687.7 729.7L687.2 721.4L686.7 722.1L686.2 721.5L685.7 724.7L685.2 717.8L684.7 718.2L684.2 717.1L683.7 717.4L683.2 717.3L682.7 724.1L682.2 718.3L681.7 718.5L681.2 718.5L680.7 723.3L680.2 722.4L679.7 723.8L679.2 723.6L678.7 735.2L678.2 724.5L677.7 726.0L677.2 724.7L676.7 729.6L676.2 727.1L675.7 727.3L675.2 725.2L674.7 731.0L674.2 725.2L673.7 725.6L673.2 720.3L672.7 721.1L672.2 720.4L671.7 723.2L671.2 721.6L670.7 722.7L670.2 721.8L669.7 729.2L669.2 728.0L668.7 732.7L668.2 725.0L667.7 726.8L667.2 723.8L666.7 724.9L666.2 723.5L665.7 731.8L665.2 729.8L664.7 732.4L664.2 722.3L663.7 723.4L663.2 722.8L662.7 730.4L662.2 728.0L661.7 736.1L661.2 727.1L660.7 727.9L660.2 722.0L659.7 722.0L659.2 721.3L658.7 721.9L658.2 721.5L657.7 722.8L657.2 720.4L656.7 721.3L656.2 720.7L655.7 725.2L655.2 723.9L654.7 723.9L654.2 723.3L653.7 724.6L653.2 721.9L652.7 722.3L652.2 719.6L651.7 719.6L651.2 719.6L650.7 729.3L650.2 719.6L649.7 719.9L649.2 719.5L648.7 722.6L648.2 722.5L647.7 728.9L647.2 728.5L646.7 730.7L646.2 729.8L645.7 733.3L645.2 722.5L644.7 724.0L644.2 723.0L643.7 733.3L643.2 721.5L642.7 722.0L642.2 721.5L641.7 736.1L641.2 730.6L640.7 732.2L640.2 728.8L639.7 729.2L639.2 727.2L638.7 727.3L638.2 721.5L637.7 722.2L637.2 722.2L636.7 731.0L636.2 727.3L635.7 729.9L635.2 723.6L634.7 725.1L634.2 722.8L633.7 723.5L633.2 723.3L632.7 726.0L632.2 725.9L631.7 727.4L631.2 726.8L630.7 733.3L630.2 730.8L629.7 733.3L629.2 724.6L628.7 724.8L628.2 724.7L627.7 736.5L627.2 729.5L626.7 730.9L626.2 730.1L625.7 735.6L625.2 729.6L624.7 732.0L624.2 729.3L623.7 732.6L623.2 725.7L622.7 727.1L622.2 722.4L621.7 723.4L621.2 722.7L620.7 734.2L620.2 723.9L619.7 725.7L619.2 724.7L618.7 738.0L618.2 722.3L617.7 723.0L617.2 723.0L616.7 730.8L616.2 729.3L615.7 734.1L615.2 722.3L614.7 722.4L614.2 721.7L613.7 726.3L613.2 724.9L612.7 728.5L612.2 727.4L611.7 732.2L611.2 721.9L610.7 722.4L610.2 721.4L609.7 724.2L609.2 723.3L608.7 734.5L608.2 726.6L607.7 727.3L607.2 726.7L606.7 732.3L606.2 721.7L605.7 723.1L605.2 722.3L604.7 725.9L604.2 725.1L603.7 727.4L603.2 718.6L602.7 718.6L602.2 716.2L601.7 716.3L601.2 716.1L600.7 722.0L600.2 716.4L599.7 716.6L599.2 716.4L598.7 718.7L598.2 718.4L597.7 720.9L597.2 720.0L596.7 725.8L596.2 725.7L595.7 729.4L595.2 728.6L594.7 735.7L594.2 721.8L593.7 722.5L593.2 722.0L592.7 734.0L592.2 728.6L591.7 730.8L591.2 720.1L590.7 721.1L590.2 720.6L589.7 722.7L589.2 722.0L588.7 734.9L588.2 731.9L587.7 734.9L587.2 721.8L586.7 722.2L586.2 721.4L585.7 735.3L585.2 722.1L584.7 723.4L584.2 722.9L583.7 735.5L583.2 722.0L582.7 722.5L582.2 722.0L581.7 734.1L581.2 723.0L580.7 724.0L580.2 723.4L579.7 729.8L579.2 728.1L578.7 737.0L578.2 732.0L577.7 732.5L577.2 728.9L576.7 730.3L576.2 728.0L575.7 731.9L575.2 729.4L574.7 733.6L574.2 727.3L573.7 729.3L573.2 721.9L572.7 722.2L572.2 721.1L571.7 722.8L571.2 722.5L570.7 732.6L570.2 729.6L569.7 736.8L569.2 722.0L568.7 722.4L568.2 721.2L567.7 722.6L567.2 721.4L566.7 736.5L566.2 722.4L565.7 722.6L565.2 721.4L564.7 725.3L564.2 725.2L563.7 730.8L563.2 729.3L562.7 736.9L562.2 722.9L561.7 723.9L561.2 723.1L560.7 732.3L560.2 721.8L559.7 722.5L559.2 721.5L558.7 735.0L558.2 723.1L557.7 724.7L557.2 723.1L556.7 726.9L556.2 725.6L555.7 728.9L555.2 721.0L554.7 721.0L554.2 720.3L553.7 727.1L553.2 718.9L552.7 718.9L552.2 718.3L551.7 722.3L551.2 721.9L550.7 725.7L550.2 725.6L549.7 727.7L549.2 722.7L548.7 722.8L548.2 720.8L547.7 720.9L547.2 720.3L546.7 729.7L546.2 726.4L545.7 726.6L545.2 725.1L544.7 728.9L544.2 722.4L543.7 722.8L543.2 720.9L542.7 721.9L542.2 720.8L541.7 724.4L541.2 723.8L540.7 729.8L540.2 726.6L539.7 727.4L539.2 725.0L538.7 725.4L538.2 724.2L537.7 728.5L537.2 727.6L536.7 728.8L536.2 725.1L535.7 726.5L535.2 722.4L534.7 723.1L534.2 719.8L533.7 720.5L533.2 719.9L532.7 720.9L532.2 720.5L531.7 720.9L531.2 720.6L530.7 728.0L530.2 724.0L529.7 725.5L529.2 721.2L528.7 722.1L528.2 722.0L527.7 723.0L527.2 722.6L526.7 732.4L526.2 724.4L525.7 725.9L525.2 725.3L524.7 737.0L524.2 722.1L523.7 722.4L523.2 721.5L522.7 736.8L522.2 724.6L521.7 725.6L521.2 724.9L520.7 730.4L520.2 725.7L519.7 727.1L519.2 726.2L518.7 738.8L518.2 733.6L517.7 737.2L517.2 729.6L516.7 730.4L516.2 728.4L515.7 731.3L515.2 729.1L514.7 735.3L514.2 723.3L513.7 724.0L513.2 722.2L512.7 723.1L512.2 722.9L511.7 724.3L511.2 723.5L510.7 728.8L510.2 728.1L509.7 735.2L509.2 728.0L508.7 729.4L508.2 725.1L507.7 725.5L507.2 725.4L506.7 734.5L506.2 720.1L505.7 720.9L505.2 719.8L504.7 720.2L504.2 719.7L503.7 729.6L503.2 718.1L502.7 718.5L502.2 718.4L501.7 719.0L501.2 718.7L500.7 719.4L500.2 718.7L499.7 718.8L499.2 718.3L498.7 726.4L498.2 721.2L497.7 722.1L497.2 721.2L496.7 730.6L496.2 725.0L495.7 725.2L495.2 721.9L494.7 722.0L494.2 720.8L493.7 726.5L493.2 724.2L492.7 724.7L492.2 724.5L491.7 735.1L491.2 732.5L490.7 734.5L490.2 723.3L489.7 723.4L489.2 722.3L488.7 733.6L488.2 731.0L487.7 735.7L487.2 735.2L486.7 737.1L486.2 735.1L485.7 737.9L485.2 721.8L484.7 722.9L484.2 721.9L483.7 733.7L483.2 722.8L482.7 723.3L482.2 720.6L481.7 721.5L481.2 720.6L480.7 720.8L480.2 720.3L479.7 721.7L479.2 721.1L478.7 725.4L478.2 721.1L477.7 721.5L477.2 720.8L476.7 730.0L476.2 727.7L475.7 735.2L475.2 720.9L474.7 722.1L474.2 721.4L473.7 726.3L473.2 719.5L472.7 720.1L472.2 720.0L471.7 729.8L471.2 725.9L470.7 728.1L470.2 720.2L469.7 721.3L469.2 720.3L468.7 729.8L468.2 728.3L467.7 732.4L467.2 721.6L466.7 722.6L466.2 721.6L465.7 727.4L465.2 725.8L464.7 729.5L464.2 723.8L463.7 725.3L463.2 723.9L462.7 728.1L462.2 727.5L461.7 729.2L461.2 727.2L460.7 730.4L460.2 721.5L459.7 721.5L459.2 721.4L458.7 728.2L458.2 726.2L457.7 728.1L457.2 724.8L456.7 725.4L456.2 723.9L455.7 727.2L455.2 721.2L454.7 721.9L454.2 721.8L453.7 722.1L453.2 718.2L452.7 718.2L452.2 718.2L451.7 720.8L451.2 719.3L450.7 720.1L450.2 719.6L449.7 723.9L449.2 718.5L448.7 719.2L448.2 718.9L447.7 727.1L447.2 720.7L446.7 721.3L446.2 720.6L445.7 724.4L445.2 720.8L444.7 721.5L444.2 720.5L443.7 724.6L443.2 722.4L442.7 722.8L442.2 722.2L441.7 730.9L441.2 727.6L440.7 728.9L440.2 728.3L439.7 729.9L439.2 728.1L438.7 730.3L438.2 725.6L437.7 726.5L437.2 719.9L436.7 720.9L436.2 720.8L435.7 728.4L435.2 721.7L434.7 722.1L434.2 721.5L433.7 725.4L433.2 724.5L432.7 732.4L432.2 720.3L431.7 721.3L431.2 720.7L430.7 731.9L430.2 721.8L429.7 722.8L429.2 721.4L428.7 722.5L428.2 722.4L427.7 729.6L427.2 720.1L426.7 720.7L426.2 720.5L425.7 729.4L425.2 727.2L424.7 728.9L424.2 728.8L423.7 729.6L423.2 725.0L422.7 725.1L422.2 724.2L421.7 727.9L421.2 722.5L420.7 723.0L420.2 721.9L419.7 734.1L419.2 727.3L418.7 727.8L418.2 727.4L417.7 727.9L417.2 727.5L416.7 734.4L416.2 730.3L415.7 731.4L415.2 723.6L414.7 724.8L414.2 723.5L413.7 733.8L413.2 728.9L412.7 731.4L412.2 724.2L411.7 725.2L411.2 724.1L410.7 737.1L410.2 727.2L409.7 728.4L409.2 728.2L408.7 730.7L408.2 727.5L407.7 728.6L407.2 727.0L406.7 727.7L406.2 727.1L405.7 737.6L405.2 729.0L404.7 731.5L404.2 727.4L403.7 728.7L403.2 720.5L402.7 721.0L402.2 719.1L401.7 719.7L401.2 719.4L400.7 724.6L400.2 719.1L399.7 719.4L399.2 718.7L398.7 719.2L398.2 719.1L397.7 725.5L397.2 725.3L396.7 727.1L396.2 726.1L395.7 729.3L395.2 721.0L394.7 721.1L394.2 720.4L393.7 730.0L393.2 720.4L392.7 721.1L392.2 721.1L391.7 723.2L391.2 722.8L390.7 728.9L390.2 727.4L389.7 731.2L389.2 722.0L388.7 723.4L388.2 722.1L387.7 728.7L387.2 727.8L386.7 731.1L386.2 730.5L385.7 733.3L385.2 722.5L384.7 723.2L384.2 722.7L383.7 726.3L383.2 725.8L382.7 734.1L382.2 729.3L381.7 731.9L381.2 729.0L380.7 729.9L380.2 728.4L379.7 729.0L379.2 726.9L378.7 728.5L378.2 726.6L377.7 729.7L377.2 721.9L376.7 722.1L376.2 720.3L375.7 720.8L375.2 718.9L374.7 719.0L374.2 718.6L373.7 722.6L373.2 722.4L372.7 725.5L372.2 718.8L371.7 719.2L371.2 719.0L370.7 721.5L370.2 719.8L369.7 719.8L369.2 719.2L368.7 723.4L368.2 721.1L367.7 722.2L367.2 721.1L366.7 721.2L366.2 720.7L365.7 730.6L365.2 720.0L364.7 720.1L364.2 719.7L363.7 726.8L363.2 726.8L362.7 728.1L362.2 723.8L361.7 723.9L361.2 723.2L360.7 727.0L360.2 726.1L359.7 729.2L359.2 726.2L358.7 726.6L358.2 720.2L357.7 721.1L357.2 720.6L356.7 721.4L356.2 720.6L355.7 721.7L355.2 720.8L354.7 724.3L354.2 723.6L353.7 723.7L353.2 719.4L352.7 720.2L352.2 719.6L351.7 734.3L351.2 722.7L350.7 723.1L350.2 721.3L349.7 722.0L349.2 720.9L348.7 722.2L348.2 718.3L347.7 718.4L347.2 718.3L346.7 730.8L346.2 723.9L345.7 725.7L345.2 723.6L344.7 725.0L344.2 723.6L343.7 727.1L343.2 720.6L342.7 721.4L342.2 721.3L341.7 724.5L341.2 724.3L340.7 729.9L340.2 721.2L339.7 722.1L339.2 721.0L338.7 723.2L338.2 722.1L337.7 730.1L337.2 718.6L336.7 718.9L336.2 718.8L335.7 722.7L335.2 719.7L334.7 720.0L334.2 719.3L333.7 719.5L333.2 717.8L332.7 717.9L332.2 717.5L331.7 724.7L331.2 724.1L330.7 731.9L330.2 728.9L329.7 729.7L329.2 719.7L328.7 720.4L328.2 719.8L327.7 729.7L327.2 719.9L326.7 720.5L326.2 720.0L325.7 729.2L325.2 725.9L324.7 726.3L324.2 725.6L323.7 734.3L323.2 719.6L322.7 720.3L322.2 719.5L321.7 730.0L321.2 724.3L320.7 724.8L320.2 723.3L319.7 724.5L319.2 723.0L318.7 724.2L318.2 723.2L317.7 727.5L317.2 726.0L316.7 734.4L316.2 730.1L315.7 732.0L315.2 727.7L314.7 727.7L314.2 727.2L313.7 738.3L313.2 728.6L312.7 729.2L312.2 724.8L311.7 725.6L311.2 721.2L310.7 722.2L310.2 721.9L309.7 724.1L309.2 720.7L308.7 721.8L308.2 721.3L307.7 734.8L307.2 731.9L306.7 736.5L306.2 724.5L305.7 724.5L305.2 723.9L304.7 725.1L304.2 723.7L303.7 729.4L303.2 728.9L302.7 736.0L302.2 727.0L301.7 729.4L301.2 724.5L300.7 724.9L300.2 716.7L299.7 716.9L299.2 716.7L298.7 717.0L298.2 717.0L297.7 719.9L297.2 719.2L296.7 729.4L296.2 720.2L295.7 720.6L295.2 720.5L294.7 725.9L294.2 725.1L293.7 730.2L293.2 727.7L292.7 728.3L292.2 726.6L291.7 733.8L291.2 722.3L290.7 723.3L290.2 722.1L289.7 726.4L289.2 724.9L288.7 729.3L288.2 728.5L287.7 732.7L287.2 730.5L286.7 732.5L286.2 725.1L285.7 725.3L285.2 724.2L284.7 735.0L284.2 731.6L283.7 735.1L283.2 726.7L282.7 726.9L282.2 720.6L281.7 720.7L281.2 717.9L280.7 718.1L280.2 717.7L279.7 717.7L279.2 717.5L278.7 726.0L278.2 725.5L277.7 727.2L277.2 721.8L276.7 722.3L276.2 722.3L275.7 733.7L275.2 729.6L274.7 732.1L274.2 727.0L273.7 729.0L273.2 726.4L272.7 728.1L272.2 719.9L271.7 720.8L271.2 719.8L270.7 719.8L270.2 719.2L269.7 720.7L269.2 720.4L268.7 730.1L268.2 721.3L267.7 721.6L267.2 721.5L266.7 734.9L266.2 720.3L265.7 721.0L265.2 720.7L264.7 721.2L264.2 720.4L263.7 727.0L263.2 726.1L262.7 732.8L262.2 728.6L261.7 730.6L261.2 725.3L260.7 726.4L260.2 726.2L259.7 737.5L259.2 737.4L258.7 737.5L258.2 715.9L257.7 716.0L257.2 715.9L256.7 715.9L256.2 715.9L255.7 716.1L255.2 716.1L254.7 716.5L254.2 716.4L253.7 717.7L253.2 716.4L252.7 716.6L252.2 716.4L251.7 718.4L251.2 717.9L250.7 719.1L250.2 717.7L249.7 718.2L249.2 717.5L248.7 717.9L248.2 717.3L247.7 717.3L247.2 717.2L246.7 721.2L246.2 720.3L245.7 721.5L245.2 721.2L244.7 723.1L244.2 722.3L243.7 724.3L243.2 723.3L242.7 725.4L242.2 721.8L241.7 722.1L241.2 721.0L240.7 726.7L240.2 720.4L239.7 720.7L239.2 720.3L238.7 722.7L238.2 722.6L237.7 724.6L237.2 724.4L236.7 724.6L236.2 720.3L235.7 720.7L235.2 720.3L234.7 721.3L234.2 720.5L233.7 727.6L233.2 724.0L232.7 725.6L232.2 721.6L231.7 722.7L231.2 719.7L230.7 719.9L230.2 719.6L229.7 724.8L229.2 720.8L228.7 721.7L228.2 721.5L227.7 722.0L227.2 722.0L226.7 726.9L226.2 720.2L225.7 720.5L225.2 720.1L224.7 726.0L224.2 722.9L223.7 723.0L223.2 721.7L222.7 724.1L222.2 723.7L221.7 726.9L221.2 718.4L220.7 718.7L220.2 717.7L219.7 717.9L219.2 717.4L218.7 717.5L218.2 717.4L217.7 720.6L217.2 719.4L216.7 719.9L216.2 717.5L215.7 717.8L215.2 717.6L214.7 719.8L214.2 719.7L213.7 722.5L213.2 718.9L212.7 719.4L212.2 718.7L211.7 719.1L211.2 718.5L210.7 719.1L210.2 718.8L209.7 719.4L209.2 719.1L208.7 720.0L208.2 719.6L207.7 730.1L207.2 719.2L206.7 719.6L206.2 718.9L205.7 729.0L205.2 726.7L204.7 728.2L204.2 719.2L203.7 719.9L203.2 719.5L202.7 723.0L202.2 721.7L201.7 725.8L201.2 724.4L200.7 728.0L200.2 719.9L199.7 720.7L199.2 719.8L198.7 724.8L198.2 722.3L197.7 723.1L197.2 718.9L196.7 719.1L196.2 719.0L195.7 720.0L195.2 719.1L194.7 719.8L194.2 717.4L193.7 717.7L193.2 717.6L192.7 724.0L192.2 722.6L191.7 723.3L191.2 722.1L190.7 722.3L190.2 718.0L189.7 718.4L189.2 718.1L188.7 723.7L188.2 719.1L187.7 719.2L187.2 719.0L186.7 724.0L186.2 723.4L185.7 723.5L185.2 723.5L184.7 723.7L184.2 723.3L183.7 730.1L183.2 718.0L182.7 718.5L182.2 718.2L181.7 721.3L181.2 718.5L180.7 719.1L180.2 718.6L179.7 725.3L179.2 723.7L178.7 729.2L178.2 722.8L177.7 722.9L177.2 720.7L176.7 720.8L176.2 720.3L175.7 724.5L175.2 720.2L174.7 721.0L174.2 720.6L173.7 728.1L173.2 724.3L172.7 724.3L172.2 721.3L171.7 721.9L171.2 720.8L170.7 726.4L170.2 720.7L169.7 721.2L169.2 720.4L168.7 721.1L168.2 717.1L167.7 717.2L167.2 717.1L166.7 720.0L166.2 719.3L165.7 720.3L165.2 720.0L164.7 721.6L164.2 721.1L163.7 724.5L163.2 720.3L162.7 721.0L162.2 718.9L161.7 718.9L161.2 718.3L160.7 726.6L160.2 720.5L159.7 720.6L159.2 720.4L158.7 721.0L158.2 720.7L157.7 727.5L157.2 725.1L156.7 725.6L156.2 723.4L155.7 724.3L155.2 723.3L154.7 723.5L154.2 722.3L153.7 727.8L153.2 725.8L152.7 727.1L152.2 725.4L151.7 729.1L151.2 720.3L150.7 721.3L150.2 720.9L149.7 725.4L149.2 724.7L148.7 725.2L148.2 722.0L147.7 722.0L147.2 719.2L146.7 719.7L146.2 719.0L145.7 726.6L145.2 720.1L144.7 721.0L144.2 720.4L143.7 721.0L143.2 718.4L142.7 718.6L142.2 718.4L141.7 720.1L141.2 718.2L140.7 718.5L140.2 717.0L139.7 717.1L139.2 716.9L138.7 720.3L138.2 717.8L137.7 718.2L137.2 717.7L136.7 722.2L136.2 721.5L135.7 723.5L135.2 720.4L134.7 720.5L134.2 719.6L133.7 723.2L133.2 718.2L132.7 718.6L132.2 718.4L131.7 729.0L131.2 725.3L130.7 726.1L130.2 725.6L129.7 728.0L129.2 727.9L128.7 729.2L128.2 722.7L127.7 723.8L127.2 723.1L126.7 728.8L126.2 728.6L125.7 728.7L125.2 724.5L124.7 724.8L124.2 720.1L123.7 720.8L123.2 719.4L122.7 720.1L122.2 719.4L121.7 724.9L121.2 722.3L120.7 723.8L120.2 720.3L119.7 721.2L119.2 720.5L118.7 722.8L118.2 717.8L117.7 718.1L117.2 717.9L116.7 718.4L116.2 717.9L115.7 721.4L115.2 720.4L114.7 724.2L114.2 723.2L113.7 723.4L113.2 722.1L112.7 726.5L112.2 724.0L111.7 725.1L111.2 723.0L110.7 724.7L110.2 723.6L109.7 725.8L109.2 725.5L108.7 725.7L108.2 724.4L107.7 725.7L107.2 724.3L106.7 724.4L106.2 722.8L105.7 726.1L105.2 718.6L104.7 718.8L104.2 718.3L103.7 722.6L103.2 722.1L102.7 724.8L102.2 723.1L101.7 724.0L101.2 722.6L100.7 724.8L100.2 723.1L99.7 728.9L99.2 720.1L98.7 720.7L98.2 718.3L97.7 718.4L97.2 718.3L96.7 726.6L96.2 717.9L95.7 718.0L95.2 717.6L94.7 721.2L94.2 721.0L93.7 721.6L93.2 717.7L92.7 717.8L92.2 717.8L91.7 719.0L91.2 718.8L90.7 723.7L90.2 722.4L89.7 723.1L89.2 719.0L88.7 719.0L88.2 718.6L87.7 719.1L87.2 718.5L86.7 721.0L86.2 720.4L85.7 727.1L85.2 726.5L84.7 728.0L84.2 725.8L83.7 726.3L83.2 725.2L82.7 728.8L82.2 727.7L81.7 728.0L81.2 724.8L80.7 726.8L80.2 721.8L79.7 722.9L79.2 718.9L78.7 719.5L78.2 718.9L77.7 727.8L77.2 719.2L76.7 719.2L76.2 719.2L75.7 726.0L75.2 718.9L74.7 719.0L74.2 718.7L73.7 719.9L73.2 719.3L72.7 720.2L72.2 717.9L71.7 718.0L71.2 717.3L70.7 717.5L70.2 717.3L69.7 719.1L69.2 716.7L68.7 716.8L68.2 716.6L67.7 719.7L67.2 719.2L66.7 721.3L66.2 720.7L65.7 722.0L65.2 721.6L64.7 727.1L64.2 722.1L63.7 723.3L63.2 720.4L62.7 720.9L62.2 718.4L61.7 718.7L61.2 718.4L60.7 720.6L60.2 720.0L59.7 721.8L59.2 721.5L58.7 723.9L58.2 722.9L57.7 727.9L57.2 719.0L56.7 719.0L56.2 718.3L55.7 718.4L55.2 718.0L54.7 719.1L54.2 718.7L53.7 722.8L53.2 718.4L52.7 718.6L52.2 718.2L51.7 719.0L51.2 718.5L50.7 721.0L50.2 720.1L49.7 726.0L49.2 724.0L48.7 724.9L48.2 723.6L47.7 725.1L47.2 724.1L46.7 727.7L46.2 727.6L45.7 727.9L45.2 725.4L44.7 726.7Z"/>
<clipPath id="cl"><rect x="0" y="0" width="841.5" height="812"/></clipPath>
<clipPath id="cr"><rect x="841.5" y="0" width="600" height="812"/></clipPath></defs>
<rect x="44.2" y="418" width="1.0" height="19" fill="#d4d4d4"/>
<text x="49.7" y="437" font-size="10" fill="#7d7d7d">0</text>
<rect x="73.0" y="418" width="1.0" height="17" fill="#d4d4d4"/>
<rect x="101.9" y="418" width="1.0" height="19" fill="#d4d4d4"/>
<text x="107.4" y="437" font-size="10" fill="#a6a6a6">10</text>
<rect x="130.8" y="418" width="1.0" height="17" fill="#d4d4d4"/>
<rect x="159.6" y="418" width="1.0" height="19" fill="#d4d4d4"/>
<text x="165.1" y="437" font-size="10" fill="#a6a6a6">20</text>
<rect x="188.4" y="418" width="1.0" height="17" fill="#d4d4d4"/>
<rect x="217.0" y="418" width="1.6" height="19" fill="#b4b4b4"/>
<text x="222.8" y="437" font-size="10" fill="#7d7d7d">30</text>
<rect x="246.1" y="418" width="1.0" height="17" fill="#d4d4d4"/>
<rect x="275.0" y="418" width="1.0" height="19" fill="#d4d4d4"/>
<text x="280.5" y="437" font-size="10" fill="#a6a6a6">40</text>
<rect x="303.8" y="418" width="1.0" height="17" fill="#d4d4d4"/>
<rect x="332.7" y="418" width="1.0" height="19" fill="#d4d4d4"/>
<text x="338.2" y="437" font-size="10" fill="#a6a6a6">50</text>
<rect x="361.5" y="418" width="1.0" height="17" fill="#d4d4d4"/>
<rect x="390.1" y="418" width="1.6" height="19" fill="#b4b4b4"/>
<text x="395.9" y="437" font-size="10" fill="#7d7d7d">60</text>
<rect x="419.2" y="418" width="1.0" height="17" fill="#d4d4d4"/>
<rect x="448.1" y="418" width="1.0" height="19" fill="#d4d4d4"/>
<text x="453.6" y="437" font-size="10" fill="#a6a6a6">1:10</text>
<rect x="476.9" y="418" width="1.0" height="17" fill="#d4d4d4"/>
<rect x="505.8" y="418" width="1.0" height="19" fill="#d4d4d4"/>
<text x="511.3" y="437" font-size="10" fill="#a6a6a6">1:20</text>
<rect x="534.6" y="418" width="1.0" height="17" fill="#d4d4d4"/>
<rect x="563.2" y="418" width="1.6" height="19" fill="#b4b4b4"/>
<text x="569.0" y="437" font-size="10" fill="#7d7d7d">1:30</text>
<rect x="592.4" y="418" width="1.0" height="17" fill="#d4d4d4"/>
<rect x="621.2" y="418" width="1.0" height="19" fill="#d4d4d4"/>
<text x="626.7" y="437" font-size="10" fill="#a6a6a6">1:40</text>
<rect x="650.0" y="418" width="1.0" height="17" fill="#d4d4d4"/>
<rect x="678.9" y="418" width="1.0" height="19" fill="#d4d4d4"/>
<text x="684.4" y="437" font-size="10" fill="#a6a6a6">1:50</text>
<rect x="707.8" y="418" width="1.0" height="17" fill="#d4d4d4"/>
<rect x="736.3" y="418" width="1.6" height="19" fill="#b4b4b4"/>
<text x="742.1" y="437" font-size="10" fill="#7d7d7d">2:00</text>
<rect x="765.5" y="418" width="1.0" height="17" fill="#d4d4d4"/>
<rect x="794.3" y="418" width="1.0" height="19" fill="#d4d4d4"/>
<text x="799.8" y="437" font-size="10" fill="#a6a6a6">2:10</text>
<rect x="823.1" y="418" width="1.0" height="17" fill="#d4d4d4"/>
<rect x="852.0" y="418" width="1.0" height="19" fill="#d4d4d4"/>
<text x="857.5" y="437" font-size="10" fill="#a6a6a6">2:20</text>
<rect x="880.9" y="418" width="1.0" height="17" fill="#d4d4d4"/>
<rect x="909.4" y="418" width="1.6" height="19" fill="#b4b4b4"/>
<text x="915.2" y="437" font-size="10" fill="#7d7d7d">2:30</text>
<rect x="938.5" y="418" width="1.0" height="17" fill="#d4d4d4"/>
<rect x="967.4" y="418" width="1.0" height="19" fill="#d4d4d4"/>
<text x="972.9" y="437" font-size="10" fill="#a6a6a6">2:40</text>
<rect x="996.2" y="418" width="1.0" height="17" fill="#d4d4d4"/>
<rect x="1025.1" y="418" width="1.0" height="19" fill="#d4d4d4"/>
<text x="1030.6" y="437" font-size="10" fill="#a6a6a6">2:50</text>
<rect x="1053.9" y="418" width="1.0" height="17" fill="#d4d4d4"/>
<rect x="1082.5" y="418" width="1.6" height="19" fill="#b4b4b4"/>
<text x="1088.3" y="437" font-size="10" fill="#7d7d7d">3:00</text>
<rect x="1111.6" y="418" width="1.0" height="17" fill="#d4d4d4"/>
<rect x="1140.5" y="418" width="1.0" height="19" fill="#d4d4d4"/>
<text x="1146.0" y="437" font-size="10" fill="#a6a6a6">3:10</text>
<rect x="1169.3" y="418" width="1.0" height="17" fill="#d4d4d4"/>
<rect x="1198.2" y="418" width="1.0" height="19" fill="#d4d4d4"/>
<text x="1203.7" y="437" font-size="10" fill="#a6a6a6">3:20</text>
<rect x="1227.0" y="418" width="1.0" height="17" fill="#d4d4d4"/>
<use href="#wm" fill="#3d93a5" clip-path="url(#cl)"/>
<use href="#wm" fill="#6ecbde" clip-path="url(#cr)"/>
<use href="#wn" fill="#9b9b9b" clip-path="url(#cl)"/>
<use href="#wn" fill="#dedede" clip-path="url(#cr)"/>
<rect x="763.5" y="438" width="402.0" height="126.5" fill="rgb(240,250,80)" fill-opacity="0.25"/>
<rect x="762.5" y="438" width="2" height="126.5" fill="#e57a35"/>
<rect x="1164.5" y="438" width="2" height="126.5" fill="#e57a35"/>
<rect x="841.0" y="438" width="1" height="302" fill="#3a3a3a"/>
<rect x="1023.0" y="418" width="1" height="322" fill="#555"/>
<text x="1023" y="585" font-size="16" fill="rgba(0,0,0,0.48)">2:49:505</text>
</svg>
</body></html>
